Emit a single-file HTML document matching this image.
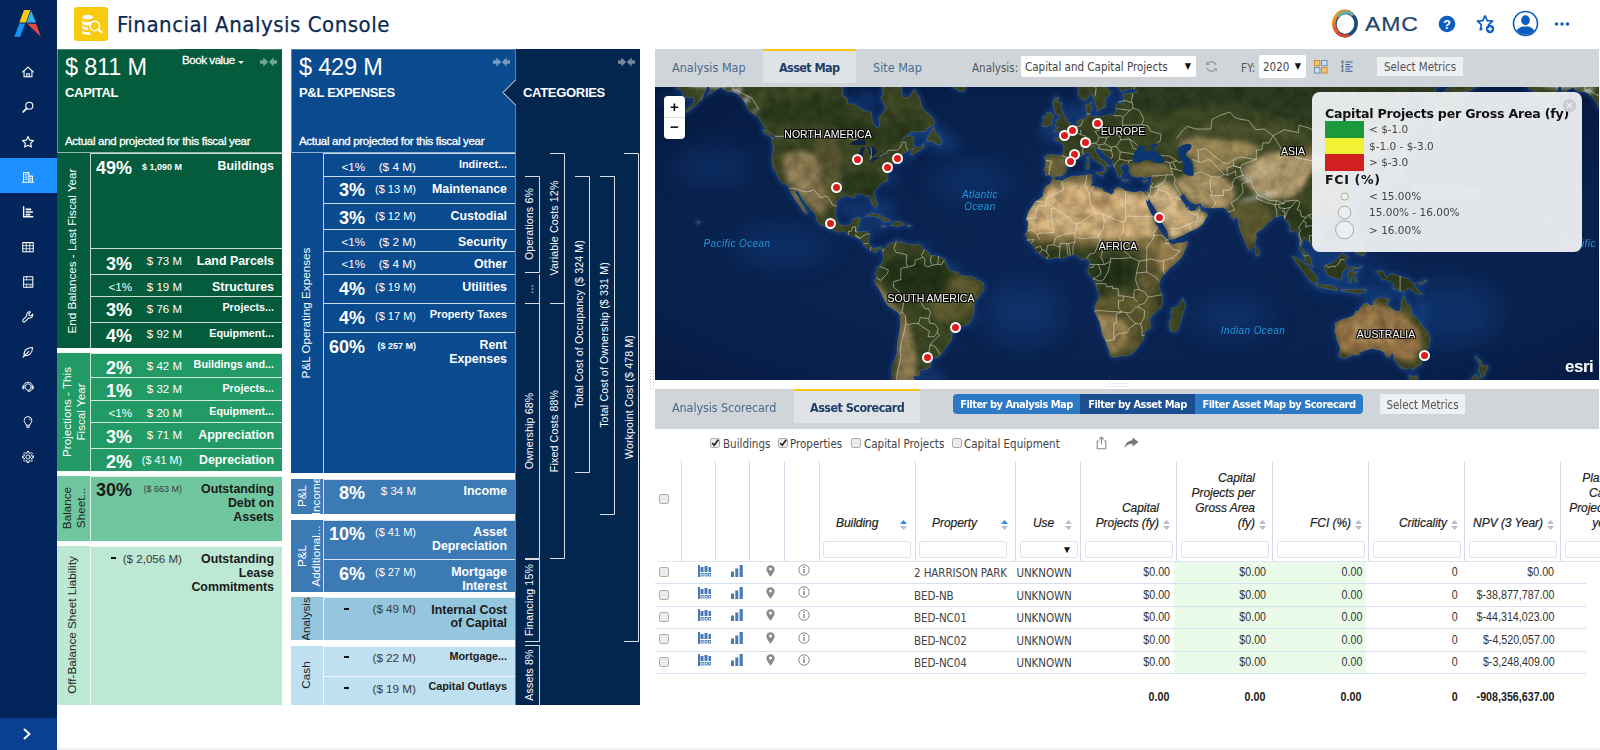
<!DOCTYPE html>
<html lang="en"><head><meta charset="utf-8"><title>Financial Analysis Console</title>
<style>

*{box-sizing:border-box;margin:0;padding:0}
html,body{width:1600px;height:750px;overflow:hidden;background:#fff}
body{position:relative;font-family:"Liberation Sans",sans-serif;font-size:12px;color:#fff}
.abs{position:absolute}
.os{font-family:"DejaVu Sans Condensed","DejaVu Sans",sans-serif;font-stretch:condensed}
/* sidebar */
#sb{position:absolute;left:0;top:0;width:56.6px;height:750px;background:#02265c}
#sb .act{position:absolute;left:0;top:158.3px;width:57px;height:35.2px;background:#1e90ff}
#sb .bot{position:absolute;left:0;top:718px;width:57px;height:32px;background:#0a3f93}
#sb svg{position:absolute;left:21.2px;width:14px;height:14px}
/* header */
#hd{position:absolute;left:57px;top:0;width:1543px;height:49px;background:#fff}
#hd .ico{position:absolute;left:17.4px;top:7.3px;width:33.5px;height:33.6px;background:#f9cb0f;border-radius:3px}
#hd .ttl{position:absolute;left:60px;top:11px;font-size:22px;line-height:28px;color:#0c2a52;letter-spacing:.53px;white-space:nowrap;-webkit-text-stroke:.25px #0c2a52}
/* panels */
.pn{position:absolute;top:49px;height:656px}
.row{position:absolute;left:0;right:0;border-top:1px solid rgba(255,255,255,.75)}
.lbl{position:absolute;left:0;width:34px;border-right:1px solid rgba(255,255,255,.75);overflow:hidden}
.lbl span{position:absolute;left:15.5px;top:50%;white-space:nowrap;transform:translate(-50%,-50%) rotate(-90deg);font-size:11.7px;letter-spacing:0;text-align:center;line-height:13px}
.it{position:absolute;border-top:1px solid rgba(255,255,255,.8)}
.pc{position:absolute;left:0;width:41px;text-align:right;font-weight:bold;font-size:18px;line-height:20px;letter-spacing:0}
.pc.s{font-size:11.7px;font-weight:normal;letter-spacing:-.1px}
.am{position:absolute;text-align:right;font-size:11.5px;letter-spacing:0;white-space:nowrap}
.am.t{font-size:9px;font-weight:bold;letter-spacing:0}
.nm{position:absolute;right:8px;text-align:right;font-weight:bold;font-size:12.4px;line-height:14px;letter-spacing:0;white-space:nowrap}
.dk{color:#1a1a1a}
.dk .am{color:#3a3a3a}
.dk .lbl span{color:#222}

</style></head>
<body>
<div id="sb"><svg style="left:13px;top:9px;width:30px;height:30px" viewBox="13 9 30 30"><path d="M24 10.1H30.4L25.9 22.5H19.4Z" fill="#f8c90c"/><path d="M31.1 10.5L35.9 22.5H26.4Z" fill="#36aef3"/><path d="M19.4 23.4H25.1L20.3 36.8H14.3Z" fill="#1692f5"/><path d="M27 23.6L36.2 23.9L40.9 36.8Z" fill="#e5493a"/></svg><svg style="top:65px" viewBox="0 0 16 16" fill="none" stroke="#fff" stroke-width="1.25" stroke-linecap="round" stroke-linejoin="round" ><path d="M2 8 L8 2.5 L14 8"/><path d="M3.5 7.5 V13.5 H12.5 V7.5"/><path d="M6.5 13.5 V10 H9.5 V13.5"/></svg><svg style="top:100px" viewBox="0 0 16 16" fill="none" stroke="#fff" stroke-width="1.25" stroke-linecap="round" stroke-linejoin="round" ><circle cx="9.5" cy="6.5" r="4"/><path d="M6.5 9.5 L2.5 13.5" stroke-width="2"/></svg><svg style="top:135px" viewBox="0 0 16 16" fill="none" stroke="#fff" stroke-width="1.25" stroke-linecap="round" stroke-linejoin="round" ><path d="M8 1.8 L9.9 5.9 L14.3 6.4 L11 9.4 L11.9 13.8 L8 11.6 L4.1 13.8 L5 9.4 L1.7 6.4 L6.1 5.9 Z"/></svg><div class="act"></div><svg style="top:170px" viewBox="0 0 16 16" fill="none" stroke="#fff" stroke-width="1.25" stroke-linecap="round" stroke-linejoin="round" ><path d="M3 14 V3 H9 V14 M9 7 H13 V14 M1.5 14 H14.5"/><path d="M5 5.5h2M5 8h2M5 10.5h2M10.5 9.5h1M10.5 11.5h1" stroke-width="1.1"/></svg><svg style="top:205px" viewBox="0 0 16 16" fill="none" stroke="#fff" stroke-width="1.25" stroke-linecap="round" stroke-linejoin="round" ><path d="M3 2 V13.5 H13.5" stroke-width="1.6"/><path d="M6 5h5M6 8h7M6 11h4" stroke-width="1.8"/></svg><svg style="top:240px" viewBox="0 0 16 16" fill="none" stroke="#fff" stroke-width="1.25" stroke-linecap="round" stroke-linejoin="round" ><rect x="2" y="3" width="12" height="10.500" stroke-width="1.150"/><path d="M2 6.500h12M2 10h12M6 3v10.500M10 3v10.500" stroke-width=".9"/></svg><svg style="top:275px" viewBox="0 0 16 16" fill="none" stroke="#fff" stroke-width="1.25" stroke-linecap="round" stroke-linejoin="round" ><rect x="3" y="2" width="10.500" height="12" stroke-width="1.150"/><path d="M3 5.500h10.500M3 10.500h10.500M6.500 2v3.500M6.500 10.500v3.500" stroke-width=".9"/><path d="M10 12.300h1.500" stroke-width="1"/></svg><svg style="top:310px" viewBox="0 0 16 16" fill="none" stroke="#fff" stroke-width="1.25" stroke-linecap="round" stroke-linejoin="round" ><path d="M11 2.3a3.500 3.500 0 0 0-4.400 4.500L2.400 11a1.550 1.550 0 0 0 2.200 2.200L8.800 9a3.500 3.500 0 0 0 4.500-4.400L11.200 6.700 9.300 6.300 8.900 4.400z" stroke-width="1.150"/></svg><svg style="top:345px" viewBox="0 0 16 16" fill="none" stroke="#fff" stroke-width="1.25" stroke-linecap="round" stroke-linejoin="round" ><path d="M3.500 12.200C2.800 6.500 7 2.800 13.200 2.800C13.200 9 9.500 13 3.800 12.300M2.300 14.200L9 7.300" stroke-width="1.150"/></svg><svg style="top:380px" viewBox="0 0 16 16" fill="none" stroke="#fff" stroke-width="1.25" stroke-linecap="round" stroke-linejoin="round" ><path d="M3.300 9V7.300a4.700 4.700 0 0 1 9.400 0V9" stroke-width="1.100"/><path d="M5 7.300a3 3 0 0 1 6 0v1.500a3 3 0 0 1-6 0z" stroke-width="1"/><rect x="1.700" y="6.800" width="1.800" height="3.400" rx=".8" fill="#fff" stroke-width=".6"/><rect x="12.500" y="6.800" width="1.800" height="3.400" rx=".8" fill="#fff" stroke-width=".6"/><path d="M12.700 10.200c0 1.800-1.500 2.600-3.700 2.600" stroke-width="1"/><circle cx="8.600" cy="12.800" r=".8" fill="#fff" stroke="none"/></svg><svg style="top:415px" viewBox="0 0 16 16" fill="none" stroke="#fff" stroke-width="1.25" stroke-linecap="round" stroke-linejoin="round" ><path d="M5.900 11.200C5.900 9.800 3.600 8.800 3.600 6.200a4.400 4.400 0 0 1 8.800 0c0 2.600-2.300 3.600-2.300 5z" stroke-width="1.100"/><path d="M6.200 12.800h3.600M6.700 14.400h2.600" stroke-width="1"/><path d="M9.300 4.200a2.300 2.300 0 0 1 1.300 1.600" stroke-width=".8"/></svg><svg style="top:450px" viewBox="0 0 16 16" fill="none" stroke="#fff" stroke-width="1.25" stroke-linecap="round" stroke-linejoin="round" ><path d="M14.21 6.92L14.21 9.08L12.49 9.00L11.88 10.46L13.15 11.62L11.62 13.15L10.46 11.88L9.00 12.49L9.08 14.21L6.92 14.21L7.00 12.49L5.54 11.88L4.38 13.15L2.85 11.62L4.12 10.46L3.51 9.00L1.79 9.08L1.79 6.92L3.51 7.00L4.12 5.54L2.85 4.38L4.38 2.85L5.54 4.12L7.00 3.51L6.92 1.79L9.08 1.79L9.00 3.51L10.46 4.12L11.62 2.85L13.15 4.38L11.88 5.54L12.49 7.00Z" stroke-width="1.050"/><circle cx="8" cy="8" r="2.400" stroke-width="1.050"/></svg><div class="bot"></div><svg style="left:21px;top:727px;width:12px;height:14px" viewBox="0 0 12 14" fill="none" stroke="#fff" stroke-width="2" stroke-linecap="round" stroke-linejoin="round"><path d="M3.5 2.5 L8.5 7 L3.5 11.5"/></svg></div>
<div id="hd">
<div class="ico"><svg width="33.5" height="33.6" viewBox="74.1 7.3 33.5 33.6"><g fill="#fff"><ellipse cx="87.8" cy="17.4" rx="5.4" ry="2.3"/><path d="M82.4 20.2c0 1.3 2.4 2.3 5.4 2.3s5.4-1 5.4-2.3v2.6c-2 .4-3.6 1.500-4.500 3-3.200.3-6.300-.800-6.300-2.100zM82.400 25.400c0 1.300 2.400 2.300 5.400 2.300h.5c-.1.900 0 1.800.3 2.600-3.400.2-6.200-.900-6.200-2.200zM82.400 30.200c0 1.300 2.400 2.300 5.400 2.300.5 0 1 0 1.400-.1.600.9 1.400 1.600 2.300 2.100-1 .4-2.300.600-3.700.600-3 0-5.400-1-5.400-2.300z"/></g><circle cx="94.9" cy="26.300" r="4.700" fill="none" stroke="#fff" stroke-width="1.500"/><path d="M98.400 29.600l3.400 3.200" stroke="#fff" stroke-width="2" stroke-linecap="round"/></svg></div>
<div class="ttl os">Financial Analysis Console</div>
<svg class="abs" style="left:1273px;top:9px" width="32" height="30" viewBox="0 0 32 30"><defs><linearGradient id="rg" x1="0" y1="0" x2="1" y2="1"><stop offset="0" stop-color="#f0b429"/><stop offset=".45" stop-color="#e8572b"/><stop offset="1" stop-color="#8cc63f"/></linearGradient></defs><ellipse cx="15.5" cy="15" rx="10.6" ry="11.6" fill="none" stroke="#1d4a7a" stroke-width="3.6" transform="rotate(12 15.5 15)"/><path d="M22 5 A11 12 0 0 0 8 24" fill="none" stroke="url(#rg)" stroke-width="3.6" stroke-linecap="round"/><path d="M8 24 A11 12 0 0 0 18 26.6" fill="none" stroke="#d8432a" stroke-width="3" stroke-linecap="round"/><path d="M9 6.5 A11 12 0 0 1 22 5" fill="none" stroke="#5bb8a6" stroke-width="3" stroke-linecap="round"/></svg>
<div class="abs" style="left:1307.500px;top:9px;font:20.400px/30px 'Liberation Sans',sans-serif;color:#1f456f;letter-spacing:.8px;transform:scaleX(1.13);transform-origin:0 50%;-webkit-text-stroke:.2px #1f456f">AMC</div>
<svg class="abs" style="left:1381px;top:15px" width="18" height="18" viewBox="0 0 18 18"><circle cx="9" cy="9" r="8.3" fill="#0b5cbf"/><text x="9" y="13.6" text-anchor="middle" font-family="Liberation Sans,sans-serif" font-weight="bold" font-size="13" fill="#fff">?</text></svg>
<svg class="abs" style="left:1418px;top:13px" width="22" height="22" viewBox="0 0 22 22" fill="none" stroke="#0b5cbf" stroke-width="1.7" stroke-linejoin="round"><path d="M10 2.5 L12.2 7.6 L17.6 8.1 L13.6 11.6 L14.2 13 M7.5 15.5 L5.3 16.8 L6.4 11.6 L2.4 8.1 L7.8 7.6 L10 2.5"/><circle cx="15" cy="16" r="4.2" fill="#0b5cbf" stroke="none"/><path d="M15 13.8v4.4M12.8 16h4.4" stroke="#fff" stroke-width="1.4"/></svg>
<svg class="abs" style="left:1455px;top:10px" width="27" height="27" viewBox="0 0 27 27"><defs><clipPath id="uc"><circle cx="13.5" cy="13.5" r="11.2"/></clipPath></defs><circle cx="13.5" cy="13.5" r="12" fill="#fff" stroke="#0b5cbf" stroke-width="1.6"/><g clip-path="url(#uc)" fill="#0b5cbf"><ellipse cx="13.5" cy="10.3" rx="4.3" ry="5"/><path d="M3 27 C3 19 8 17.5 10.5 16.5 L16.5 16.5 C19 17.5 24 19 24 27 Z"/></g></svg>
<svg class="abs" style="left:1497px;top:21px" width="16" height="6" viewBox="0 0 16 6" fill="#0b5cbf"><circle cx="2.5" cy="3" r="1.7"/><circle cx="8" cy="3" r="1.7"/><circle cx="13.5" cy="3" r="1.7"/></svg>
</div>
<div class="pn" style="left:57px;width:225px;background:#fff"><div class="abs" style="left:0;top:0;width:100%;height:104px;background:#045c3c;border-left:1px solid #5f9c84"><div class="abs" style="left:7px;top:4px;font-size:23.5px;line-height:28px;letter-spacing:-.2px">$ 811 M</div><div class="abs" style="left:7px;top:36px;font-size:13px;font-weight:bold;letter-spacing:-.3px">CAPITAL</div><div class="abs" style="left:7px;top:85.8px;letter-spacing:-.3px;font-size:11.5px;white-space:nowrap;-webkit-text-stroke:.3px #fff">Actual and projected for this fiscal year</div><div class="abs" style="left:124px;top:5px;letter-spacing:-.42px;font-size:11.5px;white-space:nowrap;-webkit-text-stroke:.3px #fff">Book value</div><div class="abs" style="left:179.5px;top:12px;width:0;height:0;border:3px solid transparent;border-top:3.5px solid #e6efe9"></div><svg class="abs" style="right:5px;top:8px" width="17" height="10" viewBox="0 0 17 10" fill="rgba(255,255,255,.45)"><path d="M0 3.300h3.300V.600L8.200 5 3.300 9.400V6.700H0zM17 3.300h-3.300V.600L8.800 5l4.900 4.400V6.700H17z"/></svg><div class="abs" style="left:0;right:0;top:103.2px;height:1px;background:rgba(255,255,255,.55)"></div><div class="abs" style="left:0;width:121px;top:0;height:1px;background:rgba(255,255,255,.28)"></div><div class="abs" style="left:200px;right:0;top:0;height:1px;background:rgba(255,255,255,.28)"></div></div><div class="abs " style="left:0;top:104.0px;width:100%;height:195.2px;background:#045c3c"><div class="lbl" style="top:0;height:195.2px;width:34px"><span style="left:14px">End Balances - Last Fiscal Year</span></div><div class="it" style="left:34px;right:0;top:0.0px;height:95.0px"><div class="pc" style="top:4.1px;line-height:20px">49%</div><div class="am" style="top:6.0px;line-height:14px;font-size:9px;font-weight:bold;right:100px">$ 1,090 M</div><div class="nm" style="top:5.8px;font-size:12.4px;line-height:13.9px">Buildings</div></div><div class="it" style="left:34px;right:0;top:95.0px;height:26.0px"><div class="pc" style="top:5.0px;line-height:20px">3%</div><div class="am" style="top:4.8px;line-height:14px;font-size:11.5px;right:100px">$ 73 M</div><div class="nm" style="top:5.8px;font-size:12.4px;line-height:13.9px">Land Parcels</div></div><div class="it" style="left:34px;right:0;top:121.0px;height:22.0px"><div class="pc s" style="top:4.1px;line-height:16px">&lt;1%</div><div class="am" style="top:5.0px;line-height:14px;font-size:11.5px;right:100px">$ 19 M</div><div class="nm" style="top:6.1px;font-size:12.4px;line-height:13.9px">Structures</div></div><div class="it" style="left:34px;right:0;top:143.0px;height:25.6px"><div class="pc" style="top:3.0px;line-height:20px">3%</div><div class="am" style="top:4.8px;line-height:14px;font-size:11.5px;right:100px">$ 76 M</div><div class="nm" style="top:3.6px;font-size:10.8px;line-height:13.9px">Projects...</div></div><div class="it" style="left:34px;right:0;top:168.6px;height:26.6px"><div class="pc" style="top:3.4px;line-height:20px">4%</div><div class="am" style="top:4.9px;line-height:14px;font-size:11.5px;right:100px">$ 92 M</div><div class="nm" style="top:4.0px;font-size:10.8px;line-height:13.9px">Equipment...</div></div></div><div class="abs " style="left:0;top:304.0px;width:100%;height:117.8px;background:#229a65"><div class="lbl" style="top:0;height:117.8px;width:34px"><span style="left:17.3px;line-height:14.4px">Projections - This<br>Fiscal Year</span></div><div class="it" style="left:34px;right:0;top:0.0px;height:23.5px"><div class="pc" style="top:4.4px;line-height:20px">2%</div><div class="am" style="top:5.0px;line-height:14px;font-size:11.5px;right:100px">$ 42 M</div><div class="nm" style="top:4.2px;font-size:10.8px;line-height:13.9px">Buildings and...</div></div><div class="it" style="left:34px;right:0;top:23.5px;height:23.0px"><div class="pc" style="top:3.8px;line-height:20px">1%</div><div class="am" style="top:4.5px;line-height:14px;font-size:11.5px;right:100px">$ 32 M</div><div class="nm" style="top:4.1px;font-size:10.8px;line-height:13.9px">Projects...</div></div><div class="it" style="left:34px;right:0;top:46.5px;height:22.5px"><div class="pc s" style="top:4.5px;line-height:16px">&lt;1%</div><div class="am" style="top:5.2px;line-height:14px;font-size:11.5px;right:100px">$ 20 M</div><div class="nm" style="top:4.5px;font-size:10.8px;line-height:13.9px">Equipment...</div></div><div class="it" style="left:34px;right:0;top:69.0px;height:26.0px"><div class="pc" style="top:3.8px;line-height:20px">3%</div><div class="am" style="top:5.0px;line-height:14px;font-size:11.5px;right:100px">$ 71 M</div><div class="nm" style="top:5.9px;font-size:12.4px;line-height:13.9px">Appreciation</div></div><div class="it" style="left:34px;right:0;top:95.0px;height:22.8px"><div class="pc" style="top:3.0px;line-height:20px">2%</div><div class="am" style="top:4.2px;line-height:14px;font-size:10.8px;right:100px">($ 41 M)</div><div class="nm" style="top:5.1px;font-size:12.4px;line-height:13.9px">Depreciation</div></div></div><div class="abs dk" style="left:0;top:427.0px;width:100%;height:64.8px;background:#70c69f"><div class="lbl" style="top:0;height:64.8px;width:34px"><span style="left:17.3px;line-height:14.4px">Balance<br>Sheet...</span></div><div class="it" style="left:34px;right:0;top:0.0px;height:64.8px"><div class="pc" style="top:3.0px;line-height:20px">30%</div><div class="am" style="top:5.3px;line-height:14px;font-size:9px;right:100px">($ 663 M)</div><div class="nm" style="top:6.3px;font-size:12.4px;line-height:13.9px">Outstanding<br>Debt on<br>Assets</div></div></div><div class="abs dk" style="left:0;top:496.8px;width:100%;height:159.2px;background:#bce8d4"><div class="lbl" style="top:0;height:159.2px;width:34px"><span style="left:14px">Off-Balance Sheet Liability</span></div><div class="it" style="left:34px;right:0;top:0.0px;height:159.2px"><div class="pc" style="top:3.2px;line-height:20px"><span style="display:inline-block;width:5px;height:2.2px;background:#111;position:relative;left:-16.5px;top:-6.6px"></span></div><div class="am" style="top:4.8px;line-height:14px;font-size:11.6px;right:100px">($ 2,056 M)</div><div class="nm" style="top:6.1px;font-size:12.4px;line-height:13.9px">Outstanding<br>Lease<br>Commitments</div></div></div></div><div class="pn" style="left:291px;width:224px;background:#fff"><div class="abs" style="left:0;top:0;width:100%;height:104px;background:#0a4a8f;border-left:1px solid #5f86b5"><div class="abs" style="left:7px;top:4px;font-size:23.5px;line-height:28px;letter-spacing:-.2px">$ 429 M</div><div class="abs" style="left:7px;top:36px;font-size:13px;font-weight:bold;letter-spacing:-.3px">P&amp;L EXPENSES</div><div class="abs" style="left:7px;top:85.8px;letter-spacing:-.3px;font-size:11.5px;white-space:nowrap;-webkit-text-stroke:.3px #fff">Actual and projected for this fiscal year</div><svg class="abs" style="right:5px;top:8px" width="17" height="10" viewBox="0 0 17 10" fill="rgba(255,255,255,.45)"><path d="M0 3.300h3.300V.600L8.200 5 3.300 9.400V6.700H0zM17 3.300h-3.300V.600L8.800 5l4.900 4.400V6.700H17z"/></svg><div class="abs" style="left:0;right:0;top:103.2px;height:1px;background:rgba(255,255,255,.55)"></div><div class="abs" style="left:0;right:0;top:0;height:1px;background:rgba(255,255,255,.3)"></div></div><div class="abs " style="left:0;top:104.0px;width:100%;height:320.0px;background:#0a4a8f"><div class="lbl" style="top:0;height:320.0px;width:33px"><span style="left:14px">P&amp;L Operating Expenses</span></div><div class="it" style="left:33px;right:0;top:0.0px;height:23.1px"><div class="pc s" style="top:4.6px;line-height:16px">&lt;1%</div><div class="am" style="top:5.6px;line-height:14px;font-size:11.8px;right:99px">($ 4 M)</div><div class="nm" style="top:4.3px;font-size:10.8px;line-height:13.9px">Indirect...</div></div><div class="it" style="left:33px;right:0;top:23.1px;height:26.6px"><div class="pc" style="top:2.9px;line-height:20px">3%</div><div class="am" style="top:4.6px;line-height:14px;font-size:11px;right:99px">($ 13 M)</div><div class="nm" style="top:5.5px;font-size:12.4px;line-height:13.9px">Maintenance</div></div><div class="it" style="left:33px;right:0;top:49.7px;height:26.5px"><div class="pc" style="top:4.2px;line-height:20px">3%</div><div class="am" style="top:5.3px;line-height:14px;font-size:11px;right:99px">($ 12 M)</div><div class="nm" style="top:6.3px;font-size:12.4px;line-height:13.9px">Custodial</div></div><div class="it" style="left:33px;right:0;top:76.2px;height:22.0px"><div class="pc s" style="top:3.6px;line-height:16px">&lt;1%</div><div class="am" style="top:4.6px;line-height:14px;font-size:11.8px;right:99px">($ 2 M)</div><div class="nm" style="top:5.5px;font-size:12.4px;line-height:13.9px">Security</div></div><div class="it" style="left:33px;right:0;top:98.2px;height:22.6px"><div class="pc s" style="top:3.6px;line-height:16px">&lt;1%</div><div class="am" style="top:4.6px;line-height:14px;font-size:11.8px;right:99px">($ 4 M)</div><div class="nm" style="top:5.5px;font-size:12.4px;line-height:13.9px">Other</div></div><div class="it" style="left:33px;right:0;top:120.8px;height:29.5px"><div class="pc" style="top:4.4px;line-height:20px">4%</div><div class="am" style="top:5.1px;line-height:14px;font-size:11px;right:99px">($ 19 M)</div><div class="nm" style="top:6.0px;font-size:12.4px;line-height:13.9px">Utilities</div></div><div class="it" style="left:33px;right:0;top:150.3px;height:28.5px"><div class="pc" style="top:4.1px;line-height:20px">4%</div><div class="am" style="top:4.9px;line-height:14px;font-size:11px;right:99px">($ 17 M)</div><div class="nm" style="top:3.9px;font-size:10.8px;line-height:13.9px">Property Taxes</div></div><div class="it" style="left:33px;right:0;top:178.8px;height:141.2px"><div class="pc" style="top:4.4px;line-height:20px">60%</div><div class="am" style="top:6.5px;line-height:14px;font-size:9px;font-weight:bold;right:99px">($ 257 M)</div><div class="nm" style="top:6.5px;font-size:12.4px;line-height:13.9px">Rent<br>Expenses</div></div></div><div class="abs " style="left:0;top:429.5px;width:100%;height:35.5px;background:#3c7ab6"><div class="lbl" style="top:0;height:35.5px;width:33px"><span style="left:17.6px;line-height:14.4px">P&amp;L<br>Income</span></div><div class="it" style="left:33px;right:0;top:0.0px;height:35.5px"><div class="pc" style="top:3.9px;line-height:20px">8%</div><div class="am" style="top:4.6px;line-height:14px;font-size:11.5px;right:99px">$ 34 M</div><div class="nm" style="top:5.5px;font-size:12.4px;line-height:13.9px">Income</div></div></div><div class="abs " style="left:0;top:471.0px;width:100%;height:72.0px;background:#3c7ab6"><div class="lbl" style="top:0;height:72.0px;width:33px"><span style="left:17.6px;line-height:14.4px">P&amp;L<br>Additional...</span></div><div class="it" style="left:33px;right:0;top:0.0px;height:38.6px"><div class="pc" style="top:3.0px;line-height:20px">10%</div><div class="am" style="top:4.0px;line-height:14px;font-size:11px;right:99px">($ 41 M)</div><div class="nm" style="top:4.9px;font-size:12.4px;line-height:13.9px">Asset<br>Depreciation</div></div><div class="it" style="left:33px;right:0;top:38.6px;height:33.4px"><div class="pc" style="top:4.3px;line-height:20px">6%</div><div class="am" style="top:5.5px;line-height:14px;font-size:11px;right:99px">($ 27 M)</div><div class="nm" style="top:6.3px;font-size:12.4px;line-height:13.9px">Mortgage<br>Interest</div></div></div><div class="abs dk" style="left:0;top:548.2px;width:100%;height:42.8px;background:#94c6de"><div class="lbl" style="top:0;height:42.8px;width:33px"><span style="left:14px">Analysis</span></div><div class="it" style="left:33px;right:0;top:0.0px;height:42.8px"><div class="pc" style="top:2.6px;line-height:20px"><span style="display:inline-block;width:5px;height:2.2px;background:#111;position:relative;left:-16.5px;top:-6.6px"></span></div><div class="am" style="top:4.1px;line-height:14px;font-size:11.7px;right:99px">($ 49 M)</div><div class="nm" style="top:5.4px;font-size:12.4px;line-height:13.9px">Internal Cost<br>of Capital</div></div></div><div class="abs dk" style="left:0;top:596.7px;width:100%;height:59.3px;background:#bfe0f0"><div class="lbl" style="top:0;height:59.3px;width:33px"><span style="left:14px">Cash</span></div><div class="it" style="left:33px;right:0;top:0.0px;height:30.2px"><div class="pc" style="top:2.3px;line-height:20px"><span style="display:inline-block;width:5px;height:2.2px;background:#111;position:relative;left:-16.5px;top:-6.6px"></span></div><div class="am" style="top:4.6px;line-height:14px;font-size:11.7px;right:99px">($ 22 M)</div><div class="nm" style="top:3.2px;font-size:10.8px;line-height:13.9px">Mortgage...</div></div><div class="it" style="left:33px;right:0;top:30.2px;height:29.1px"><div class="pc" style="top:3.1px;line-height:20px"><span style="display:inline-block;width:5px;height:2.2px;background:#111;position:relative;left:-16.5px;top:-6.6px"></span></div><div class="am" style="top:5.0px;line-height:14px;font-size:11.7px;right:99px">($ 19 M)</div><div class="nm" style="top:3.6px;font-size:10.8px;line-height:13.9px">Capital Outlays</div></div></div></div><div class="pn" style="left:515px;width:125px;background:#03264f"><svg class="abs" style="right:5px;top:8px" width="17" height="10" viewBox="0 0 17 10" fill="rgba(255,255,255,.45)"><path d="M0 3.300h3.300V.600L8.200 5 3.300 9.400V6.700H0zM17 3.300h-3.300V.600L8.800 5l4.900 4.400V6.700H17z"/></svg><div class="abs" style="left:8px;top:36px;font-size:13px;font-weight:bold;letter-spacing:-.3px">CATEGORIES</div><svg class="abs" style="left:-14px;top:0" width="139" height="656" viewBox="-14 0 139 656" fill="none" stroke="rgba(255,255,255,.85)" stroke-width="1"><path d="M0.5 30 L-12 43.5 L0.5 57 Z" fill="#03264f" stroke="none"/><path d="M0.5 0 V31 M0.5 56 V656" stroke="rgba(255,255,255,.4)"/><path d="M0.5 31 L-12 43.5 L0.5 56" stroke="#fff"/><path d="M10 127.5H24.5V223.5H10"/><path d="M24.5 225.5V254.5H10"/><path d="M24.5 254.5V509.5H10"/><path d="M10 510.5H24.5V592.5H10"/><path d="M10 596.5H24.5V656.5"/><path d="M35 104.5H49.5V254.5H35"/><path d="M49.5 254.5V509.5H35"/><path d="M60 127.5H74.5V423.5H60"/><path d="M85 127.5H99.5V465.5H85"/><path d="M109 104.5H123.5V592.5H109"/></svg><div class="abs" style="left:14px;top:175px;width:0;height:0"><div style="position:absolute;white-space:nowrap;font-size:10.6px;letter-spacing:.15px;transform:translate(-50%,-50%) rotate(-90deg);line-height:12px">Operations 6%</div></div><div class="abs" style="left:14px;top:240px;width:0;height:0"><div style="position:absolute;white-space:nowrap;font-size:10.6px;letter-spacing:.15px;transform:translate(-50%,-50%) rotate(-90deg);line-height:12px">...</div></div><div class="abs" style="left:14px;top:382px;width:0;height:0"><div style="position:absolute;white-space:nowrap;font-size:10.6px;letter-spacing:.15px;transform:translate(-50%,-50%) rotate(-90deg);line-height:12px">Ownership 68%</div></div><div class="abs" style="left:14px;top:551px;width:0;height:0"><div style="position:absolute;white-space:nowrap;font-size:10.6px;letter-spacing:.15px;transform:translate(-50%,-50%) rotate(-90deg);line-height:12px">Financing 15%</div></div><div class="abs" style="left:14px;top:626px;width:0;height:0"><div style="position:absolute;white-space:nowrap;font-size:10.6px;letter-spacing:.15px;transform:translate(-50%,-50%) rotate(-90deg);line-height:12px">Assets 8%</div></div><div class="abs" style="left:39px;top:179px;width:0;height:0"><div style="position:absolute;white-space:nowrap;font-size:10.6px;letter-spacing:.15px;transform:translate(-50%,-50%) rotate(-90deg);line-height:12px">Variable Costs 12%</div></div><div class="abs" style="left:39px;top:382px;width:0;height:0"><div style="position:absolute;white-space:nowrap;font-size:10.6px;letter-spacing:.15px;transform:translate(-50%,-50%) rotate(-90deg);line-height:12px">Fixed Costs 88%</div></div><div class="abs" style="left:64px;top:275px;width:0;height:0"><div style="position:absolute;white-space:nowrap;font-size:10.6px;letter-spacing:.15px;transform:translate(-50%,-50%) rotate(-90deg);line-height:12px">Total Cost of Occupancy ($ 324 M)</div></div><div class="abs" style="left:89px;top:296px;width:0;height:0"><div style="position:absolute;white-space:nowrap;font-size:10.6px;letter-spacing:.15px;transform:translate(-50%,-50%) rotate(-90deg);line-height:12px">Total Cost of Ownership ($ 331 M)</div></div><div class="abs" style="left:113.5px;top:348px;width:0;height:0"><div style="position:absolute;white-space:nowrap;font-size:10.6px;letter-spacing:.15px;transform:translate(-50%,-50%) rotate(-90deg);line-height:12px">Workpoint Cost ($ 478 M)</div></div></div>
<div class="abs" style="left:655px;top:49px;width:944px;height:38.4px;background:#d0d5d9"></div><div class="abs" style="left:763px;top:49px;width:93px;height:34px;background:#dfe3e6;border-top:2px solid #f6c61a"></div><div class="abs os" style="left:672px;top:60px;font-size:12.5px;line-height:16px;color:#4b6b8d;white-space:nowrap">Analysis Map</div><div class="abs os" style="left:779px;top:60px;font-size:12.5px;line-height:16px;font-weight:bold;color:#1e3e69;white-space:nowrap;letter-spacing:-.6px">Asset Map</div><div class="abs os" style="left:873px;top:60px;font-size:12.5px;line-height:16px;color:#4b6b8d;white-space:nowrap">Site Map</div><div class="abs os" style="left:972px;top:61px;font-size:11.5px;line-height:14px;color:#555;white-space:nowrap;letter-spacing:0">Analysis:</div><div class="abs os" style="left:1021px;top:56px;width:175px;height:21px;background:#fff;border-radius:2px;font-size:11.5px;line-height:23px;color:#444;padding-left:4px;white-space:nowrap;letter-spacing:0">Capital and Capital Projects<span style="position:absolute;right:5px;top:-1px;font-size:9px;color:#111">&#9660;</span></div><svg class="abs" style="left:1205px;top:60px" width="13" height="13" viewBox="0 0 13 13" fill="none" stroke="#9aa1a8" stroke-width="1.4"><path d="M11 5.2A4.8 4.8 0 0 0 2.3 4M2 7.8A4.8 4.8 0 0 0 10.7 9"/><path d="M1.8 1.8V4.4H4.4M11.2 11.2V8.6H8.6"/></svg><div class="abs os" style="left:1241px;top:61px;font-size:11.5px;line-height:14px;color:#555;white-space:nowrap;letter-spacing:0">FY:</div><div class="abs os" style="left:1259px;top:55px;width:47px;height:23px;background:#fff;border-radius:2px;font-size:11.5px;line-height:25px;color:#444;padding-left:4px;white-space:nowrap;letter-spacing:0">2020<span style="position:absolute;right:5px;top:-1px;font-size:9px;color:#111">&#9660;</span></div><svg class="abs" style="left:1314px;top:60px" width="13.5" height="13.5" viewBox="0 0 15 15"><rect x=".5" y=".5" width="6" height="6" fill="#f3c27a" stroke="#c98a2b"/><rect x="8.5" y=".5" width="6" height="6" fill="#cfe0ee" stroke="#5a87b5"/><rect x=".5" y="8.5" width="6" height="6" fill="#cfe0ee" stroke="#5a87b5"/><rect x="8.5" y="8.5" width="6" height="6" fill="#f3c27a" stroke="#c98a2b"/></svg><svg class="abs" style="left:1341px;top:60px" width="12.5" height="13.5" viewBox="0 0 14 15"><g fill="#c98a2b"><rect x="0" y="1" width="2.5" height="2.5"/><rect x="0" y="6" width="2.5" height="2.5"/><rect x="0" y="11" width="2.5" height="2.5"/></g><path d="M2 0v13" stroke="#2b5fa3" stroke-width=".8"/><g stroke="#2b5fa3" stroke-width="1.3"><path d="M5 2.2h8M5 5h5M5 7.5h8M5 10h5M5 12.5h8"/></g></svg><div class="abs os" style="left:1377px;top:57px;width:86px;height:19px;background:#eef0f2;font-size:11.5px;line-height:20px;color:#555;text-align:center;white-space:nowrap;letter-spacing:-.05px">Select Metrics</div><div class="abs" id="map" style="left:655px;top:87.4px;width:944px;height:292.6px;overflow:hidden;background:#0a2049"><svg id="mapsvg" width="945" height="294" viewBox="0 0 945 294">
<defs>
<radialGradient id="oc" cx="50%" cy="55%" r="70%"><stop offset="0" stop-color="#0b2555"/><stop offset=".7" stop-color="#09214d"/><stop offset="1" stop-color="#061a41"/></radialGradient>
<filter id="b2" x="-30%" y="-30%" width="160%" height="160%"><feGaussianBlur stdDeviation="2.2"/></filter>
<filter id="b4" x="-30%" y="-30%" width="160%" height="160%"><feGaussianBlur stdDeviation="2.6"/></filter>
<filter id="b14" x="-50%" y="-50%" width="200%" height="200%"><feGaussianBlur stdDeviation="14"/></filter>
<filter id="b6" x="-30%" y="-30%" width="160%" height="160%"><feGaussianBlur stdDeviation="6"/></filter>
<filter id="b1" x="-10%" y="-10%" width="120%" height="120%"><feGaussianBlur stdDeviation="0.5"/></filter>
<filter id="nz" x="0" y="0" width="100%" height="100%"><feTurbulence type="fractalNoise" baseFrequency="0.09" numOctaves="3" seed="7" result="n"/><feColorMatrix in="n" type="matrix" values="0 0 0 0 0  0 0 0 0 0  0 0 0 0 0  0.9 0.9 0 0 -0.62"/></filter>
<clipPath id="landclip"><path d="M14.0,-27.2 21.1,-8.1 21.6,1.3 27.5,4.2 28.2,9.8 35.3,10.7 38.9,10.2 39.3,15.1 32.9,22.1 27.0,25.4 21.6,28.3 25.8,27.5 30.6,25.4 36.5,22.1 42.4,16.5 47.1,12.0 48.8,6.5 51.9,-0.1 54.2,-1.6 55.4,4.2 52.6,7.9 57.8,5.1 61.3,2.7 66.1,0.3 70.8,4.2 76.7,4.6 81.4,6.1 86.2,10.7 89.7,15.1 92.1,20.4 95.6,25.0 100.4,27.9 103.4,30.3 106.3,35.1 109.1,40.1 111.0,43.5 115.8,46.4 120.0,48.6 121.7,52.2 116.5,51.5 117.9,58.1 118.1,63.9 116.9,70.4 117.4,78.0 118.6,82.3 121.7,86.0 123.1,89.5 126.2,95.4 130.9,97.1 134.2,100.8 136.3,106.0 139.4,111.0 141.3,114.2 145.3,119.5 147.7,123.4 151.2,127.0 152.7,126.0 150.5,123.1 148.2,118.4 145.3,114.2 143.7,110.4 140.1,105.5 140.1,103.6 143.7,104.7 145.8,109.3 149.8,114.7 152.9,119.0 156.4,123.1 160.2,126.8 161.9,130.8 161.7,133.9 164.7,136.9 169.7,139.4 174.9,142.1 179.6,144.1 184.4,145.1 187.7,143.9 191.5,146.1 193.8,148.0 198.6,149.7 203.3,151.2 204.7,151.9 208.0,155.3 208.7,158.2 210.4,159.4 213.5,162.0 215.6,163.5 219.9,165.1 221.5,165.4 222.2,163.0 223.4,161.6 225.8,162.8 227.7,164.9 228.6,162.3 225.5,160.1 222.2,160.8 218.7,161.6 216.3,160.1 213.9,157.5 213.5,154.1 214.4,148.0 214.6,146.8 211.6,144.8 208.0,144.6 203.3,144.8 201.4,144.3 202.6,140.6 203.8,138.6 204.5,135.6 206.1,131.4 204.5,130.6 200.9,130.8 197.6,131.9 196.9,135.6 195.0,137.9 191.5,138.4 187.9,138.9 184.8,137.4 183.2,135.4 181.3,131.9 180.1,128.0 180.3,124.2 181.5,119.0 181.1,115.0 184.4,111.8 187.4,109.6 191.5,108.8 195.0,109.6 197.4,110.4 200.2,110.7 199.7,107.7 203.3,107.1 206.8,107.1 209.7,109.1 212.8,108.2 215.1,111.0 215.8,114.2 217.5,117.6 219.1,120.0 220.3,121.1 221.5,120.3 222.2,116.8 221.0,112.3 219.1,108.2 219.4,104.1 222.2,101.0 225.1,97.6 228.1,95.6 231.0,94.2 232.9,93.3 231.7,88.9 232.2,86.9 233.6,83.9 235.2,81.4 236.4,77.7 241.1,76.2 243.5,74.6 245.9,74.0 245.9,73.0 244.0,71.4 244.7,68.2 248.2,66.5 253.0,64.2 255.3,62.6 258.2,61.2 255.3,67.5 257.7,68.2 261.3,64.9 267.2,62.2 269.5,59.8 268.4,56.4 266.0,60.2 262.4,60.5 258.9,58.8 257.7,54.7 258.9,50.1 255.3,48.6 249.4,51.1 244.7,55.7 247.1,52.2 251.8,47.9 255.3,45.0 262.4,44.6 269.5,44.6 273.1,40.8 277.8,38.9 279.7,36.2 279.0,32.3 274.3,27.1 269.5,24.2 266.0,17.8 264.8,11.1 260.1,3.2 258.9,2.3 255.3,8.8 250.6,11.1 247.1,8.8 245.9,-0.6 241.1,-4.6 234.0,-7.1 227.0,-7.6 227.4,1.8 228.1,8.8 225.8,10.2 229.3,17.8 230.5,22.1 227.0,27.1 223.4,30.3 224.6,36.2 224.6,40.1 221.0,40.8 217.5,35.1 216.8,28.3 216.3,25.4 210.4,24.2 203.3,19.9 198.6,16.9 192.6,16.9 191.9,11.1 187.9,8.8 187.4,1.8 191.5,-5.6 198.6,-16.0 198.6,-67.1 14.0,-67.1ZM271.2,54.3 279.0,54.3 280.2,56.8 284.9,57.8 286.8,54.7 284.9,51.1 284.2,48.2 280.2,45.7 279.0,40.1 277.1,42.0 275.5,45.7 273.1,50.1ZM107.7,42.7 113.4,44.2 119.3,51.1 116.9,51.1 113.4,48.2 108.7,45.7ZM210.4,129.6 215.1,127.0 219.9,126.5 224.6,128.0 229.3,130.6 234.0,132.6 235.9,133.9 234.0,134.6 228.1,134.6 227.0,132.6 223.4,130.6 218.7,129.1 213.9,129.1ZM235.5,138.4 240.0,138.9 242.3,140.1 245.9,138.6 249.7,137.9 248.2,136.4 245.9,134.9 241.9,134.6 238.8,134.6 238.1,136.9ZM226.2,138.4 231.0,139.1 229.3,139.9 226.5,139.4ZM252.5,138.1 256.1,138.4 255.8,139.4 252.5,139.4ZM293.2,-5.6 297.9,-0.6 303.8,4.2 309.1,4.2 310.9,-3.1 314.5,-13.3 314.5,-67.1 288.5,-67.1ZM42.4,133.9 44.8,134.9 43.4,136.9 42.2,135.4ZM228.1,162.5 229.8,161.8 232.9,157.7 234.5,156.5 238.8,155.5 241.9,153.1 242.3,156.5 245.4,155.3 245.9,153.9 249.4,156.5 255.3,157.5 260.1,157.7 264.8,157.2 267.2,159.4 268.4,162.5 271.9,163.7 275.5,168.5 281.4,168.7 287.3,170.9 289.7,172.5 292.0,178.0 293.2,181.5 295.6,183.2 297.9,184.4 302.7,185.1 306.2,188.6 312.1,189.3 316.9,189.3 320.4,191.5 324.0,193.8 328.0,195.3 329.2,199.8 328.7,204.1 325.1,207.7 322.8,211.3 320.4,213.7 319.2,218.6 319.2,224.8 317.6,229.8 315.0,234.8 312.6,238.1 308.6,238.6 305.0,240.7 301.5,241.7 297.9,245.1 296.5,249.1 296.3,253.1 293.2,257.2 289.7,262.1 287.3,265.5 284.9,268.9 281.4,270.9 277.8,270.6 273.6,268.9 276.2,274.7 275.2,280.0 271.9,282.1 264.8,283.1 264.1,288.6 257.7,289.2 260.1,294.0 257.0,300.5 251.8,305.6 255.3,310.7 249.4,319.7 248.2,327.2 249.4,331.1 243.5,335.1 236.4,329.2 232.9,319.7 232.9,309.0 236.4,302.2 237.6,292.4 236.9,286.1 237.6,278.5 240.0,272.6 242.1,265.5 242.3,257.2 243.5,250.4 244.7,243.8 245.4,236.1 245.2,228.5 242.3,224.8 237.6,221.8 232.9,218.6 230.5,214.9 228.6,211.3 225.8,205.3 223.4,200.5 220.3,196.9 219.1,193.4 221.5,190.7 222.2,188.6 220.1,187.9 220.6,185.1 222.2,182.7 222.2,180.8 224.6,179.2 225.8,176.8 228.1,174.4 228.6,170.9 228.1,167.3 227.2,165.6ZM398.7,91.0 396.6,89.5 394.0,87.8 390.4,88.4 390.7,83.9 389.0,83.0 390.4,79.3 390.9,74.6 389.7,69.8 392.6,67.5 398.5,67.8 403.2,68.2 407.2,68.5 408.4,64.9 408.9,61.2 408.7,59.2 406.3,56.1 404.9,54.7 400.9,53.3 400.4,51.5 403.2,50.1 407.7,50.4 407.2,46.8 408.7,47.9 412.0,47.5 415.0,45.3 415.3,42.3 417.4,41.6 419.8,40.5 421.4,38.2 422.6,34.3 424.5,32.7 428.1,31.9 430.9,31.5 431.8,30.3 431.8,24.2 430.7,19.9 430.9,17.8 434.0,16.9 436.6,14.7 435.9,19.9 437.1,22.1 434.7,25.4 435.2,28.3 437.5,30.3 441.1,28.7 444.6,30.3 449.4,29.1 454.8,27.1 457.6,28.7 458.8,27.1 461.2,24.2 461.2,17.8 464.7,15.1 468.3,17.8 469.0,12.0 467.1,7.9 470.6,6.5 477.7,6.1 482.5,4.6 478.9,1.8 473.0,2.3 465.9,4.6 464.7,1.8 461.9,-0.6 461.9,-10.7 470.6,-27.2 470.6,-67.1 837.4,-67.1 837.4,-21.5 835.0,-8.1 825.5,-3.1 813.7,4.2 804.3,5.1 798.3,13.4 794.8,22.1 797.2,26.2 793.6,28.3 790.1,34.3 786.0,36.2 782.3,42.0 780.6,34.3 779.4,24.2 780.6,17.8 785.3,13.4 790.1,4.2 797.2,-3.1 790.1,-4.1 783.0,-3.1 778.2,7.5 771.1,8.8 764.0,6.5 754.6,7.5 747.5,8.8 742.7,15.6 738.0,19.9 735.6,28.3 739.2,30.3 742.7,33.5 745.8,36.2 743.9,42.0 743.9,51.1 740.4,54.7 733.3,63.2 728.5,68.8 723.8,69.2 720.7,71.4 718.4,75.2 717.9,77.7 713.2,80.8 715.5,83.9 717.7,88.4 717.7,92.8 715.5,94.5 710.8,95.9 710.3,92.8 711.0,88.4 708.4,85.4 707.2,83.9 707.7,80.8 705.4,79.6 700.6,77.7 699.0,82.3 697.8,83.0 699.7,76.8 694.2,79.9 690.0,82.3 691.9,85.4 693.1,87.5 697.1,86.0 701.3,87.2 697.8,89.8 694.2,93.3 696.6,98.5 699.7,103.3 700.2,106.0 699.0,109.6 699.4,112.3 696.6,115.8 694.7,119.5 691.9,122.4 688.3,125.5 683.6,127.5 681.2,128.6 676.5,129.8 672.9,131.1 672.5,133.6 671.1,130.6 667.7,130.3 664.7,131.9 662.3,134.9 661.8,137.4 664.7,141.9 667.7,144.3 669.9,149.2 670.1,154.1 667.0,156.5 664.2,158.0 663.5,160.1 659.9,162.0 659.7,158.9 656.4,157.5 654.0,154.1 650.5,152.4 649.3,150.5 648.1,152.9 647.2,156.5 646.2,160.6 648.8,162.8 649.3,165.6 652.1,166.8 655.2,169.7 656.1,173.2 656.4,176.8 658.0,179.4 656.1,179.2 651.6,176.1 649.3,172.0 648.8,168.5 645.7,163.7 644.1,162.5 644.6,158.9 644.8,154.1 643.4,149.2 642.4,143.6 639.8,143.1 637.5,144.8 634.6,144.3 634.9,139.9 632.7,135.6 629.6,131.9 628.7,128.3 625.6,128.8 622.1,129.8 617.3,130.6 616.9,133.4 613.8,135.1 610.2,138.6 606.2,142.9 602.4,144.8 601.0,146.8 601.3,151.2 600.3,155.3 600.3,158.2 598.4,160.6 596.5,161.6 594.9,163.5 592.5,161.3 591.3,157.7 589.7,154.1 587.8,149.2 585.4,144.3 584.2,139.4 583.7,136.9 583.5,131.9 582.3,131.9 583.0,128.8 578.3,132.4 574.8,128.6 577.1,127.3 573.6,125.5 570.5,122.1 568.8,120.5 562.9,120.8 557.0,121.1 551.1,120.5 547.1,119.7 545.9,116.3 544.0,116.3 540.4,117.4 535.7,115.0 532.2,112.3 530.3,108.2 527.4,107.1 526.3,108.2 525.1,109.6 526.3,112.8 528.6,115.8 530.3,118.2 531.7,121.6 533.3,119.0 533.6,122.9 536.9,123.9 540.4,123.4 542.8,120.3 544.7,118.2 545.2,121.6 546.4,124.2 550.4,125.2 553.0,128.0 549.9,133.1 548.0,136.9 544.7,139.6 541.6,141.9 535.0,144.3 527.4,148.5 518.0,152.2 514.4,152.4 513.2,149.2 512.5,144.3 509.7,139.4 506.1,134.4 503.8,130.3 501.4,124.2 498.6,119.0 495.5,114.2 494.3,112.3 494.1,109.6 492.9,113.6 492.4,114.4 490.8,112.3 488.6,108.5 487.9,104.9 492.7,104.7 494.1,101.3 495.7,97.1 496.7,91.9 497.1,89.5 493.1,89.5 489.6,91.0 484.8,88.9 483.7,90.4 480.1,89.8 477.7,89.2 476.1,87.5 473.7,83.9 474.9,80.8 473.5,79.3 473.0,77.1 468.3,76.8 467.1,78.7 468.8,79.3 465.4,78.0 465.4,81.4 467.1,85.4 468.3,86.3 465.9,87.2 466.4,89.8 464.3,89.8 462.8,88.9 461.7,85.4 460.0,81.4 457.6,77.7 457.4,73.6 455.3,71.4 450.5,68.2 447.0,64.2 445.8,62.6 443.9,61.2 440.6,62.2 440.8,65.5 443.7,68.2 445.3,72.1 449.4,73.3 451.7,76.2 455.3,78.7 454.8,79.9 451.7,78.0 450.8,80.2 452.0,82.3 450.1,84.8 448.6,85.4 449.4,83.0 448.9,79.3 445.8,77.1 442.3,75.2 440.4,73.6 437.5,71.4 436.1,69.2 435.2,66.5 432.3,65.2 429.2,67.2 425.7,69.5 422.9,68.5 420.5,68.5 418.6,71.4 419.1,73.3 416.7,75.2 413.4,77.1 410.8,80.8 411.7,83.3 409.8,86.3 406.8,88.9 401.1,89.2ZM437.5,8.8 436.3,6.5 434.0,9.8 430.4,12.9 426.9,12.9 424.5,9.8 423.3,6.5 423.3,-3.1 430.4,-16.0 437.5,-27.2 458.8,-27.2 452.9,-5.6 451.7,0.8 456.0,5.1 454.1,8.8 450.5,11.1 450.5,19.9 445.8,22.1 442.3,24.6 441.8,20.8 439.4,14.3 438.0,9.8ZM488.4,108.2 490.8,113.6 491.9,117.6 494.3,122.9 496.0,126.8 499.0,130.6 499.8,135.6 502.6,139.4 505.0,144.3 508.5,148.0 513.2,152.9 513.9,155.3 518.0,157.7 522.7,156.0 527.4,155.8 532.6,154.3 532.2,157.7 529.8,163.7 527.4,168.5 525.1,172.0 520.3,176.8 515.6,180.3 510.9,185.1 508.5,188.1 506.1,191.0 505.0,194.1 503.8,198.1 505.0,202.9 507.3,207.7 507.6,216.2 506.1,221.1 500.2,225.5 495.5,230.5 493.8,232.3 495.5,236.1 495.5,241.2 489.6,245.1 489.1,250.4 487.2,254.4 484.8,257.2 482.5,261.3 478.9,264.9 475.4,267.5 472.3,268.3 465.9,268.9 458.8,270.6 455.3,268.9 454.1,264.1 452.2,258.5 450.5,253.4 447.5,247.8 445.8,239.9 444.6,234.8 441.1,227.3 439.4,222.3 441.1,216.2 443.4,212.5 444.2,207.7 442.7,203.6 440.6,196.9 439.9,194.1 437.5,191.5 434.0,187.4 432.8,184.4 433.5,181.5 434.5,178.0 434.5,174.4 432.3,172.0 428.1,172.3 425.7,172.5 422.1,167.8 417.4,167.8 413.9,168.7 409.1,170.4 406.8,171.3 403.2,170.6 399.7,170.6 393.8,172.3 390.2,170.9 385.9,167.3 381.9,164.9 380.0,162.5 379.1,160.1 376.0,156.5 372.0,153.1 371.8,150.5 370.1,147.5 372.5,144.3 372.9,139.4 373.2,135.6 371.3,131.9 372.5,128.0 373.6,124.7 376.5,120.3 378.8,116.8 380.7,114.2 384.3,112.3 387.8,109.6 388.3,105.5 389.5,101.3 391.4,98.8 393.8,97.9 396.1,95.6 397.5,91.9 399.0,91.6 400.9,93.6 404.4,93.3 406.8,93.9 409.1,92.2 411.5,91.6 415.0,89.8 418.6,88.9 423.3,88.9 428.1,88.4 432.8,87.8 435.2,87.5 437.5,88.4 436.3,90.4 436.8,92.8 437.5,95.6 435.6,97.1 437.5,99.3 441.1,100.2 442.7,100.2 447.5,101.6 448.2,104.1 452.9,105.8 456.5,107.4 458.8,105.5 458.8,102.7 462.4,100.2 465.9,101.0 470.6,103.8 475.4,104.7 480.1,105.5 482.5,104.7 484.8,104.1 487.9,104.9ZM528.1,211.3 530.5,219.8 528.6,224.8 526.3,232.3 523.9,239.9 522.7,243.8 518.4,245.4 515.6,243.8 514.4,238.6 513.9,234.8 516.3,231.0 515.6,224.8 516.8,221.1 520.3,220.6 523.9,218.1 525.8,214.9ZM398.0,45.3 403.2,44.6 408.0,43.1 414.6,41.2 415.5,35.8 412.0,34.3 411.5,31.5 408.4,27.1 407.7,24.2 405.6,22.1 406.8,15.6 402.0,14.7 403.9,10.7 399.7,10.7 397.8,15.6 398.5,20.8 400.1,24.2 399.7,27.1 403.9,27.1 404.4,32.3 400.9,33.5 401.6,36.2 399.2,38.9 404.4,40.5 400.9,42.0ZM387.8,39.7 392.6,39.3 396.6,37.4 397.3,32.3 398.5,28.3 396.1,25.4 392.1,25.4 391.4,28.7 387.8,29.5 389.0,33.5 387.1,37.4ZM441.1,85.4 448.2,84.8 447.5,89.2 441.1,86.6ZM431.1,76.2 434.2,76.2 434.2,81.7 431.6,82.3ZM431.8,70.1 434.0,70.1 433.5,74.6 432.1,74.0ZM467.3,92.5 473.7,93.3 473.5,94.2 467.3,93.6ZM487.9,93.9 493.1,92.5 491.9,94.5 488.6,95.4ZM718.6,99.3 719.8,104.9 722.2,104.4 723.8,99.9 728.5,98.5 730.2,97.6 732.8,98.5 735.4,95.4 738.5,95.4 739.9,94.2 742.3,94.2 744.9,92.2 745.1,88.4 746.5,84.5 747.5,80.8 746.3,74.9 743.4,75.5 742.7,79.3 742.3,83.0 739.4,86.0 736.1,86.9 734.9,88.9 733.3,92.2 730.9,92.2 726.2,92.8 722.6,95.4 721.2,97.1ZM742.7,74.6 745.1,71.4 750.3,73.0 755.8,68.8 754.6,65.9 749.8,65.5 746.8,61.9 746.5,68.2 743.4,69.8ZM747.5,59.8 751.0,57.4 749.8,49.3 753.4,49.3 750.5,38.2 749.8,29.1 747.9,32.3 747.0,42.0 747.7,52.9ZM697.8,121.1 700.2,121.6 699.0,125.5 697.3,129.3 695.7,126.8 696.6,122.9ZM668.7,136.1 672.9,134.1 674.1,135.4 672.5,138.1 670.1,138.9ZM600.3,159.6 603.6,162.5 605.0,166.1 603.1,168.0 601.3,168.5 600.3,164.9ZM696.6,138.1 700.6,138.4 700.2,143.1 699.0,145.6 701.3,149.2 704.9,150.5 704.9,152.6 701.3,150.5 697.8,150.0 696.6,148.0 695.4,144.3ZM700.2,166.1 703.7,162.3 708.4,159.4 710.8,164.9 708.4,168.5 707.2,169.0 704.9,167.3ZM702.5,155.3 708.4,153.4 708.4,158.4 703.7,160.1 700.2,157.7ZM689.0,162.8 694.2,157.0 694.9,157.7 689.7,163.2ZM637.0,169.4 642.2,170.4 648.1,175.6 651.6,178.0 656.4,182.7 658.7,186.2 662.3,189.8 661.8,196.4 658.7,196.4 653.5,192.2 649.3,186.2 645.7,181.5 642.2,176.8ZM660.4,198.1 663.5,196.9 668.2,198.1 673.7,197.9 677.7,199.1 682.2,201.0 682.4,203.4 676.5,202.4 669.4,201.0 663.5,200.0ZM669.4,179.2 670.8,178.0 674.8,176.8 678.9,175.1 682.4,171.6 686.0,167.3 688.3,166.1 690.0,167.8 693.5,170.1 690.7,172.5 690.2,176.8 693.1,180.3 689.5,182.7 687.1,186.2 687.1,191.0 682.9,192.2 678.9,190.5 675.3,189.8 672.2,186.7 669.4,182.7ZM694.9,180.8 697.8,179.6 702.5,180.6 707.2,179.2 704.9,181.8 699.0,181.5 696.1,184.8 699.0,185.1 703.2,184.6 700.2,187.4 701.3,191.0 702.5,195.3 699.4,193.6 697.8,189.3 696.1,189.8 696.4,195.7 694.2,195.7 693.8,191.0 692.6,189.1ZM721.4,184.6 725.0,183.6 728.5,184.6 730.9,190.5 736.8,186.5 744.4,188.9 753.4,191.7 756.5,195.3 760.5,196.9 759.3,198.8 762.9,202.9 767.6,207.2 761.7,207.0 758.1,204.1 753.4,201.0 749.8,204.6 745.1,204.3 740.4,201.7 738.0,202.6 739.2,199.3 738.0,195.7 732.1,193.1 726.2,192.2 725.7,189.3ZM686.0,202.6 693.1,202.4 702.5,202.2 707.2,202.2 712.0,202.6 704.9,207.0 695.4,205.5 686.0,203.8ZM762.9,196.0 767.6,195.0 771.6,192.6 771.1,195.0 766.4,197.4ZM680.0,236.1 681.7,235.6 687.8,232.3 693.1,231.0 699.0,228.5 700.9,224.0 703.7,224.3 704.9,221.5 708.4,217.4 712.0,216.2 715.5,218.4 718.4,218.4 717.9,214.9 721.0,212.3 725.0,210.1 730.9,211.5 735.2,211.8 733.3,214.9 732.1,218.1 735.6,220.6 740.8,224.3 744.6,224.8 746.3,218.6 746.8,213.2 748.7,208.4 751.0,213.2 751.7,217.1 755.3,218.6 756.5,223.5 757.6,228.3 761.7,231.0 764.7,234.8 768.3,239.9 772.3,243.8 774.0,247.8 774.9,253.4 773.5,259.9 771.1,264.9 769.2,268.0 767.6,272.6 766.4,277.6 761.7,279.7 757.6,283.1 753.9,280.6 751.0,282.4 745.1,280.3 742.3,276.8 740.4,273.2 738.5,272.6 739.2,270.6 737.5,265.5 735.2,268.9 733.3,270.6 731.4,269.8 729.0,264.9 723.8,262.7 716.7,261.6 709.6,263.5 704.9,265.5 703.7,268.0 697.8,267.8 694.2,269.5 690.7,271.2 686.0,270.9 683.6,269.2 685.0,264.1 685.2,261.3 683.6,257.2 681.7,251.8 681.2,247.8 679.6,243.8 680.5,239.9ZM753.9,288.3 758.1,289.5 762.1,288.6 762.4,292.4 761.2,296.2 758.1,297.6 755.8,295.3 754.6,291.8ZM820.1,269.5 823.9,271.8 826.7,275.6 827.9,278.8 832.6,278.8 833.4,281.5 830.3,284.6 830.0,287.7 826.3,291.1 825.1,290.2 825.5,286.1 822.7,284.0 824.6,281.5 824.8,277.0 820.8,271.2ZM820.1,287.7 823.9,289.9 823.2,292.4 820.3,297.2 816.1,300.5 809.0,307.3 805.4,304.9 810.2,298.9 816.1,294.0 818.5,289.2ZM865.8,-27.2 872.9,-8.1 873.3,1.3 879.3,4.2 880.0,9.8 887.1,10.7 890.6,10.2 891.1,15.1 884.7,22.1 878.8,25.4 873.3,28.3 877.6,27.5 882.3,25.4 888.2,22.1 894.2,16.5 898.9,12.0 900.6,6.5 903.6,-0.1 906.0,-1.6 907.2,4.2 904.3,7.9 909.5,5.1 913.1,2.7 917.8,0.3 922.6,4.2 928.5,4.6 933.2,6.1 937.9,10.7 941.5,15.1 943.9,20.4 947.4,25.0 952.1,27.9 955.2,30.3 958.0,35.1 960.9,40.1 962.8,43.5 967.5,46.4 971.8,48.6 973.4,52.2 968.2,51.5 969.6,58.1 969.9,63.9 968.7,70.4 969.2,78.0 970.3,82.3 973.4,86.0 974.8,89.5 977.9,95.4 982.7,97.1 986.0,100.8 988.1,106.0 991.2,111.0 993.1,114.2 997.1,119.5 999.5,123.4 1003.0,127.0 1004.4,126.0 1002.3,123.1 999.9,118.4 997.1,114.2 995.4,110.4 991.9,105.5 991.9,103.6 995.4,104.7 997.6,109.3 1001.6,114.7 1004.7,119.0 1008.2,123.1 1012.0,126.8 1013.6,130.8 1013.4,133.9 1016.5,136.9 1021.5,139.4 1026.7,142.1 1031.4,144.1 1036.1,145.1 1039.4,143.9 1043.2,146.1 1045.6,148.0 1050.3,149.7 1055.1,151.2 1056.5,151.9 1059.8,155.3 1060.5,158.2 1062.2,159.4 1065.2,162.0 1067.4,163.5 1071.6,165.1 1073.3,165.4 1074.0,163.0 1075.2,161.6 1077.5,162.8 1079.4,164.9 1080.4,162.3 1077.3,160.1 1074.0,160.8 1070.4,161.6 1068.1,160.1 1065.7,157.5 1065.2,154.1 1066.2,148.0 1066.4,146.8 1063.3,144.8 1059.8,144.6 1055.1,144.8 1053.2,144.3 1054.3,140.6 1055.5,138.6 1056.2,135.6 1057.9,131.4 1056.2,130.6 1052.7,130.8 1049.4,131.9 1048.7,135.6 1046.8,137.9 1043.2,138.4 1039.7,138.9 1036.6,137.4 1034.9,135.4 1033.0,131.9 1031.9,128.0 1032.1,124.2 1033.3,119.0 1032.8,115.0 1036.1,111.8 1039.2,109.6 1043.2,108.8 1046.8,109.6 1049.1,110.4 1052.0,110.7 1051.5,107.7 1055.1,107.1 1058.6,107.1 1061.4,109.1 1064.5,108.2 1066.9,111.0 1067.6,114.2 1069.2,117.6 1070.9,120.0 1072.1,121.1 1073.3,120.3 1074.0,116.8 1072.8,112.3 1070.9,108.2 1071.1,104.1 1074.0,101.0 1076.8,97.6 1079.9,95.6 1082.7,94.2 1084.6,93.3 1083.4,88.9 1083.9,86.9 1085.3,83.9 1087.0,81.4 1088.2,77.7 1092.9,76.2 1095.3,74.6 1097.6,74.0 1097.6,73.0 1095.7,71.4 1096.5,68.2 1100.0,66.5 1104.7,64.2 1107.1,62.6 1109.9,61.2 1107.1,67.5 1109.5,68.2 1113.0,64.9 1118.9,62.2 1121.3,59.8 1120.1,56.4 1117.8,60.2 1114.2,60.5 1110.7,58.8 1109.5,54.7 1110.7,50.1 1107.1,48.6 1101.2,51.1 1096.5,55.7 1098.8,52.2 1103.6,47.9 1107.1,45.0 1114.2,44.6 1121.3,44.6 1124.8,40.8 1129.6,38.9 1131.5,36.2 1130.8,32.3 1126.0,27.1 1121.3,24.2 1117.8,17.8 1116.6,11.1 1111.8,3.2 1110.7,2.3 1107.1,8.8 1102.4,11.1 1098.8,8.8 1097.6,-0.6 1092.9,-4.6 1085.8,-7.1 1078.7,-7.6 1079.2,1.8 1079.9,8.8 1077.5,10.2 1081.1,17.8 1082.3,22.1 1078.7,27.1 1075.2,30.3 1076.3,36.2 1076.3,40.1 1072.8,40.8 1069.2,35.1 1068.5,28.3 1068.1,25.4 1062.2,24.2 1055.1,19.9 1050.3,16.9 1044.4,16.9 1043.7,11.1 1039.7,8.8 1039.2,1.8 1043.2,-5.6 1050.3,-16.0 1050.3,-67.1 865.8,-67.1ZM959.5,42.7 965.1,44.2 971.1,51.1 968.7,51.1 965.1,48.2 960.4,45.7ZM894.2,133.9 896.5,134.9 895.1,136.9 893.9,135.4Z"/></clipPath>
</defs>
<rect width="945" height="294" fill="url(#oc)"/>
<g filter="url(#b14)" opacity=".45"><ellipse cx="794.8" cy="226.0" rx="50" ry="30" fill="#1c4f98" opacity="0.8"/><ellipse cx="695.4" cy="187.4" rx="40" ry="16" fill="#1c4f98" opacity="0.8"/><ellipse cx="316.9" cy="94.2" rx="40" ry="16" fill="#1c4f98" opacity="0.8"/><ellipse cx="577.1" cy="231.0" rx="40" ry="18" fill="#1c4f98" opacity="0.8"/><ellipse cx="127.6" cy="158.9" rx="50" ry="16" fill="#1c4f98" opacity="0.8"/><ellipse cx="368.9" cy="226.0" rx="38" ry="30" fill="#1c4f98" opacity="0.8"/><ellipse cx="56.6" cy="79.3" rx="40" ry="14" fill="#1c4f98" opacity="0.8"/></g>
<g filter="url(#b6)" opacity=".5"><ellipse cx="262.4" cy="45.7" rx="30" ry="10" fill="#1f56a0" opacity="0.8"/><ellipse cx="288.5" cy="56.4" rx="16" ry="8" fill="#1f56a0" opacity="0.8"/><ellipse cx="227.0" cy="121.6" rx="14" ry="8" fill="#1f56a0" opacity="0.8"/><ellipse cx="198.6" cy="121.6" rx="18" ry="8" fill="#1f56a0" opacity="0.8"/><ellipse cx="215.1" cy="139.4" rx="16" ry="7" fill="#1f56a0" opacity="0.8"/><ellipse cx="274.3" cy="292.4" rx="16" ry="10" fill="#1f56a0" opacity="0.8"/><ellipse cx="293.2" cy="180.3" rx="12" ry="5" fill="#1f56a0" opacity="0.8"/><ellipse cx="421.0" cy="26.2" rx="18" ry="10" fill="#1f56a0" opacity="0.8"/><ellipse cx="397.3" cy="45.7" rx="14" ry="9" fill="#1f56a0" opacity="0.8"/><ellipse cx="458.8" cy="13.4" rx="10" ry="8" fill="#1f56a0" opacity="0.8"/><ellipse cx="700.2" cy="102.7" rx="12" ry="14" fill="#1f56a0" opacity="0.8"/><ellipse cx="667.0" cy="168.5" rx="22" ry="12" fill="#1f56a0" opacity="0.8"/><ellipse cx="676.5" cy="194.5" rx="24" ry="7" fill="#1f56a0" opacity="0.8"/><ellipse cx="728.5" cy="206.5" rx="24" ry="7" fill="#1f56a0" opacity="0.8"/><ellipse cx="766.4" cy="226.0" rx="6" ry="14" fill="#1f56a0" opacity="0.8"/><ellipse cx="754.6" cy="34.3" rx="16" ry="10" fill="#1f56a0" opacity="0.8"/><ellipse cx="534.5" cy="116.3" rx="8" ry="4" fill="#1f56a0" opacity="0.8"/><ellipse cx="21.1" cy="13.4" rx="16" ry="7" fill="#1f56a0" opacity="0.8"/><ellipse cx="813.7" cy="13.4" rx="12" ry="5" fill="#1f56a0" opacity="0.8"/><ellipse cx="719.1" cy="213.7" rx="12" ry="5" fill="#1f56a0" opacity="0.8"/><ellipse cx="683.6" cy="139.4" rx="8" ry="6" fill="#1f56a0" opacity="0.8"/><ellipse cx="756.9" cy="284.6" rx="6" ry="3" fill="#1f56a0" opacity="0.8"/><ellipse cx="210.4" cy="13.4" rx="14" ry="8" fill="#1f56a0" opacity="0.8"/><ellipse cx="269.5" cy="158.9" rx="8" ry="3" fill="#1f56a0" opacity="0.8"/><ellipse cx="435.2" cy="91.3" rx="14" ry="3" fill="#1f56a0" opacity="0.8"/><ellipse cx="470.6" cy="91.3" rx="8" ry="4" fill="#1f56a0" opacity="0.8"/><ellipse cx="742.7" cy="79.3" rx="10" ry="10" fill="#1f56a0" opacity="0.8"/><ellipse cx="316.9" cy="231.0" rx="5" ry="10" fill="#1f56a0" opacity="0.8"/><ellipse cx="494.3" cy="231.0" rx="4" ry="10" fill="#1f56a0" opacity="0.8"/><ellipse cx="236.4" cy="91.3" rx="5" ry="8" fill="#1f56a0" opacity="0.8"/><ellipse cx="250.6" cy="73.0" rx="7" ry="4" fill="#1f56a0" opacity="0.8"/><ellipse cx="872.9" cy="13.4" rx="16" ry="7" fill="#1f56a0" opacity="0.8"/></g>
<path d="M14.0,-27.2 21.1,-8.1 21.6,1.3 27.5,4.2 28.2,9.8 35.3,10.7 38.9,10.2 39.3,15.1 32.9,22.1 27.0,25.4 21.6,28.3 25.8,27.5 30.6,25.4 36.5,22.1 42.4,16.5 47.1,12.0 48.8,6.5 51.9,-0.1 54.2,-1.6 55.4,4.2 52.6,7.9 57.8,5.1 61.3,2.7 66.1,0.3 70.8,4.2 76.7,4.6 81.4,6.1 86.2,10.7 89.7,15.1 92.1,20.4 95.6,25.0 100.4,27.9 103.4,30.3 106.3,35.1 109.1,40.1 111.0,43.5 115.8,46.4 120.0,48.6 121.7,52.2 116.5,51.5 117.9,58.1 118.1,63.9 116.9,70.4 117.4,78.0 118.6,82.3 121.7,86.0 123.1,89.5 126.2,95.4 130.9,97.1 134.2,100.8 136.3,106.0 139.4,111.0 141.3,114.2 145.3,119.5 147.7,123.4 151.2,127.0 152.7,126.0 150.5,123.1 148.2,118.4 145.3,114.2 143.7,110.4 140.1,105.5 140.1,103.6 143.7,104.7 145.8,109.3 149.8,114.7 152.9,119.0 156.4,123.1 160.2,126.8 161.9,130.8 161.7,133.9 164.7,136.9 169.7,139.4 174.9,142.1 179.6,144.1 184.4,145.1 187.7,143.9 191.5,146.1 193.8,148.0 198.6,149.7 203.3,151.2 204.7,151.9 208.0,155.3 208.7,158.2 210.4,159.4 213.5,162.0 215.6,163.5 219.9,165.1 221.5,165.4 222.2,163.0 223.4,161.6 225.8,162.8 227.7,164.9 228.6,162.3 225.5,160.1 222.2,160.8 218.7,161.6 216.3,160.1 213.9,157.5 213.5,154.1 214.4,148.0 214.6,146.8 211.6,144.8 208.0,144.6 203.3,144.8 201.4,144.3 202.6,140.6 203.8,138.6 204.5,135.6 206.1,131.4 204.5,130.6 200.9,130.8 197.6,131.9 196.9,135.6 195.0,137.9 191.5,138.4 187.9,138.9 184.8,137.4 183.2,135.4 181.3,131.9 180.1,128.0 180.3,124.2 181.5,119.0 181.1,115.0 184.4,111.8 187.4,109.6 191.5,108.8 195.0,109.6 197.4,110.4 200.2,110.7 199.7,107.7 203.3,107.1 206.8,107.1 209.7,109.1 212.8,108.2 215.1,111.0 215.8,114.2 217.5,117.6 219.1,120.0 220.3,121.1 221.5,120.3 222.2,116.8 221.0,112.3 219.1,108.2 219.4,104.1 222.2,101.0 225.1,97.6 228.1,95.6 231.0,94.2 232.9,93.3 231.7,88.9 232.2,86.9 233.6,83.9 235.2,81.4 236.4,77.7 241.1,76.2 243.5,74.6 245.9,74.0 245.9,73.0 244.0,71.4 244.7,68.2 248.2,66.5 253.0,64.2 255.3,62.6 258.2,61.2 255.3,67.5 257.7,68.2 261.3,64.9 267.2,62.2 269.5,59.8 268.4,56.4 266.0,60.2 262.4,60.5 258.9,58.8 257.7,54.7 258.9,50.1 255.3,48.6 249.4,51.1 244.7,55.7 247.1,52.2 251.8,47.9 255.3,45.0 262.4,44.6 269.5,44.6 273.1,40.8 277.8,38.9 279.7,36.2 279.0,32.3 274.3,27.1 269.5,24.2 266.0,17.8 264.8,11.1 260.1,3.2 258.9,2.3 255.3,8.8 250.6,11.1 247.1,8.8 245.9,-0.6 241.1,-4.6 234.0,-7.1 227.0,-7.6 227.4,1.8 228.1,8.8 225.8,10.2 229.3,17.8 230.5,22.1 227.0,27.1 223.4,30.3 224.6,36.2 224.6,40.1 221.0,40.8 217.5,35.1 216.8,28.3 216.3,25.4 210.4,24.2 203.3,19.9 198.6,16.9 192.6,16.9 191.9,11.1 187.9,8.8 187.4,1.8 191.5,-5.6 198.6,-16.0 198.6,-67.1 14.0,-67.1ZM271.2,54.3 279.0,54.3 280.2,56.8 284.9,57.8 286.8,54.7 284.9,51.1 284.2,48.2 280.2,45.7 279.0,40.1 277.1,42.0 275.5,45.7 273.1,50.1ZM107.7,42.7 113.4,44.2 119.3,51.1 116.9,51.1 113.4,48.2 108.7,45.7ZM210.4,129.6 215.1,127.0 219.9,126.5 224.6,128.0 229.3,130.6 234.0,132.6 235.9,133.9 234.0,134.6 228.1,134.6 227.0,132.6 223.4,130.6 218.7,129.1 213.9,129.1ZM235.5,138.4 240.0,138.9 242.3,140.1 245.9,138.6 249.7,137.9 248.2,136.4 245.9,134.9 241.9,134.6 238.8,134.6 238.1,136.9ZM226.2,138.4 231.0,139.1 229.3,139.9 226.5,139.4ZM252.5,138.1 256.1,138.4 255.8,139.4 252.5,139.4ZM293.2,-5.6 297.9,-0.6 303.8,4.2 309.1,4.2 310.9,-3.1 314.5,-13.3 314.5,-67.1 288.5,-67.1ZM42.4,133.9 44.8,134.9 43.4,136.9 42.2,135.4ZM228.1,162.5 229.8,161.8 232.9,157.7 234.5,156.5 238.8,155.5 241.9,153.1 242.3,156.5 245.4,155.3 245.9,153.9 249.4,156.5 255.3,157.5 260.1,157.7 264.8,157.2 267.2,159.4 268.4,162.5 271.9,163.7 275.5,168.5 281.4,168.7 287.3,170.9 289.7,172.5 292.0,178.0 293.2,181.5 295.6,183.2 297.9,184.4 302.7,185.1 306.2,188.6 312.1,189.3 316.9,189.3 320.4,191.5 324.0,193.8 328.0,195.3 329.2,199.8 328.7,204.1 325.1,207.7 322.8,211.3 320.4,213.7 319.2,218.6 319.2,224.8 317.6,229.8 315.0,234.8 312.6,238.1 308.6,238.6 305.0,240.7 301.5,241.7 297.9,245.1 296.5,249.1 296.3,253.1 293.2,257.2 289.7,262.1 287.3,265.5 284.9,268.9 281.4,270.9 277.8,270.6 273.6,268.9 276.2,274.7 275.2,280.0 271.9,282.1 264.8,283.1 264.1,288.6 257.7,289.2 260.1,294.0 257.0,300.5 251.8,305.6 255.3,310.7 249.4,319.7 248.2,327.2 249.4,331.1 243.5,335.1 236.4,329.2 232.9,319.7 232.9,309.0 236.4,302.2 237.6,292.4 236.9,286.1 237.6,278.5 240.0,272.6 242.1,265.5 242.3,257.2 243.5,250.4 244.7,243.8 245.4,236.1 245.2,228.5 242.3,224.8 237.6,221.8 232.9,218.6 230.5,214.9 228.6,211.3 225.8,205.3 223.4,200.5 220.3,196.9 219.1,193.4 221.5,190.7 222.2,188.6 220.1,187.9 220.6,185.1 222.2,182.7 222.2,180.8 224.6,179.2 225.8,176.8 228.1,174.4 228.6,170.9 228.1,167.3 227.2,165.6ZM398.7,91.0 396.6,89.5 394.0,87.8 390.4,88.4 390.7,83.9 389.0,83.0 390.4,79.3 390.9,74.6 389.7,69.8 392.6,67.5 398.5,67.8 403.2,68.2 407.2,68.5 408.4,64.9 408.9,61.2 408.7,59.2 406.3,56.1 404.9,54.7 400.9,53.3 400.4,51.5 403.2,50.1 407.7,50.4 407.2,46.8 408.7,47.9 412.0,47.5 415.0,45.3 415.3,42.3 417.4,41.6 419.8,40.5 421.4,38.2 422.6,34.3 424.5,32.7 428.1,31.9 430.9,31.5 431.8,30.3 431.8,24.2 430.7,19.9 430.9,17.8 434.0,16.9 436.6,14.7 435.9,19.9 437.1,22.1 434.7,25.4 435.2,28.3 437.5,30.3 441.1,28.7 444.6,30.3 449.4,29.1 454.8,27.1 457.6,28.7 458.8,27.1 461.2,24.2 461.2,17.8 464.7,15.1 468.3,17.8 469.0,12.0 467.1,7.9 470.6,6.5 477.7,6.1 482.5,4.6 478.9,1.8 473.0,2.3 465.9,4.6 464.7,1.8 461.9,-0.6 461.9,-10.7 470.6,-27.2 470.6,-67.1 837.4,-67.1 837.4,-21.5 835.0,-8.1 825.5,-3.1 813.7,4.2 804.3,5.1 798.3,13.4 794.8,22.1 797.2,26.2 793.6,28.3 790.1,34.3 786.0,36.2 782.3,42.0 780.6,34.3 779.4,24.2 780.6,17.8 785.3,13.4 790.1,4.2 797.2,-3.1 790.1,-4.1 783.0,-3.1 778.2,7.5 771.1,8.8 764.0,6.5 754.6,7.5 747.5,8.8 742.7,15.6 738.0,19.9 735.6,28.3 739.2,30.3 742.7,33.5 745.8,36.2 743.9,42.0 743.9,51.1 740.4,54.7 733.3,63.2 728.5,68.8 723.8,69.2 720.7,71.4 718.4,75.2 717.9,77.7 713.2,80.8 715.5,83.9 717.7,88.4 717.7,92.8 715.5,94.5 710.8,95.9 710.3,92.8 711.0,88.4 708.4,85.4 707.2,83.9 707.7,80.8 705.4,79.6 700.6,77.7 699.0,82.3 697.8,83.0 699.7,76.8 694.2,79.9 690.0,82.3 691.9,85.4 693.1,87.5 697.1,86.0 701.3,87.2 697.8,89.8 694.2,93.3 696.6,98.5 699.7,103.3 700.2,106.0 699.0,109.6 699.4,112.3 696.6,115.8 694.7,119.5 691.9,122.4 688.3,125.5 683.6,127.5 681.2,128.6 676.5,129.8 672.9,131.1 672.5,133.6 671.1,130.6 667.7,130.3 664.7,131.9 662.3,134.9 661.8,137.4 664.7,141.9 667.7,144.3 669.9,149.2 670.1,154.1 667.0,156.5 664.2,158.0 663.5,160.1 659.9,162.0 659.7,158.9 656.4,157.5 654.0,154.1 650.5,152.4 649.3,150.5 648.1,152.9 647.2,156.5 646.2,160.6 648.8,162.8 649.3,165.6 652.1,166.8 655.2,169.7 656.1,173.2 656.4,176.8 658.0,179.4 656.1,179.2 651.6,176.1 649.3,172.0 648.8,168.5 645.7,163.7 644.1,162.5 644.6,158.9 644.8,154.1 643.4,149.2 642.4,143.6 639.8,143.1 637.5,144.8 634.6,144.3 634.9,139.9 632.7,135.6 629.6,131.9 628.7,128.3 625.6,128.8 622.1,129.8 617.3,130.6 616.9,133.4 613.8,135.1 610.2,138.6 606.2,142.9 602.4,144.8 601.0,146.8 601.3,151.2 600.3,155.3 600.3,158.2 598.4,160.6 596.5,161.6 594.9,163.5 592.5,161.3 591.3,157.7 589.7,154.1 587.8,149.2 585.4,144.3 584.2,139.4 583.7,136.9 583.5,131.9 582.3,131.9 583.0,128.8 578.3,132.4 574.8,128.6 577.1,127.3 573.6,125.5 570.5,122.1 568.8,120.5 562.9,120.8 557.0,121.1 551.1,120.5 547.1,119.7 545.9,116.3 544.0,116.3 540.4,117.4 535.7,115.0 532.2,112.3 530.3,108.2 527.4,107.1 526.3,108.2 525.1,109.6 526.3,112.8 528.6,115.8 530.3,118.2 531.7,121.6 533.3,119.0 533.6,122.9 536.9,123.9 540.4,123.4 542.8,120.3 544.7,118.2 545.2,121.6 546.4,124.2 550.4,125.2 553.0,128.0 549.9,133.1 548.0,136.9 544.7,139.6 541.6,141.9 535.0,144.3 527.4,148.5 518.0,152.2 514.4,152.4 513.2,149.2 512.5,144.3 509.7,139.4 506.1,134.4 503.8,130.3 501.4,124.2 498.6,119.0 495.5,114.2 494.3,112.3 494.1,109.6 492.9,113.6 492.4,114.4 490.8,112.3 488.6,108.5 487.9,104.9 492.7,104.7 494.1,101.3 495.7,97.1 496.7,91.9 497.1,89.5 493.1,89.5 489.6,91.0 484.8,88.9 483.7,90.4 480.1,89.8 477.7,89.2 476.1,87.5 473.7,83.9 474.9,80.8 473.5,79.3 473.0,77.1 468.3,76.8 467.1,78.7 468.8,79.3 465.4,78.0 465.4,81.4 467.1,85.4 468.3,86.3 465.9,87.2 466.4,89.8 464.3,89.8 462.8,88.9 461.7,85.4 460.0,81.4 457.6,77.7 457.4,73.6 455.3,71.4 450.5,68.2 447.0,64.2 445.8,62.6 443.9,61.2 440.6,62.2 440.8,65.5 443.7,68.2 445.3,72.1 449.4,73.3 451.7,76.2 455.3,78.7 454.8,79.9 451.7,78.0 450.8,80.2 452.0,82.3 450.1,84.8 448.6,85.4 449.4,83.0 448.9,79.3 445.8,77.1 442.3,75.2 440.4,73.6 437.5,71.4 436.1,69.2 435.2,66.5 432.3,65.2 429.2,67.2 425.7,69.5 422.9,68.5 420.5,68.5 418.6,71.4 419.1,73.3 416.7,75.2 413.4,77.1 410.8,80.8 411.7,83.3 409.8,86.3 406.8,88.9 401.1,89.2ZM437.5,8.8 436.3,6.5 434.0,9.8 430.4,12.9 426.9,12.9 424.5,9.8 423.3,6.5 423.3,-3.1 430.4,-16.0 437.5,-27.2 458.8,-27.2 452.9,-5.6 451.7,0.8 456.0,5.1 454.1,8.8 450.5,11.1 450.5,19.9 445.8,22.1 442.3,24.6 441.8,20.8 439.4,14.3 438.0,9.8ZM488.4,108.2 490.8,113.6 491.9,117.6 494.3,122.9 496.0,126.8 499.0,130.6 499.8,135.6 502.6,139.4 505.0,144.3 508.5,148.0 513.2,152.9 513.9,155.3 518.0,157.7 522.7,156.0 527.4,155.8 532.6,154.3 532.2,157.7 529.8,163.7 527.4,168.5 525.1,172.0 520.3,176.8 515.6,180.3 510.9,185.1 508.5,188.1 506.1,191.0 505.0,194.1 503.8,198.1 505.0,202.9 507.3,207.7 507.6,216.2 506.1,221.1 500.2,225.5 495.5,230.5 493.8,232.3 495.5,236.1 495.5,241.2 489.6,245.1 489.1,250.4 487.2,254.4 484.8,257.2 482.5,261.3 478.9,264.9 475.4,267.5 472.3,268.3 465.9,268.9 458.8,270.6 455.3,268.9 454.1,264.1 452.2,258.5 450.5,253.4 447.5,247.8 445.8,239.9 444.6,234.8 441.1,227.3 439.4,222.3 441.1,216.2 443.4,212.5 444.2,207.7 442.7,203.6 440.6,196.9 439.9,194.1 437.5,191.5 434.0,187.4 432.8,184.4 433.5,181.5 434.5,178.0 434.5,174.4 432.3,172.0 428.1,172.3 425.7,172.5 422.1,167.8 417.4,167.8 413.9,168.7 409.1,170.4 406.8,171.3 403.2,170.6 399.7,170.6 393.8,172.3 390.2,170.9 385.9,167.3 381.9,164.9 380.0,162.5 379.1,160.1 376.0,156.5 372.0,153.1 371.8,150.5 370.1,147.5 372.5,144.3 372.9,139.4 373.2,135.6 371.3,131.9 372.5,128.0 373.6,124.7 376.5,120.3 378.8,116.8 380.7,114.2 384.3,112.3 387.8,109.6 388.3,105.5 389.5,101.3 391.4,98.8 393.8,97.9 396.1,95.6 397.5,91.9 399.0,91.6 400.9,93.6 404.4,93.3 406.8,93.9 409.1,92.2 411.5,91.6 415.0,89.8 418.6,88.9 423.3,88.9 428.1,88.4 432.8,87.8 435.2,87.5 437.5,88.4 436.3,90.4 436.8,92.8 437.5,95.6 435.6,97.1 437.5,99.3 441.1,100.2 442.7,100.2 447.5,101.6 448.2,104.1 452.9,105.8 456.5,107.4 458.8,105.5 458.8,102.7 462.4,100.2 465.9,101.0 470.6,103.8 475.4,104.7 480.1,105.5 482.5,104.7 484.8,104.1 487.9,104.9ZM528.1,211.3 530.5,219.8 528.6,224.8 526.3,232.3 523.9,239.9 522.7,243.8 518.4,245.4 515.6,243.8 514.4,238.6 513.9,234.8 516.3,231.0 515.6,224.8 516.8,221.1 520.3,220.6 523.9,218.1 525.8,214.9ZM398.0,45.3 403.2,44.6 408.0,43.1 414.6,41.2 415.5,35.8 412.0,34.3 411.5,31.5 408.4,27.1 407.7,24.2 405.6,22.1 406.8,15.6 402.0,14.7 403.9,10.7 399.7,10.7 397.8,15.6 398.5,20.8 400.1,24.2 399.7,27.1 403.9,27.1 404.4,32.3 400.9,33.5 401.6,36.2 399.2,38.9 404.4,40.5 400.9,42.0ZM387.8,39.7 392.6,39.3 396.6,37.4 397.3,32.3 398.5,28.3 396.1,25.4 392.1,25.4 391.4,28.7 387.8,29.5 389.0,33.5 387.1,37.4ZM441.1,85.4 448.2,84.8 447.5,89.2 441.1,86.6ZM431.1,76.2 434.2,76.2 434.2,81.7 431.6,82.3ZM431.8,70.1 434.0,70.1 433.5,74.6 432.1,74.0ZM467.3,92.5 473.7,93.3 473.5,94.2 467.3,93.6ZM487.9,93.9 493.1,92.5 491.9,94.5 488.6,95.4ZM718.6,99.3 719.8,104.9 722.2,104.4 723.8,99.9 728.5,98.5 730.2,97.6 732.8,98.5 735.4,95.4 738.5,95.4 739.9,94.2 742.3,94.2 744.9,92.2 745.1,88.4 746.5,84.5 747.5,80.8 746.3,74.9 743.4,75.5 742.7,79.3 742.3,83.0 739.4,86.0 736.1,86.9 734.9,88.9 733.3,92.2 730.9,92.2 726.2,92.8 722.6,95.4 721.2,97.1ZM742.7,74.6 745.1,71.4 750.3,73.0 755.8,68.8 754.6,65.9 749.8,65.5 746.8,61.9 746.5,68.2 743.4,69.8ZM747.5,59.8 751.0,57.4 749.8,49.3 753.4,49.3 750.5,38.2 749.8,29.1 747.9,32.3 747.0,42.0 747.7,52.9ZM697.8,121.1 700.2,121.6 699.0,125.5 697.3,129.3 695.7,126.8 696.6,122.9ZM668.7,136.1 672.9,134.1 674.1,135.4 672.5,138.1 670.1,138.9ZM600.3,159.6 603.6,162.5 605.0,166.1 603.1,168.0 601.3,168.5 600.3,164.9ZM696.6,138.1 700.6,138.4 700.2,143.1 699.0,145.6 701.3,149.2 704.9,150.5 704.9,152.6 701.3,150.5 697.8,150.0 696.6,148.0 695.4,144.3ZM700.2,166.1 703.7,162.3 708.4,159.4 710.8,164.9 708.4,168.5 707.2,169.0 704.9,167.3ZM702.5,155.3 708.4,153.4 708.4,158.4 703.7,160.1 700.2,157.7ZM689.0,162.8 694.2,157.0 694.9,157.7 689.7,163.2ZM637.0,169.4 642.2,170.4 648.1,175.6 651.6,178.0 656.4,182.7 658.7,186.2 662.3,189.8 661.8,196.4 658.7,196.4 653.5,192.2 649.3,186.2 645.7,181.5 642.2,176.8ZM660.4,198.1 663.5,196.9 668.2,198.1 673.7,197.9 677.7,199.1 682.2,201.0 682.4,203.4 676.5,202.4 669.4,201.0 663.5,200.0ZM669.4,179.2 670.8,178.0 674.8,176.8 678.9,175.1 682.4,171.6 686.0,167.3 688.3,166.1 690.0,167.8 693.5,170.1 690.7,172.5 690.2,176.8 693.1,180.3 689.5,182.7 687.1,186.2 687.1,191.0 682.9,192.2 678.9,190.5 675.3,189.8 672.2,186.7 669.4,182.7ZM694.9,180.8 697.8,179.6 702.5,180.6 707.2,179.2 704.9,181.8 699.0,181.5 696.1,184.8 699.0,185.1 703.2,184.6 700.2,187.4 701.3,191.0 702.5,195.3 699.4,193.6 697.8,189.3 696.1,189.8 696.4,195.7 694.2,195.7 693.8,191.0 692.6,189.1ZM721.4,184.6 725.0,183.6 728.5,184.6 730.9,190.5 736.8,186.5 744.4,188.9 753.4,191.7 756.5,195.3 760.5,196.9 759.3,198.8 762.9,202.9 767.6,207.2 761.7,207.0 758.1,204.1 753.4,201.0 749.8,204.6 745.1,204.3 740.4,201.7 738.0,202.6 739.2,199.3 738.0,195.7 732.1,193.1 726.2,192.2 725.7,189.3ZM686.0,202.6 693.1,202.4 702.5,202.2 707.2,202.2 712.0,202.6 704.9,207.0 695.4,205.5 686.0,203.8ZM762.9,196.0 767.6,195.0 771.6,192.6 771.1,195.0 766.4,197.4ZM680.0,236.1 681.7,235.6 687.8,232.3 693.1,231.0 699.0,228.5 700.9,224.0 703.7,224.3 704.9,221.5 708.4,217.4 712.0,216.2 715.5,218.4 718.4,218.4 717.9,214.9 721.0,212.3 725.0,210.1 730.9,211.5 735.2,211.8 733.3,214.9 732.1,218.1 735.6,220.6 740.8,224.3 744.6,224.8 746.3,218.6 746.8,213.2 748.7,208.4 751.0,213.2 751.7,217.1 755.3,218.6 756.5,223.5 757.6,228.3 761.7,231.0 764.7,234.8 768.3,239.9 772.3,243.8 774.0,247.8 774.9,253.4 773.5,259.9 771.1,264.9 769.2,268.0 767.6,272.6 766.4,277.6 761.7,279.7 757.6,283.1 753.9,280.6 751.0,282.4 745.1,280.3 742.3,276.8 740.4,273.2 738.5,272.6 739.2,270.6 737.5,265.5 735.2,268.9 733.3,270.6 731.4,269.8 729.0,264.9 723.8,262.7 716.7,261.6 709.6,263.5 704.9,265.5 703.7,268.0 697.8,267.8 694.2,269.5 690.7,271.2 686.0,270.9 683.6,269.2 685.0,264.1 685.2,261.3 683.6,257.2 681.7,251.8 681.2,247.8 679.6,243.8 680.5,239.9ZM753.9,288.3 758.1,289.5 762.1,288.6 762.4,292.4 761.2,296.2 758.1,297.6 755.8,295.3 754.6,291.8ZM820.1,269.5 823.9,271.8 826.7,275.6 827.9,278.8 832.6,278.8 833.4,281.5 830.3,284.6 830.0,287.7 826.3,291.1 825.1,290.2 825.5,286.1 822.7,284.0 824.6,281.5 824.8,277.0 820.8,271.2ZM820.1,287.7 823.9,289.9 823.2,292.4 820.3,297.2 816.1,300.5 809.0,307.3 805.4,304.9 810.2,298.9 816.1,294.0 818.5,289.2ZM865.8,-27.2 872.9,-8.1 873.3,1.3 879.3,4.2 880.0,9.8 887.1,10.7 890.6,10.2 891.1,15.1 884.7,22.1 878.8,25.4 873.3,28.3 877.6,27.5 882.3,25.4 888.2,22.1 894.2,16.5 898.9,12.0 900.6,6.5 903.6,-0.1 906.0,-1.6 907.2,4.2 904.3,7.9 909.5,5.1 913.1,2.7 917.8,0.3 922.6,4.2 928.5,4.6 933.2,6.1 937.9,10.7 941.5,15.1 943.9,20.4 947.4,25.0 952.1,27.9 955.2,30.3 958.0,35.1 960.9,40.1 962.8,43.5 967.5,46.4 971.8,48.6 973.4,52.2 968.2,51.5 969.6,58.1 969.9,63.9 968.7,70.4 969.2,78.0 970.3,82.3 973.4,86.0 974.8,89.5 977.9,95.4 982.7,97.1 986.0,100.8 988.1,106.0 991.2,111.0 993.1,114.2 997.1,119.5 999.5,123.4 1003.0,127.0 1004.4,126.0 1002.3,123.1 999.9,118.4 997.1,114.2 995.4,110.4 991.9,105.5 991.9,103.6 995.4,104.7 997.6,109.3 1001.6,114.7 1004.7,119.0 1008.2,123.1 1012.0,126.8 1013.6,130.8 1013.4,133.9 1016.5,136.9 1021.5,139.4 1026.7,142.1 1031.4,144.1 1036.1,145.1 1039.4,143.9 1043.2,146.1 1045.6,148.0 1050.3,149.7 1055.1,151.2 1056.5,151.9 1059.8,155.3 1060.5,158.2 1062.2,159.4 1065.2,162.0 1067.4,163.5 1071.6,165.1 1073.3,165.4 1074.0,163.0 1075.2,161.6 1077.5,162.8 1079.4,164.9 1080.4,162.3 1077.3,160.1 1074.0,160.8 1070.4,161.6 1068.1,160.1 1065.7,157.5 1065.2,154.1 1066.2,148.0 1066.4,146.8 1063.3,144.8 1059.8,144.6 1055.1,144.8 1053.2,144.3 1054.3,140.6 1055.5,138.6 1056.2,135.6 1057.9,131.4 1056.2,130.6 1052.7,130.8 1049.4,131.9 1048.7,135.6 1046.8,137.9 1043.2,138.4 1039.7,138.9 1036.6,137.4 1034.9,135.4 1033.0,131.9 1031.9,128.0 1032.1,124.2 1033.3,119.0 1032.8,115.0 1036.1,111.8 1039.2,109.6 1043.2,108.8 1046.8,109.6 1049.1,110.4 1052.0,110.7 1051.5,107.7 1055.1,107.1 1058.6,107.1 1061.4,109.1 1064.5,108.2 1066.9,111.0 1067.6,114.2 1069.2,117.6 1070.9,120.0 1072.1,121.1 1073.3,120.3 1074.0,116.8 1072.8,112.3 1070.9,108.2 1071.1,104.1 1074.0,101.0 1076.8,97.6 1079.9,95.6 1082.7,94.2 1084.6,93.3 1083.4,88.9 1083.9,86.9 1085.3,83.9 1087.0,81.4 1088.2,77.7 1092.9,76.2 1095.3,74.6 1097.6,74.0 1097.6,73.0 1095.7,71.4 1096.5,68.2 1100.0,66.5 1104.7,64.2 1107.1,62.6 1109.9,61.2 1107.1,67.5 1109.5,68.2 1113.0,64.9 1118.9,62.2 1121.3,59.8 1120.1,56.4 1117.8,60.2 1114.2,60.5 1110.7,58.8 1109.5,54.7 1110.7,50.1 1107.1,48.6 1101.2,51.1 1096.5,55.7 1098.8,52.2 1103.6,47.9 1107.1,45.0 1114.2,44.6 1121.3,44.6 1124.8,40.8 1129.6,38.9 1131.5,36.2 1130.8,32.3 1126.0,27.1 1121.3,24.2 1117.8,17.8 1116.6,11.1 1111.8,3.2 1110.7,2.3 1107.1,8.8 1102.4,11.1 1098.8,8.8 1097.6,-0.6 1092.9,-4.6 1085.8,-7.1 1078.7,-7.6 1079.2,1.8 1079.9,8.8 1077.5,10.2 1081.1,17.8 1082.3,22.1 1078.7,27.1 1075.2,30.3 1076.3,36.2 1076.3,40.1 1072.8,40.8 1069.2,35.1 1068.5,28.3 1068.1,25.4 1062.2,24.2 1055.1,19.9 1050.3,16.9 1044.4,16.9 1043.7,11.1 1039.7,8.8 1039.2,1.8 1043.2,-5.6 1050.3,-16.0 1050.3,-67.1 865.8,-67.1ZM959.5,42.7 965.1,44.2 971.1,51.1 968.7,51.1 965.1,48.2 960.4,45.7ZM894.2,133.9 896.5,134.9 895.1,136.9 893.9,135.4Z" fill="none" stroke="#1c4a8e" stroke-width="4.5" stroke-linejoin="round" filter="url(#b2)" opacity=".6"/>
<path d="M14.0,-27.2 21.1,-8.1 21.6,1.3 27.5,4.2 28.2,9.8 35.3,10.7 38.9,10.2 39.3,15.1 32.9,22.1 27.0,25.4 21.6,28.3 25.8,27.5 30.6,25.4 36.5,22.1 42.4,16.5 47.1,12.0 48.8,6.5 51.9,-0.1 54.2,-1.6 55.4,4.2 52.6,7.9 57.8,5.1 61.3,2.7 66.1,0.3 70.8,4.2 76.7,4.6 81.4,6.1 86.2,10.7 89.7,15.1 92.1,20.4 95.6,25.0 100.4,27.9 103.4,30.3 106.3,35.1 109.1,40.1 111.0,43.5 115.8,46.4 120.0,48.6 121.7,52.2 116.5,51.5 117.9,58.1 118.1,63.9 116.9,70.4 117.4,78.0 118.6,82.3 121.7,86.0 123.1,89.5 126.2,95.4 130.9,97.1 134.2,100.8 136.3,106.0 139.4,111.0 141.3,114.2 145.3,119.5 147.7,123.4 151.2,127.0 152.7,126.0 150.5,123.1 148.2,118.4 145.3,114.2 143.7,110.4 140.1,105.5 140.1,103.6 143.7,104.7 145.8,109.3 149.8,114.7 152.9,119.0 156.4,123.1 160.2,126.8 161.9,130.8 161.7,133.9 164.7,136.9 169.7,139.4 174.9,142.1 179.6,144.1 184.4,145.1 187.7,143.9 191.5,146.1 193.8,148.0 198.6,149.7 203.3,151.2 204.7,151.9 208.0,155.3 208.7,158.2 210.4,159.4 213.5,162.0 215.6,163.5 219.9,165.1 221.5,165.4 222.2,163.0 223.4,161.6 225.8,162.8 227.7,164.9 228.6,162.3 225.5,160.1 222.2,160.8 218.7,161.6 216.3,160.1 213.9,157.5 213.5,154.1 214.4,148.0 214.6,146.8 211.6,144.8 208.0,144.6 203.3,144.8 201.4,144.3 202.6,140.6 203.8,138.6 204.5,135.6 206.1,131.4 204.5,130.6 200.9,130.8 197.6,131.9 196.9,135.6 195.0,137.9 191.5,138.4 187.9,138.9 184.8,137.4 183.2,135.4 181.3,131.9 180.1,128.0 180.3,124.2 181.5,119.0 181.1,115.0 184.4,111.8 187.4,109.6 191.5,108.8 195.0,109.6 197.4,110.4 200.2,110.7 199.7,107.7 203.3,107.1 206.8,107.1 209.7,109.1 212.8,108.2 215.1,111.0 215.8,114.2 217.5,117.6 219.1,120.0 220.3,121.1 221.5,120.3 222.2,116.8 221.0,112.3 219.1,108.2 219.4,104.1 222.2,101.0 225.1,97.6 228.1,95.6 231.0,94.2 232.9,93.3 231.7,88.9 232.2,86.9 233.6,83.9 235.2,81.4 236.4,77.7 241.1,76.2 243.5,74.6 245.9,74.0 245.9,73.0 244.0,71.4 244.7,68.2 248.2,66.5 253.0,64.2 255.3,62.6 258.2,61.2 255.3,67.5 257.7,68.2 261.3,64.9 267.2,62.2 269.5,59.8 268.4,56.4 266.0,60.2 262.4,60.5 258.9,58.8 257.7,54.7 258.9,50.1 255.3,48.6 249.4,51.1 244.7,55.7 247.1,52.2 251.8,47.9 255.3,45.0 262.4,44.6 269.5,44.6 273.1,40.8 277.8,38.9 279.7,36.2 279.0,32.3 274.3,27.1 269.5,24.2 266.0,17.8 264.8,11.1 260.1,3.2 258.9,2.3 255.3,8.8 250.6,11.1 247.1,8.8 245.9,-0.6 241.1,-4.6 234.0,-7.1 227.0,-7.6 227.4,1.8 228.1,8.8 225.8,10.2 229.3,17.8 230.5,22.1 227.0,27.1 223.4,30.3 224.6,36.2 224.6,40.1 221.0,40.8 217.5,35.1 216.8,28.3 216.3,25.4 210.4,24.2 203.3,19.9 198.6,16.9 192.6,16.9 191.9,11.1 187.9,8.8 187.4,1.8 191.5,-5.6 198.6,-16.0 198.6,-67.1 14.0,-67.1ZM271.2,54.3 279.0,54.3 280.2,56.8 284.9,57.8 286.8,54.7 284.9,51.1 284.2,48.2 280.2,45.7 279.0,40.1 277.1,42.0 275.5,45.7 273.1,50.1ZM107.7,42.7 113.4,44.2 119.3,51.1 116.9,51.1 113.4,48.2 108.7,45.7ZM210.4,129.6 215.1,127.0 219.9,126.5 224.6,128.0 229.3,130.6 234.0,132.6 235.9,133.9 234.0,134.6 228.1,134.6 227.0,132.6 223.4,130.6 218.7,129.1 213.9,129.1ZM235.5,138.4 240.0,138.9 242.3,140.1 245.9,138.6 249.7,137.9 248.2,136.4 245.9,134.9 241.9,134.6 238.8,134.6 238.1,136.9ZM226.2,138.4 231.0,139.1 229.3,139.9 226.5,139.4ZM252.5,138.1 256.1,138.4 255.8,139.4 252.5,139.4ZM293.2,-5.6 297.9,-0.6 303.8,4.2 309.1,4.2 310.9,-3.1 314.5,-13.3 314.5,-67.1 288.5,-67.1ZM42.4,133.9 44.8,134.9 43.4,136.9 42.2,135.4ZM228.1,162.5 229.8,161.8 232.9,157.7 234.5,156.5 238.8,155.5 241.9,153.1 242.3,156.5 245.4,155.3 245.9,153.9 249.4,156.5 255.3,157.5 260.1,157.7 264.8,157.2 267.2,159.4 268.4,162.5 271.9,163.7 275.5,168.5 281.4,168.7 287.3,170.9 289.7,172.5 292.0,178.0 293.2,181.5 295.6,183.2 297.9,184.4 302.7,185.1 306.2,188.6 312.1,189.3 316.9,189.3 320.4,191.5 324.0,193.8 328.0,195.3 329.2,199.8 328.7,204.1 325.1,207.7 322.8,211.3 320.4,213.7 319.2,218.6 319.2,224.8 317.6,229.8 315.0,234.8 312.6,238.1 308.6,238.6 305.0,240.7 301.5,241.7 297.9,245.1 296.5,249.1 296.3,253.1 293.2,257.2 289.7,262.1 287.3,265.5 284.9,268.9 281.4,270.9 277.8,270.6 273.6,268.9 276.2,274.7 275.2,280.0 271.9,282.1 264.8,283.1 264.1,288.6 257.7,289.2 260.1,294.0 257.0,300.5 251.8,305.6 255.3,310.7 249.4,319.7 248.2,327.2 249.4,331.1 243.5,335.1 236.4,329.2 232.9,319.7 232.9,309.0 236.4,302.2 237.6,292.4 236.9,286.1 237.6,278.5 240.0,272.6 242.1,265.5 242.3,257.2 243.5,250.4 244.7,243.8 245.4,236.1 245.2,228.5 242.3,224.8 237.6,221.8 232.9,218.6 230.5,214.9 228.6,211.3 225.8,205.3 223.4,200.5 220.3,196.9 219.1,193.4 221.5,190.7 222.2,188.6 220.1,187.9 220.6,185.1 222.2,182.7 222.2,180.8 224.6,179.2 225.8,176.8 228.1,174.4 228.6,170.9 228.1,167.3 227.2,165.6ZM398.7,91.0 396.6,89.5 394.0,87.8 390.4,88.4 390.7,83.9 389.0,83.0 390.4,79.3 390.9,74.6 389.7,69.8 392.6,67.5 398.5,67.8 403.2,68.2 407.2,68.5 408.4,64.9 408.9,61.2 408.7,59.2 406.3,56.1 404.9,54.7 400.9,53.3 400.4,51.5 403.2,50.1 407.7,50.4 407.2,46.8 408.7,47.9 412.0,47.5 415.0,45.3 415.3,42.3 417.4,41.6 419.8,40.5 421.4,38.2 422.6,34.3 424.5,32.7 428.1,31.9 430.9,31.5 431.8,30.3 431.8,24.2 430.7,19.9 430.9,17.8 434.0,16.9 436.6,14.7 435.9,19.9 437.1,22.1 434.7,25.4 435.2,28.3 437.5,30.3 441.1,28.7 444.6,30.3 449.4,29.1 454.8,27.1 457.6,28.7 458.8,27.1 461.2,24.2 461.2,17.8 464.7,15.1 468.3,17.8 469.0,12.0 467.1,7.9 470.6,6.5 477.7,6.1 482.5,4.6 478.9,1.8 473.0,2.3 465.9,4.6 464.7,1.8 461.9,-0.6 461.9,-10.7 470.6,-27.2 470.6,-67.1 837.4,-67.1 837.4,-21.5 835.0,-8.1 825.5,-3.1 813.7,4.2 804.3,5.1 798.3,13.4 794.8,22.1 797.2,26.2 793.6,28.3 790.1,34.3 786.0,36.2 782.3,42.0 780.6,34.3 779.4,24.2 780.6,17.8 785.3,13.4 790.1,4.2 797.2,-3.1 790.1,-4.1 783.0,-3.1 778.2,7.5 771.1,8.8 764.0,6.5 754.6,7.5 747.5,8.8 742.7,15.6 738.0,19.9 735.6,28.3 739.2,30.3 742.7,33.5 745.8,36.2 743.9,42.0 743.9,51.1 740.4,54.7 733.3,63.2 728.5,68.8 723.8,69.2 720.7,71.4 718.4,75.2 717.9,77.7 713.2,80.8 715.5,83.9 717.7,88.4 717.7,92.8 715.5,94.5 710.8,95.9 710.3,92.8 711.0,88.4 708.4,85.4 707.2,83.9 707.7,80.8 705.4,79.6 700.6,77.7 699.0,82.3 697.8,83.0 699.7,76.8 694.2,79.9 690.0,82.3 691.9,85.4 693.1,87.5 697.1,86.0 701.3,87.2 697.8,89.8 694.2,93.3 696.6,98.5 699.7,103.3 700.2,106.0 699.0,109.6 699.4,112.3 696.6,115.8 694.7,119.5 691.9,122.4 688.3,125.5 683.6,127.5 681.2,128.6 676.5,129.8 672.9,131.1 672.5,133.6 671.1,130.6 667.7,130.3 664.7,131.9 662.3,134.9 661.8,137.4 664.7,141.9 667.7,144.3 669.9,149.2 670.1,154.1 667.0,156.5 664.2,158.0 663.5,160.1 659.9,162.0 659.7,158.9 656.4,157.5 654.0,154.1 650.5,152.4 649.3,150.5 648.1,152.9 647.2,156.5 646.2,160.6 648.8,162.8 649.3,165.6 652.1,166.8 655.2,169.7 656.1,173.2 656.4,176.8 658.0,179.4 656.1,179.2 651.6,176.1 649.3,172.0 648.8,168.5 645.7,163.7 644.1,162.5 644.6,158.9 644.8,154.1 643.4,149.2 642.4,143.6 639.8,143.1 637.5,144.8 634.6,144.3 634.9,139.9 632.7,135.6 629.6,131.9 628.7,128.3 625.6,128.8 622.1,129.8 617.3,130.6 616.9,133.4 613.8,135.1 610.2,138.6 606.2,142.9 602.4,144.8 601.0,146.8 601.3,151.2 600.3,155.3 600.3,158.2 598.4,160.6 596.5,161.6 594.9,163.5 592.5,161.3 591.3,157.7 589.7,154.1 587.8,149.2 585.4,144.3 584.2,139.4 583.7,136.9 583.5,131.9 582.3,131.9 583.0,128.8 578.3,132.4 574.8,128.6 577.1,127.3 573.6,125.5 570.5,122.1 568.8,120.5 562.9,120.8 557.0,121.1 551.1,120.5 547.1,119.7 545.9,116.3 544.0,116.3 540.4,117.4 535.7,115.0 532.2,112.3 530.3,108.2 527.4,107.1 526.3,108.2 525.1,109.6 526.3,112.8 528.6,115.8 530.3,118.2 531.7,121.6 533.3,119.0 533.6,122.9 536.9,123.9 540.4,123.4 542.8,120.3 544.7,118.2 545.2,121.6 546.4,124.2 550.4,125.2 553.0,128.0 549.9,133.1 548.0,136.9 544.7,139.6 541.6,141.9 535.0,144.3 527.4,148.5 518.0,152.2 514.4,152.4 513.2,149.2 512.5,144.3 509.7,139.4 506.1,134.4 503.8,130.3 501.4,124.2 498.6,119.0 495.5,114.2 494.3,112.3 494.1,109.6 492.9,113.6 492.4,114.4 490.8,112.3 488.6,108.5 487.9,104.9 492.7,104.7 494.1,101.3 495.7,97.1 496.7,91.9 497.1,89.5 493.1,89.5 489.6,91.0 484.8,88.9 483.7,90.4 480.1,89.8 477.7,89.2 476.1,87.5 473.7,83.9 474.9,80.8 473.5,79.3 473.0,77.1 468.3,76.8 467.1,78.7 468.8,79.3 465.4,78.0 465.4,81.4 467.1,85.4 468.3,86.3 465.9,87.2 466.4,89.8 464.3,89.8 462.8,88.9 461.7,85.4 460.0,81.4 457.6,77.7 457.4,73.6 455.3,71.4 450.5,68.2 447.0,64.2 445.8,62.6 443.9,61.2 440.6,62.2 440.8,65.5 443.7,68.2 445.3,72.1 449.4,73.3 451.7,76.2 455.3,78.7 454.8,79.9 451.7,78.0 450.8,80.2 452.0,82.3 450.1,84.8 448.6,85.4 449.4,83.0 448.9,79.3 445.8,77.1 442.3,75.2 440.4,73.6 437.5,71.4 436.1,69.2 435.2,66.5 432.3,65.2 429.2,67.2 425.7,69.5 422.9,68.5 420.5,68.5 418.6,71.4 419.1,73.3 416.7,75.2 413.4,77.1 410.8,80.8 411.7,83.3 409.8,86.3 406.8,88.9 401.1,89.2ZM437.5,8.8 436.3,6.5 434.0,9.8 430.4,12.9 426.9,12.9 424.5,9.8 423.3,6.5 423.3,-3.1 430.4,-16.0 437.5,-27.2 458.8,-27.2 452.9,-5.6 451.7,0.8 456.0,5.1 454.1,8.8 450.5,11.1 450.5,19.9 445.8,22.1 442.3,24.6 441.8,20.8 439.4,14.3 438.0,9.8ZM488.4,108.2 490.8,113.6 491.9,117.6 494.3,122.9 496.0,126.8 499.0,130.6 499.8,135.6 502.6,139.4 505.0,144.3 508.5,148.0 513.2,152.9 513.9,155.3 518.0,157.7 522.7,156.0 527.4,155.8 532.6,154.3 532.2,157.7 529.8,163.7 527.4,168.5 525.1,172.0 520.3,176.8 515.6,180.3 510.9,185.1 508.5,188.1 506.1,191.0 505.0,194.1 503.8,198.1 505.0,202.9 507.3,207.7 507.6,216.2 506.1,221.1 500.2,225.5 495.5,230.5 493.8,232.3 495.5,236.1 495.5,241.2 489.6,245.1 489.1,250.4 487.2,254.4 484.8,257.2 482.5,261.3 478.9,264.9 475.4,267.5 472.3,268.3 465.9,268.9 458.8,270.6 455.3,268.9 454.1,264.1 452.2,258.5 450.5,253.4 447.5,247.8 445.8,239.9 444.6,234.8 441.1,227.3 439.4,222.3 441.1,216.2 443.4,212.5 444.2,207.7 442.7,203.6 440.6,196.9 439.9,194.1 437.5,191.5 434.0,187.4 432.8,184.4 433.5,181.5 434.5,178.0 434.5,174.4 432.3,172.0 428.1,172.3 425.7,172.5 422.1,167.8 417.4,167.8 413.9,168.7 409.1,170.4 406.8,171.3 403.2,170.6 399.7,170.6 393.8,172.3 390.2,170.9 385.9,167.3 381.9,164.9 380.0,162.5 379.1,160.1 376.0,156.5 372.0,153.1 371.8,150.5 370.1,147.5 372.5,144.3 372.9,139.4 373.2,135.6 371.3,131.9 372.5,128.0 373.6,124.7 376.5,120.3 378.8,116.8 380.7,114.2 384.3,112.3 387.8,109.6 388.3,105.5 389.5,101.3 391.4,98.8 393.8,97.9 396.1,95.6 397.5,91.9 399.0,91.6 400.9,93.6 404.4,93.3 406.8,93.9 409.1,92.2 411.5,91.6 415.0,89.8 418.6,88.9 423.3,88.9 428.1,88.4 432.8,87.8 435.2,87.5 437.5,88.4 436.3,90.4 436.8,92.8 437.5,95.6 435.6,97.1 437.5,99.3 441.1,100.2 442.7,100.2 447.5,101.6 448.2,104.1 452.9,105.8 456.5,107.4 458.8,105.5 458.8,102.7 462.4,100.2 465.9,101.0 470.6,103.8 475.4,104.7 480.1,105.5 482.5,104.7 484.8,104.1 487.9,104.9ZM528.1,211.3 530.5,219.8 528.6,224.8 526.3,232.3 523.9,239.9 522.7,243.8 518.4,245.4 515.6,243.8 514.4,238.6 513.9,234.8 516.3,231.0 515.6,224.8 516.8,221.1 520.3,220.6 523.9,218.1 525.8,214.9ZM398.0,45.3 403.2,44.6 408.0,43.1 414.6,41.2 415.5,35.8 412.0,34.3 411.5,31.5 408.4,27.1 407.7,24.2 405.6,22.1 406.8,15.6 402.0,14.7 403.9,10.7 399.7,10.7 397.8,15.6 398.5,20.8 400.1,24.2 399.7,27.1 403.9,27.1 404.4,32.3 400.9,33.5 401.6,36.2 399.2,38.9 404.4,40.5 400.9,42.0ZM387.8,39.7 392.6,39.3 396.6,37.4 397.3,32.3 398.5,28.3 396.1,25.4 392.1,25.4 391.4,28.7 387.8,29.5 389.0,33.5 387.1,37.4ZM441.1,85.4 448.2,84.8 447.5,89.2 441.1,86.6ZM431.1,76.2 434.2,76.2 434.2,81.7 431.6,82.3ZM431.8,70.1 434.0,70.1 433.5,74.6 432.1,74.0ZM467.3,92.5 473.7,93.3 473.5,94.2 467.3,93.6ZM487.9,93.9 493.1,92.5 491.9,94.5 488.6,95.4ZM718.6,99.3 719.8,104.9 722.2,104.4 723.8,99.9 728.5,98.5 730.2,97.6 732.8,98.5 735.4,95.4 738.5,95.4 739.9,94.2 742.3,94.2 744.9,92.2 745.1,88.4 746.5,84.5 747.5,80.8 746.3,74.9 743.4,75.5 742.7,79.3 742.3,83.0 739.4,86.0 736.1,86.9 734.9,88.9 733.3,92.2 730.9,92.2 726.2,92.8 722.6,95.4 721.2,97.1ZM742.7,74.6 745.1,71.4 750.3,73.0 755.8,68.8 754.6,65.9 749.8,65.5 746.8,61.9 746.5,68.2 743.4,69.8ZM747.5,59.8 751.0,57.4 749.8,49.3 753.4,49.3 750.5,38.2 749.8,29.1 747.9,32.3 747.0,42.0 747.7,52.9ZM697.8,121.1 700.2,121.6 699.0,125.5 697.3,129.3 695.7,126.8 696.6,122.9ZM668.7,136.1 672.9,134.1 674.1,135.4 672.5,138.1 670.1,138.9ZM600.3,159.6 603.6,162.5 605.0,166.1 603.1,168.0 601.3,168.5 600.3,164.9ZM696.6,138.1 700.6,138.4 700.2,143.1 699.0,145.6 701.3,149.2 704.9,150.5 704.9,152.6 701.3,150.5 697.8,150.0 696.6,148.0 695.4,144.3ZM700.2,166.1 703.7,162.3 708.4,159.4 710.8,164.9 708.4,168.5 707.2,169.0 704.9,167.3ZM702.5,155.3 708.4,153.4 708.4,158.4 703.7,160.1 700.2,157.7ZM689.0,162.8 694.2,157.0 694.9,157.7 689.7,163.2ZM637.0,169.4 642.2,170.4 648.1,175.6 651.6,178.0 656.4,182.7 658.7,186.2 662.3,189.8 661.8,196.4 658.7,196.4 653.5,192.2 649.3,186.2 645.7,181.5 642.2,176.8ZM660.4,198.1 663.5,196.9 668.2,198.1 673.7,197.9 677.7,199.1 682.2,201.0 682.4,203.4 676.5,202.4 669.4,201.0 663.5,200.0ZM669.4,179.2 670.8,178.0 674.8,176.8 678.9,175.1 682.4,171.6 686.0,167.3 688.3,166.1 690.0,167.8 693.5,170.1 690.7,172.5 690.2,176.8 693.1,180.3 689.5,182.7 687.1,186.2 687.1,191.0 682.9,192.2 678.9,190.5 675.3,189.8 672.2,186.7 669.4,182.7ZM694.9,180.8 697.8,179.6 702.5,180.6 707.2,179.2 704.9,181.8 699.0,181.5 696.1,184.8 699.0,185.1 703.2,184.6 700.2,187.4 701.3,191.0 702.5,195.3 699.4,193.6 697.8,189.3 696.1,189.8 696.4,195.7 694.2,195.7 693.8,191.0 692.6,189.1ZM721.4,184.6 725.0,183.6 728.5,184.6 730.9,190.5 736.8,186.5 744.4,188.9 753.4,191.7 756.5,195.3 760.5,196.9 759.3,198.8 762.9,202.9 767.6,207.2 761.7,207.0 758.1,204.1 753.4,201.0 749.8,204.6 745.1,204.3 740.4,201.7 738.0,202.6 739.2,199.3 738.0,195.7 732.1,193.1 726.2,192.2 725.7,189.3ZM686.0,202.6 693.1,202.4 702.5,202.2 707.2,202.2 712.0,202.6 704.9,207.0 695.4,205.5 686.0,203.8ZM762.9,196.0 767.6,195.0 771.6,192.6 771.1,195.0 766.4,197.4ZM680.0,236.1 681.7,235.6 687.8,232.3 693.1,231.0 699.0,228.5 700.9,224.0 703.7,224.3 704.9,221.5 708.4,217.4 712.0,216.2 715.5,218.4 718.4,218.4 717.9,214.9 721.0,212.3 725.0,210.1 730.9,211.5 735.2,211.8 733.3,214.9 732.1,218.1 735.6,220.6 740.8,224.3 744.6,224.8 746.3,218.6 746.8,213.2 748.7,208.4 751.0,213.2 751.7,217.1 755.3,218.6 756.5,223.5 757.6,228.3 761.7,231.0 764.7,234.8 768.3,239.9 772.3,243.8 774.0,247.8 774.9,253.4 773.5,259.9 771.1,264.9 769.2,268.0 767.6,272.6 766.4,277.6 761.7,279.7 757.6,283.1 753.9,280.6 751.0,282.4 745.1,280.3 742.3,276.8 740.4,273.2 738.5,272.6 739.2,270.6 737.5,265.5 735.2,268.9 733.3,270.6 731.4,269.8 729.0,264.9 723.8,262.7 716.7,261.6 709.6,263.5 704.9,265.5 703.7,268.0 697.8,267.8 694.2,269.5 690.7,271.2 686.0,270.9 683.6,269.2 685.0,264.1 685.2,261.3 683.6,257.2 681.7,251.8 681.2,247.8 679.6,243.8 680.5,239.9ZM753.9,288.3 758.1,289.5 762.1,288.6 762.4,292.4 761.2,296.2 758.1,297.6 755.8,295.3 754.6,291.8ZM820.1,269.5 823.9,271.8 826.7,275.6 827.9,278.8 832.6,278.8 833.4,281.5 830.3,284.6 830.0,287.7 826.3,291.1 825.1,290.2 825.5,286.1 822.7,284.0 824.6,281.5 824.8,277.0 820.8,271.2ZM820.1,287.7 823.9,289.9 823.2,292.4 820.3,297.2 816.1,300.5 809.0,307.3 805.4,304.9 810.2,298.9 816.1,294.0 818.5,289.2ZM865.8,-27.2 872.9,-8.1 873.3,1.3 879.3,4.2 880.0,9.8 887.1,10.7 890.6,10.2 891.1,15.1 884.7,22.1 878.8,25.4 873.3,28.3 877.6,27.5 882.3,25.4 888.2,22.1 894.2,16.5 898.9,12.0 900.6,6.5 903.6,-0.1 906.0,-1.6 907.2,4.2 904.3,7.9 909.5,5.1 913.1,2.7 917.8,0.3 922.6,4.2 928.5,4.6 933.2,6.1 937.9,10.7 941.5,15.1 943.9,20.4 947.4,25.0 952.1,27.9 955.2,30.3 958.0,35.1 960.9,40.1 962.8,43.5 967.5,46.4 971.8,48.6 973.4,52.2 968.2,51.5 969.6,58.1 969.9,63.9 968.7,70.4 969.2,78.0 970.3,82.3 973.4,86.0 974.8,89.5 977.9,95.4 982.7,97.1 986.0,100.8 988.1,106.0 991.2,111.0 993.1,114.2 997.1,119.5 999.5,123.4 1003.0,127.0 1004.4,126.0 1002.3,123.1 999.9,118.4 997.1,114.2 995.4,110.4 991.9,105.5 991.9,103.6 995.4,104.7 997.6,109.3 1001.6,114.7 1004.7,119.0 1008.2,123.1 1012.0,126.8 1013.6,130.8 1013.4,133.9 1016.5,136.9 1021.5,139.4 1026.7,142.1 1031.4,144.1 1036.1,145.1 1039.4,143.9 1043.2,146.1 1045.6,148.0 1050.3,149.7 1055.1,151.2 1056.5,151.9 1059.8,155.3 1060.5,158.2 1062.2,159.4 1065.2,162.0 1067.4,163.5 1071.6,165.1 1073.3,165.4 1074.0,163.0 1075.2,161.6 1077.5,162.8 1079.4,164.9 1080.4,162.3 1077.3,160.1 1074.0,160.8 1070.4,161.6 1068.1,160.1 1065.7,157.5 1065.2,154.1 1066.2,148.0 1066.4,146.8 1063.3,144.8 1059.8,144.6 1055.1,144.8 1053.2,144.3 1054.3,140.6 1055.5,138.6 1056.2,135.6 1057.9,131.4 1056.2,130.6 1052.7,130.8 1049.4,131.9 1048.7,135.6 1046.8,137.9 1043.2,138.4 1039.7,138.9 1036.6,137.4 1034.9,135.4 1033.0,131.9 1031.9,128.0 1032.1,124.2 1033.3,119.0 1032.8,115.0 1036.1,111.8 1039.2,109.6 1043.2,108.8 1046.8,109.6 1049.1,110.4 1052.0,110.7 1051.5,107.7 1055.1,107.1 1058.6,107.1 1061.4,109.1 1064.5,108.2 1066.9,111.0 1067.6,114.2 1069.2,117.6 1070.9,120.0 1072.1,121.1 1073.3,120.3 1074.0,116.8 1072.8,112.3 1070.9,108.2 1071.1,104.1 1074.0,101.0 1076.8,97.6 1079.9,95.6 1082.7,94.2 1084.6,93.3 1083.4,88.9 1083.9,86.9 1085.3,83.9 1087.0,81.4 1088.2,77.7 1092.9,76.2 1095.3,74.6 1097.6,74.0 1097.6,73.0 1095.7,71.4 1096.5,68.2 1100.0,66.5 1104.7,64.2 1107.1,62.6 1109.9,61.2 1107.1,67.5 1109.5,68.2 1113.0,64.9 1118.9,62.2 1121.3,59.8 1120.1,56.4 1117.8,60.2 1114.2,60.5 1110.7,58.8 1109.5,54.7 1110.7,50.1 1107.1,48.6 1101.2,51.1 1096.5,55.7 1098.8,52.2 1103.6,47.9 1107.1,45.0 1114.2,44.6 1121.3,44.6 1124.8,40.8 1129.6,38.9 1131.5,36.2 1130.8,32.3 1126.0,27.1 1121.3,24.2 1117.8,17.8 1116.6,11.1 1111.8,3.2 1110.7,2.3 1107.1,8.8 1102.4,11.1 1098.8,8.8 1097.6,-0.6 1092.9,-4.6 1085.8,-7.1 1078.7,-7.6 1079.2,1.8 1079.9,8.8 1077.5,10.2 1081.1,17.8 1082.3,22.1 1078.7,27.1 1075.2,30.3 1076.3,36.2 1076.3,40.1 1072.8,40.8 1069.2,35.1 1068.5,28.3 1068.1,25.4 1062.2,24.2 1055.1,19.9 1050.3,16.9 1044.4,16.9 1043.7,11.1 1039.7,8.8 1039.2,1.8 1043.2,-5.6 1050.3,-16.0 1050.3,-67.1 865.8,-67.1ZM959.5,42.7 965.1,44.2 971.1,51.1 968.7,51.1 965.1,48.2 960.4,45.7ZM894.2,133.9 896.5,134.9 895.1,136.9 893.9,135.4Z" fill="#414c27" filter="url(#b1)"/>
<g clip-path="url(#landclip)"><g filter="url(#b4)"><path d="M371.3,144.3 387.8,141.9 411.5,141.9 435.2,143.1 458.8,144.3 482.5,144.3 501.4,141.9 510.9,154.1 525.1,161.3 515.6,175.6 506.1,189.8 501.4,201.7 491.9,211.3 482.5,206.5 482.5,192.2 489.6,178.0 482.5,166.1 463.6,161.3 439.9,160.1 421.0,161.3 402.0,160.1 383.1,156.5 371.3,151.7Z" fill="#6c6336" opacity="0.9"/><path d="M444.6,208.9 468.3,206.5 489.6,206.5 501.4,216.2 494.3,231.0 489.6,246.4 480.1,262.7 468.3,268.3 456.5,268.3 451.7,251.8 444.6,231.0 439.9,218.6Z" fill="#6a6234" opacity="0.8"/><path d="M574.8,126.8 586.6,113.6 598.4,111.0 610.2,119.0 617.3,129.3 610.2,139.4 600.8,151.7 594.9,162.5 589.0,154.1 584.2,141.9 581.9,131.9Z" fill="#6d6537" opacity="0.8"/><path d="M163.1,49.3 182.0,49.3 186.7,69.8 184.4,91.3 182.0,108.2 179.6,119.0 172.5,119.0 167.8,105.5 165.4,85.4 160.7,63.2Z" fill="#68623a" opacity="0.75"/><path d="M297.9,189.8 316.9,191.0 326.3,196.9 324.0,208.9 316.9,221.1 307.4,231.0 293.2,236.1 279.0,231.0 274.3,218.6 283.7,206.5 293.2,196.9Z" fill="#6b6536" opacity="0.8"/><path d="M390.2,88.4 390.2,69.8 406.8,68.8 418.6,73.0 411.5,82.3 409.1,88.4 399.7,90.4Z" fill="#857848" opacity="0.8"/><path d="M475.4,88.4 475.4,77.7 489.6,74.6 506.1,76.2 515.6,79.3 515.6,86.9 501.4,89.8 487.2,90.7Z" fill="#8c7a4a" opacity="0.85"/><path d="M648.1,59.8 667.0,49.3 686.0,47.5 700.2,56.4 704.9,69.8 693.1,79.3 681.2,88.4 667.0,91.3 657.6,85.4 648.1,73.0Z" fill="#6d6539" opacity="0.7"/><path d="M695.4,221.1 719.1,213.7 733.3,213.7 745.1,218.6 754.6,223.5 761.7,233.5 768.8,243.8 772.3,254.4 766.4,271.2 756.9,280.0 747.5,278.5 756.9,259.9 752.2,241.2 740.4,228.5 721.4,223.5 704.9,226.0Z" fill="#5e5e34" opacity="0.6"/><path d="M515.6,49.3 544.0,38.2 577.1,34.3 610.2,38.2 638.6,42.0 648.1,49.3 619.7,52.9 581.9,49.3 548.7,47.5 522.7,54.7Z" fill="#61603a" opacity="0.55"/><path d="M371.3,145.6 392.6,146.8 411.5,148.0 435.2,149.2 458.8,151.7 482.5,151.7 499.0,149.2 508.5,151.7 518.0,158.9 510.9,168.5 499.0,166.1 489.6,160.1 468.3,157.7 444.6,156.5 421.0,155.3 397.3,154.1 373.6,151.7Z" fill="#93804e" opacity="0.85"/><path d="M387.8,111.0 389.0,99.9 397.3,92.8 411.5,91.3 425.7,88.4 437.5,88.4 437.5,99.9 423.3,99.9 406.8,102.7 397.3,108.2Z" fill="#a08a58" opacity="0.8"/><path d="M370.8,131.9 372.5,122.9 379.6,115.0 387.8,110.1 392.6,104.1 402.0,99.9 413.9,97.1 425.7,96.5 434.0,97.1 436.3,99.9 439.9,101.0 448.2,104.7 457.6,106.9 460.0,102.7 465.9,101.9 477.7,105.5 487.2,105.5 494.3,109.6 495.5,124.2 500.2,135.6 502.6,141.9 496.7,149.2 477.7,151.7 458.8,151.7 444.6,150.5 430.4,148.8 411.5,147.8 392.6,146.3 380.7,145.3 372.2,144.3Z" fill="#dcb982" opacity="1"/><path d="M493.8,112.3 496.7,104.1 502.6,97.1 509.7,94.2 518.0,98.5 525.1,108.2 528.6,115.0 533.3,122.9 542.8,122.9 547.5,125.5 552.3,128.6 547.5,138.1 539.3,142.6 527.4,148.5 518.0,151.9 514.7,151.2 512.8,143.6 506.8,134.9 503.8,129.3 499.5,120.3Z" fill="#dabd8a" opacity="1"/><path d="M519.2,94.2 527.4,88.4 539.3,86.9 548.7,85.4 558.2,88.4 570.0,89.8 578.3,98.5 579.5,111.0 572.4,123.4 558.2,121.6 546.4,119.0 535.7,114.2 527.4,106.9Z" fill="#b89e6e" opacity="0.95"/><path d="M522.7,58.1 534.5,51.1 553.5,51.1 572.4,52.9 591.3,54.7 605.5,59.8 598.4,69.8 581.9,74.6 571.2,83.9 553.5,86.9 540.4,85.4 536.9,73.0 527.4,64.9Z" fill="#ad9763" opacity="0.9"/><path d="M586.6,80.8 598.4,73.0 615.0,64.9 633.9,64.9 655.2,68.2 671.8,66.5 678.9,71.4 669.4,79.3 655.2,85.4 651.6,94.2 643.4,106.9 629.2,112.3 615.0,112.3 599.6,105.5 590.1,94.2Z" fill="#bfa777" opacity="0.95"/><path d="M593.7,86.9 605.5,77.7 619.7,74.6 624.4,80.8 615.0,88.4 600.8,90.4Z" fill="#d6c294" opacity="0.8"/><path d="M679.6,237.4 688.3,231.8 700.2,225.5 712.0,219.1 723.8,217.4 735.6,222.3 745.1,226.0 754.6,233.5 762.9,243.8 766.4,257.2 759.3,271.2 748.7,274.1 740.4,270.6 730.9,267.2 719.1,262.7 707.2,266.1 693.1,268.3 684.1,261.3 680.8,246.4Z" fill="#a07c4c" opacity="1"/><path d="M693.1,238.6 707.2,233.5 721.4,236.1 733.3,243.8 738.0,254.4 726.2,258.5 709.6,257.2 697.8,251.8Z" fill="#b39160" opacity="0.7"/><path d="M126.4,73.0 132.3,64.9 146.5,63.2 158.3,66.5 164.3,76.2 165.4,91.3 167.8,105.5 171.4,116.3 170.2,125.5 165.4,129.3 159.5,122.9 150.1,113.6 143.0,105.5 135.9,99.1 131.1,92.8 126.4,83.9Z" fill="#96845a" opacity="0.9"/><path d="M134.7,82.3 144.1,77.7 151.2,85.4 153.6,99.9 146.5,104.1 139.4,98.5Z" fill="#b39c6e" opacity="0.4"/><path d="M136.3,102.7 140.4,105.5 148.4,119.0 151.7,126.0 148.4,125.5 141.3,115.5 137.0,108.2Z" fill="#ab9467" opacity="0.9"/><path d="M439.4,223.5 449.4,227.3 461.2,229.8 470.6,236.1 474.2,247.8 468.3,258.5 460.0,264.9 454.1,265.5 450.1,253.9 445.3,238.6 439.9,228.5Z" fill="#a68d5b" opacity="0.9"/><path d="M439.2,223.5 443.4,226.0 448.2,239.9 451.7,254.4 449.4,254.4 445.1,239.9 439.9,228.5Z" fill="#c9ae7c" opacity="0.8"/><path d="M506.1,153.4 514.4,155.1 532.2,154.3 529.8,163.7 523.9,172.8 514.4,181.5 509.0,187.4 503.8,179.2 502.6,169.7 505.0,160.1Z" fill="#a98c5a" opacity="0.9"/><path d="M245.2,224.8 250.6,231.0 255.3,241.2 258.9,257.2 261.3,274.1 262.4,286.1 257.7,302.2 253.0,319.7 240.0,319.7 240.0,298.9 242.8,280.0 243.5,262.7 244.0,246.4 244.9,233.5Z" fill="#9c875a" opacity="0.9"/><path d="M219.1,193.4 224.6,196.9 231.7,208.9 241.1,219.8 245.9,224.8 244.7,227.8 231.2,217.6 223.6,204.1Z" fill="#b39a68" opacity="0.85"/><path d="M227.0,178.0 241.1,168.5 260.1,168.5 274.3,170.9 290.8,178.0 297.9,187.4 293.2,201.7 279.0,211.3 260.1,213.7 243.5,208.9 231.7,196.9 224.6,185.1Z" fill="#26371a" opacity="0.85"/><path d="M432.8,174.4 449.4,170.9 468.3,170.9 482.5,175.6 482.5,192.2 473.0,199.3 454.1,199.3 439.9,194.5 432.8,185.1Z" fill="#24351a" opacity="0.85"/><path d="M378.4,158.9 392.6,161.3 411.5,163.7 430.4,166.1 432.8,172.0 421.0,169.7 404.4,170.9 392.6,172.0 383.1,164.9Z" fill="#29391c" opacity="0.7"/><path d="M186.7,88.4 203.3,83.9 222.2,85.4 231.7,91.3 224.6,102.7 217.5,109.6 210.4,107.4 196.2,108.2 186.7,105.5Z" fill="#2a3b1e" opacity="0.75"/><path d="M103.9,22.1 127.6,13.4 163.1,8.8 186.7,13.4 198.6,30.3 222.2,38.2 245.9,34.3 264.8,30.3 269.5,42.0 255.3,51.1 231.7,59.8 212.8,56.4 193.8,47.5 174.9,38.2 146.5,34.3 122.8,38.2 108.7,34.3Z" fill="#2a3a1e" opacity="0.75"/><path d="M477.7,22.1 477.7,-16.0 837.4,-16.0 790.1,4.2 742.7,17.8 723.8,42.0 700.2,38.2 671.8,38.2 643.4,34.3 610.2,26.2 577.1,17.8 544.0,17.8 506.1,26.2Z" fill="#2a3a1f" opacity="0.75"/><path d="M629.2,116.3 643.4,113.6 648.1,126.8 657.6,131.9 667.0,141.9 669.4,154.1 662.3,158.9 655.2,154.1 648.1,149.2 645.7,158.9 643.4,149.2 638.6,139.4 631.5,129.3Z" fill="#27381b" opacity="0.8"/><path d="M667.0,192.2 669.4,178.0 681.2,170.9 690.7,168.5 693.1,178.0 688.3,189.8 676.5,192.2Z" fill="#26371a" opacity="0.7"/><path d="M721.4,185.1 738.0,187.4 756.9,194.5 766.4,206.5 752.2,201.7 738.0,201.7 726.2,192.2Z" fill="#26371a" opacity="0.7"/><path d="M638.6,170.9 648.1,178.0 657.6,187.4 662.3,196.9 655.2,193.4 645.7,182.7 638.6,174.4Z" fill="#2d3e1f" opacity="0.6"/><path d="M392.6,52.9 416.2,42.0 439.9,26.2 468.3,13.4 482.5,22.1 477.7,45.7 458.8,59.8 435.2,63.2 411.5,66.5Z" fill="#324422" opacity="0.5"/><path d="M1230.1,158.9 1244.3,161.3 1263.3,163.7 1282.2,166.1 1284.6,172.0 1272.7,169.7 1256.2,170.9 1244.3,172.0 1234.9,164.9Z" fill="#29391c" opacity="0.7"/></g><g filter="url(#b2)"><ellipse cx="447.0" cy="115.0" rx="16" ry="6" fill="#b38c58" opacity="0.5"/><ellipse cx="430.4" cy="130.6" rx="8" ry="4" fill="#a88352" opacity="0.5"/><ellipse cx="468.3" cy="135.6" rx="10" ry="5" fill="#b08a58" opacity="0.45"/><ellipse cx="402.0" cy="129.3" rx="10" ry="6" fill="#e4cb9c" opacity="0.5"/><ellipse cx="473.0" cy="116.3" rx="8" ry="8" fill="#e6cfa2" opacity="0.5"/><ellipse cx="525.1" cy="133.1" rx="9" ry="6" fill="#e3b57c" opacity="0.6"/><ellipse cx="416.2" cy="113.6" rx="10" ry="4" fill="#c9a473" opacity="0.5"/><ellipse cx="264.8" cy="189.8" rx="18" ry="8" fill="#1f3016" opacity="0.5"/><ellipse cx="463.6" cy="185.1" rx="10" ry="7" fill="#1e2f15" opacity="0.5"/><ellipse cx="56.6" cy="-3.1" rx="24" ry="3.5" fill="#eef2f5" opacity="0.9"/><ellipse cx="80.3" cy="5.1" rx="8" ry="2.2" fill="#f4f7f9" opacity="0.95" transform="rotate(-30 80.3 5.1)"/><ellipse cx="90.9" cy="13.4" rx="6" ry="1.8" fill="#f0f4f6" opacity="0.9" transform="rotate(-50 90.9 13.4)"/><ellipse cx="100.4" cy="24.2" rx="4" ry="1.4" fill="#e8eef2" opacity="0.7" transform="rotate(-55 100.4 24.2)"/><ellipse cx="49.5" cy="11.1" rx="4" ry="1.5" fill="#e8eef2" opacity="0.6" transform="rotate(-40 49.5 11.1)"/><ellipse cx="435.2" cy="58.5" rx="7" ry="1.3" fill="#dfe6ea" opacity="0.55"/><ellipse cx="605.5" cy="109.3" rx="24" ry="1.8" fill="#e6ebed" opacity="0.65" transform="rotate(-14 605.5 109.3)"/><ellipse cx="591.3" cy="91.3" rx="7" ry="2.4" fill="#dfe5e8" opacity="0.55"/><ellipse cx="240.0" cy="312.5" rx="2" ry="7" fill="#e8eef2" opacity="0.6"/><ellipse cx="908.4" cy="-3.1" rx="24" ry="3.5" fill="#eef2f5" opacity="0.9"/><ellipse cx="932.0" cy="5.1" rx="8" ry="2.2" fill="#f4f7f9" opacity="0.95" transform="rotate(-30 932.0 5.1)"/></g>
<rect width="945" height="294" filter="url(#nz)" opacity=".35"/>
</g>
<path d="M477.7,74.6 477.7,68.2 481.3,63.2 484.1,58.1 487.2,58.8 490.8,60.2 488.9,61.9 490.8,64.9 495.0,63.2 497.9,62.2 494.3,58.8 500.2,56.4 503.8,56.4 500.2,59.8 499.0,63.2 502.6,65.5 506.1,68.8 509.9,74.3 505.0,76.2 499.0,75.5 494.3,73.0 489.6,73.0 486.0,75.5 480.6,75.5ZM522.7,61.5 527.4,58.1 533.3,56.4 536.9,58.1 535.7,62.2 532.2,64.9 530.5,68.2 534.5,71.4 536.9,74.6 538.1,79.3 538.8,88.4 534.5,88.9 529.8,87.2 527.4,84.2 528.6,78.4 526.3,73.0 523.9,69.8 522.7,64.9Z" fill="#11366f" filter="url(#b1)"/>
<path d="M193.8,57.4 200.9,52.9 208.0,52.2 211.1,56.4 210.4,58.1 204.5,58.1 198.6,57.8ZM203.8,73.0 207.3,73.0 208.0,66.5 210.4,60.5 206.8,60.2 203.8,66.5ZM211.6,59.8 218.7,59.8 222.2,63.9 218.7,69.2 216.3,69.2 213.9,66.5 214.4,62.6ZM214.4,73.0 219.9,70.4 224.6,70.1 222.2,72.1 217.5,74.6ZM222.7,68.8 229.3,68.8 231.2,66.5 227.0,66.5Z" fill="#0d2149" filter="url(#b1)"/>
<path d="M120.0,49.3 L186.7,49.3 L187.9,50.4 L199.7,52.9 L203.3,51.8 M215.1,59.8 L216.3,62.2 L216.3,69.8 L215.1,73.0 M224.6,69.2 L230.5,66.5 L234.0,63.2 L242.3,63.2 L244.7,61.5 L247.8,55.0 L250.6,55.4 L251.1,60.5 L253.0,63.2 M134.4,101.3 L139.9,101.3 L148.9,104.7 L155.5,104.7 L155.5,103.3 L159.5,103.3 L164.3,109.3 L167.8,111.0 L169.5,108.8 L172.5,109.6 L176.1,115.0 L177.3,117.9 L181.5,119.2 M77.9,2.7 L77.9,-67.1 M103.9,22.1 L96.8,11.1 L87.4,6.5 L82.6,3.2 L77.9,2.7 M193.4,147.8 L193.4,144.3 L196.2,144.3 L197.4,139.9 L200.5,139.9 L200.5,144.6 L202.6,145.1 M200.0,148.3 L203.8,150.9 M200.5,147.3 L204.9,151.7 M204.0,151.7 L210.9,147.3 L214.6,146.8 M208.7,156.3 L213.5,156.8 M215.4,163.5 L216.1,159.9 M228.4,162.3 L228.8,163.9 M224.6,179.4 L233.3,182.9 L232.6,186.2 L225.8,193.4 L221.5,191.0 M241.1,155.3 L238.8,161.3 L241.1,165.6 L245.9,166.1 L251.8,168.0 L251.1,176.1 L253.0,179.9 L245.9,181.3 L245.9,192.6 M269.5,162.5 L266.5,168.5 L267.9,170.4 L260.1,173.2 L259.6,178.0 L253.5,179.9 M267.9,170.4 L270.0,172.0 L269.5,178.0 L272.4,179.9 L277.8,178.2 L282.6,177.3 L286.6,177.5 L289.4,173.0 M276.2,168.5 L275.5,174.9 L277.8,178.2 M283.7,169.0 L282.6,177.3 M245.9,192.6 L238.8,194.5 L238.3,200.0 L244.7,205.3 L244.5,208.9 L247.1,208.9 M247.1,208.9 L249.0,212.5 L248.2,218.6 L246.8,224.8 L244.9,226.8 M247.1,208.9 L257.0,206.5 L257.0,211.3 L266.0,214.9 L269.5,221.5 L273.6,221.8 L275.5,226.0 L273.8,231.5 M247.1,224.8 L250.6,229.8 L250.6,236.1 L253.0,238.1 L257.7,236.3 L263.4,236.8 L265.3,230.5 L273.8,231.5 M273.8,231.5 L274.5,236.1 L279.5,236.8 L283.0,241.2 L282.3,245.4 L284.4,248.6 L279.5,252.6 L275.2,257.7 L274.5,261.3 L273.8,266.1 M263.4,236.8 L269.5,241.2 L274.7,244.3 L272.9,249.6 L279.0,249.9 L282.3,245.4 M275.2,257.7 L280.2,259.6 L285.2,267.5 M250.6,236.1 L249.4,243.8 L247.1,251.8 L245.2,262.7 L245.9,271.2 L243.5,280.0 L241.9,289.2 L241.1,298.9 L241.1,312.5 L238.8,321.6 M380.7,114.4 L390.9,114.4 L390.9,111.8 L403.2,105.5 L408.7,102.2 L406.8,94.2 M390.9,115.3 L400.1,121.6 L414.3,131.6 L419.3,136.9 L421.4,136.6 L425.7,135.6 L439.9,125.5 M380.7,131.1 L380.7,126.8 L383.1,119.0 L390.9,119.0 L390.9,115.3 M371.3,131.9 L380.7,131.1 M400.1,121.6 L396.1,121.6 L398.3,143.1 L399.0,145.6 L383.1,146.3 L382.4,148.0 M372.5,144.1 L377.2,142.6 L382.4,148.0 L384.3,152.9 M421.4,136.6 L421.4,143.1 L419.8,145.6 L412.0,146.8 L410.3,146.8 L406.8,148.5 L400.9,150.5 L398.5,157.7 M419.8,145.6 L420.0,154.8 L418.1,158.9 L417.9,167.5 M420.0,154.8 L413.6,156.5 M421.0,150.5 L428.1,151.7 L435.2,150.9 L443.4,150.0 L445.1,152.9 M439.9,125.5 L447.0,126.8 L449.4,133.1 L448.2,142.4 L443.4,148.0 L443.4,150.0 M434.0,107.7 L435.2,116.3 L438.7,122.9 L439.9,125.5 M431.6,88.4 L431.1,94.2 L429.2,98.5 L432.8,102.7 L434.0,107.7 L438.7,99.3 M447.0,126.8 L468.3,135.6 L468.3,134.4 L470.6,134.4 L470.6,103.8 M470.6,129.3 L485.6,129.3 L498.8,129.3 M468.3,135.6 L468.3,145.1 L464.7,149.2 L465.7,156.5 L467.3,161.8 M445.1,152.9 L447.0,158.9 L444.2,159.2 L447.5,164.9 L445.8,169.7 L449.4,177.5 M431.6,171.6 L434.7,167.0 L439.4,166.1 L442.7,159.2 L445.1,152.9 M434.7,177.3 L443.0,177.5 L449.4,177.5 L455.5,174.4 L455.3,171.3 L464.7,171.6 L476.3,170.6 M467.3,161.8 L476.3,170.6 L484.4,174.2 L491.7,172.8 L496.4,171.8 M491.7,172.8 L491.9,160.1 L497.6,152.6 L499.0,148.0 L497.9,146.3 L502.8,139.4 M497.9,148.5 L506.1,148.0 L511.8,152.9 L513.5,152.4 M511.8,152.9 L510.4,156.5 L513.2,156.5 L513.7,155.3 M513.2,156.5 L512.8,157.0 L518.0,162.5 L525.1,163.7 L524.8,163.7 M525.1,163.7 L518.0,170.9 L510.9,172.8 L508.5,173.5 L508.3,184.6 L509.9,186.7 M496.4,171.8 L496.9,172.3 L505.0,174.4 L508.5,173.5 M491.7,185.1 L500.7,190.0 L504.2,193.8 M484.4,174.2 L481.5,186.0 L480.6,193.1 L484.1,202.4 L479.4,202.9 L478.7,210.8 L482.0,214.7 M491.7,185.1 L491.7,172.8 M481.5,186.0 L491.7,185.1 M484.1,202.4 L489.6,205.0 L493.1,210.1 L507.1,207.7 M440.6,196.9 L442.3,196.7 L450.8,196.7 L451.7,200.0 L457.4,199.3 L457.6,201.7 L463.1,201.7 L463.6,208.9 L468.3,208.9 L468.3,213.7 L463.6,213.7 L463.6,221.5 L466.9,225.0 M468.3,208.9 L478.7,210.8 M439.4,224.3 L443.4,223.5 L455.3,224.5 L466.9,225.0 L471.1,225.5 M471.1,225.5 L475.4,226.0 L480.1,220.3 L483.4,220.1 L483.4,218.6 L489.6,216.2 L493.1,210.1 M471.1,225.5 L473.0,228.5 L477.0,233.5 L481.1,236.6 L485.6,237.1 L487.2,242.5 L487.0,248.6 L489.3,248.6 M483.4,220.1 L489.6,223.5 L489.1,231.0 L485.6,237.1 M458.8,252.8 L458.8,243.3 L458.8,236.1 L461.2,236.1 L461.2,226.8 L466.9,225.0 M450.5,253.4 L458.8,252.8 L460.7,248.6 L465.0,246.4 L471.8,245.7 L475.4,240.2 L481.1,236.6 M438.0,191.9 L445.8,194.3 L449.1,192.2 L453.4,183.9 L455.5,174.4 M438.2,177.5 L438.2,180.3 L434.7,180.3 M443.0,177.5 L445.8,184.1 L445.6,187.4 L438.0,191.9 M391.2,172.0 L393.8,168.5 L391.4,164.7 L387.1,162.5 L384.3,166.3 M387.1,162.5 L385.5,158.9 L380.0,161.3 M391.4,164.7 L392.6,158.4 L398.5,157.7 L405.1,160.1 L404.4,170.6 M376.0,156.5 L379.1,152.6 L372.0,153.1 M405.1,160.1 L404.9,156.5 L411.5,156.3 L413.6,156.5 L415.3,168.0 M411.5,156.3 L412.9,168.2 M414.3,168.2 L414.3,168.7 M390.7,73.3 L396.8,74.3 L394.9,80.2 L393.8,87.8 M407.2,68.8 L413.2,70.8 L419.1,71.7 M417.4,41.6 L421.4,45.7 L425.9,47.5 L430.9,49.3 L429.5,54.3 L425.7,59.2 L428.1,60.2 L427.6,65.9 L429.2,67.2 M419.5,40.5 L425.7,38.9 L428.1,33.1 M425.7,42.7 L425.9,47.5 M431.8,26.6 L434.9,27.1 M429.5,54.3 L434.2,54.7 L436.3,56.8 L440.4,56.1 L442.3,54.7 L444.2,50.4 L440.1,44.6 L446.5,42.0 L445.1,30.7 M436.3,56.8 L432.8,60.2 L428.1,60.2 M440.4,56.1 L443.9,58.1 L443.9,61.2 M444.2,50.4 L451.7,50.8 L456.0,47.5 L464.7,49.0 L468.3,43.1 L467.3,38.2 L468.0,30.3 L465.4,28.7 L458.3,28.7 M446.5,42.0 L450.5,44.6 L456.0,47.5 M451.7,50.8 L449.6,56.8 L443.9,58.1 M449.6,56.8 L456.0,60.2 L461.2,59.2 L465.7,52.9 L464.7,49.0 M456.0,60.2 L456.5,63.6 L448.9,62.6 L443.7,61.5 M456.5,63.6 L457.9,69.8 L455.3,71.4 M461.2,59.2 L465.2,64.9 L464.5,72.1 L460.2,76.2 L458.8,80.2 M464.5,72.1 L473.0,74.0 L477.7,73.0 M465.2,64.9 L476.6,66.5 L479.2,67.5 M465.7,52.9 L474.4,51.8 L478.2,61.5 L481.5,62.2 M474.4,51.8 L482.5,58.1 M467.3,38.2 L486.7,37.8 L492.9,38.9 L495.7,44.2 L506.1,47.2 L505.4,53.6 L501.9,56.1 M468.0,30.3 L474.9,23.3 L478.2,21.2 L477.3,15.6 L476.3,15.6 L477.7,6.5 M461.2,21.6 L474.9,23.3 M463.6,15.1 L470.6,13.4 L476.3,15.6 M478.2,21.2 L484.6,23.7 L488.9,32.3 L486.7,37.8 M439.9,9.3 L441.1,1.8 L440.4,-3.1 L441.1,-16.0 M478.9,1.8 L482.5,-5.6 L482.5,-67.1 M473.7,74.0 L474.0,76.5 M496.7,88.9 L501.4,88.9 L511.6,87.8 L517.5,87.8 L515.8,81.1 L514.7,75.9 L509.9,74.3 M517.5,87.8 L520.3,91.9 L519.2,97.1 L524.4,105.5 L526.3,108.2 M515.8,81.1 L521.5,82.7 L527.0,84.2 M521.5,73.6 L514.4,69.2 L506.1,68.5 M521.5,73.6 L523.9,75.5 L527.4,74.6 M514.7,75.9 L521.5,73.6 M521.5,82.7 L518.0,75.5 M494.5,99.6 L496.2,99.1 L498.1,96.5 L496.7,95.4 M496.2,99.1 L496.4,100.8 L503.3,98.8 L509.0,94.8 L511.6,87.8 M492.7,104.7 L494.1,109.6 M495.5,100.8 L495.5,104.7 L494.3,109.6 L498.6,110.1 L500.2,108.2 L503.8,102.7 L503.3,98.8 M503.8,102.7 L510.9,104.9 L517.3,110.4 L521.8,110.7 L524.4,108.2 M521.8,110.7 L523.9,112.3 L526.0,112.3 M536.0,143.1 L534.5,136.9 L541.6,134.4 L543.3,129.3 L542.1,127.5 L536.0,127.0 L533.6,123.7 M513.7,142.6 L516.1,140.9 L522.7,141.9 L534.5,136.9 M542.1,127.5 L544.0,123.9 L544.9,121.8 M539.0,87.5 L545.2,84.8 L556.3,89.5 L555.4,96.2 L555.6,104.1 L557.7,104.4 L555.6,108.8 L561.0,115.8 L557.2,121.1 M555.6,108.8 L568.4,108.5 L568.4,103.0 L575.5,103.0 L577.8,98.8 L576.9,97.1 L580.0,91.0 L587.8,88.4 L589.0,88.6 M556.3,89.5 L564.1,90.4 L568.8,87.2 L572.4,88.4 L580.7,83.9 L580.7,88.9 M572.9,125.0 L579.5,123.1 L576.2,115.8 L583.0,111.5 L587.8,105.5 L587.8,100.5 L586.6,97.1 L595.6,92.8 M595.6,92.8 L598.4,101.3 L603.1,107.7 L601.0,111.5 L610.2,115.0 L619.9,117.9 L621.6,113.6 L629.2,116.6 L629.4,114.2 L641.9,113.1 M603.1,107.7 L615.0,113.6 L621.6,113.6 M619.9,117.9 L624.0,117.1 L629.2,116.6 M622.1,129.8 L621.6,123.4 L619.9,117.9 M624.0,117.1 L624.0,120.8 L630.1,121.6 L627.3,124.2 L629.9,125.0 L629.6,131.4 M630.1,121.6 L635.6,120.3 L641.9,113.1 M629.6,131.4 L632.2,124.2 L635.6,120.3 M641.9,113.1 L645.0,115.0 L642.4,122.9 L645.5,123.9 L646.2,129.1 L650.9,130.6 L648.3,133.6 L643.4,140.6 L645.5,143.4 L643.8,146.8 L646.2,154.1 L645.0,158.2 M650.9,130.6 L653.1,128.3 L660.6,126.0 L664.0,127.3 L667.0,130.6 M653.1,128.3 L655.0,130.1 L658.7,133.4 L657.6,135.9 L660.4,137.6 L666.1,147.5 L665.8,153.4 L662.1,155.1 L658.7,158.0 M648.3,133.6 L650.9,135.6 L650.9,140.6 L653.1,138.9 L657.6,138.6 L659.5,143.4 L661.3,148.3 L654.0,148.8 L655.0,154.8 M661.3,148.3 L665.8,148.0 M648.3,167.5 L650.7,169.2 L653.1,168.0 M670.8,178.0 L672.9,180.6 L677.0,179.2 L681.0,179.4 L683.6,176.8 L685.5,172.5 L689.7,172.8 M745.1,188.9 L745.1,204.3 M521.5,51.5 L527.4,43.8 L532.2,39.3 L540.9,42.0 L549.9,42.0 L555.8,42.0 L557.0,32.3 L565.3,28.3 L574.8,25.0 L579.5,30.3 L585.4,32.3 L593.7,33.5 L600.8,42.7 L609.1,42.0 L618.1,48.6 M536.9,72.4 L544.0,75.2 L542.8,63.2 L550.1,61.5 L556.3,66.5 L558.2,68.2 L567.7,75.5 L572.4,76.8 L579.0,72.4 L585.4,69.8 L586.6,70.1 L601.3,72.4 M544.0,75.2 L546.8,75.2 L553.5,72.4 L558.0,75.5 L568.8,87.2 M601.3,72.4 L601.3,63.2 L606.7,62.6 L607.9,55.7 L613.8,56.1 L618.1,48.6 M587.8,88.4 L585.6,80.8 L578.3,78.7 L585.4,80.8 L586.6,77.7 L601.3,72.4 M572.4,88.4 L571.9,81.1 L578.3,78.7 L579.0,72.4 M618.1,48.6 L626.8,62.6 L637.2,65.5 L641.5,70.8 L658.7,74.0 L671.8,71.1 L676.3,67.5 L676.3,63.2 L686.0,58.8 L694.9,57.4 L690.2,52.9 L686.0,46.1 M618.1,48.6 L629.2,42.7 L643.4,45.7 L644.1,38.2 L653.3,40.8 L664.7,46.1 L678.9,47.2 L686.0,46.1 L693.5,44.6 L697.8,33.1 L708.7,34.3 L713.2,46.4 L720.7,49.7 L721.4,54.0 L730.2,51.8 L726.4,62.9 L721.9,63.9 L722.2,68.8 L720.5,71.7 M705.6,79.3 L709.6,74.9 L714.8,74.9 L718.6,70.1 L720.5,71.7 M711.3,86.0 L715.1,83.6 M971.8,49.3 L1038.5,49.3 L1039.7,50.4 L1051.5,52.9 L1055.1,51.8 M929.7,2.7 L929.7,-67.1 M955.7,22.1 L948.6,11.1 L939.1,6.5 L934.4,3.2 L929.7,2.7" fill="none" stroke="#f4f1e4" stroke-width=".8" stroke-linejoin="round" opacity=".62"/>
<path d="M14.0,-27.2 21.1,-8.1 21.6,1.3 27.5,4.2 28.2,9.8 35.3,10.7 38.9,10.2 39.3,15.1 32.9,22.1 27.0,25.4 21.6,28.3 25.8,27.5 30.6,25.4 36.5,22.1 42.4,16.5 47.1,12.0 48.8,6.5 51.9,-0.1 54.2,-1.6 55.4,4.2 52.6,7.9 57.8,5.1 61.3,2.7 66.1,0.3 70.8,4.2 76.7,4.6 81.4,6.1 86.2,10.7 89.7,15.1 92.1,20.4 95.6,25.0 100.4,27.9 103.4,30.3 106.3,35.1 109.1,40.1 111.0,43.5 115.8,46.4 120.0,48.6 121.7,52.2 116.5,51.5 117.9,58.1 118.1,63.9 116.9,70.4 117.4,78.0 118.6,82.3 121.7,86.0 123.1,89.5 126.2,95.4 130.9,97.1 134.2,100.8 136.3,106.0 139.4,111.0 141.3,114.2 145.3,119.5 147.7,123.4 151.2,127.0 152.7,126.0 150.5,123.1 148.2,118.4 145.3,114.2 143.7,110.4 140.1,105.5 140.1,103.6 143.7,104.7 145.8,109.3 149.8,114.7 152.9,119.0 156.4,123.1 160.2,126.8 161.9,130.8 161.7,133.9 164.7,136.9 169.7,139.4 174.9,142.1 179.6,144.1 184.4,145.1 187.7,143.9 191.5,146.1 193.8,148.0 198.6,149.7 203.3,151.2 204.7,151.9 208.0,155.3 208.7,158.2 210.4,159.4 213.5,162.0 215.6,163.5 219.9,165.1 221.5,165.4 222.2,163.0 223.4,161.6 225.8,162.8 227.7,164.9 228.6,162.3 225.5,160.1 222.2,160.8 218.7,161.6 216.3,160.1 213.9,157.5 213.5,154.1 214.4,148.0 214.6,146.8 211.6,144.8 208.0,144.6 203.3,144.8 201.4,144.3 202.6,140.6 203.8,138.6 204.5,135.6 206.1,131.4 204.5,130.6 200.9,130.8 197.6,131.9 196.9,135.6 195.0,137.9 191.5,138.4 187.9,138.9 184.8,137.4 183.2,135.4 181.3,131.9 180.1,128.0 180.3,124.2 181.5,119.0 181.1,115.0 184.4,111.8 187.4,109.6 191.5,108.8 195.0,109.6 197.4,110.4 200.2,110.7 199.7,107.7 203.3,107.1 206.8,107.1 209.7,109.1 212.8,108.2 215.1,111.0 215.8,114.2 217.5,117.6 219.1,120.0 220.3,121.1 221.5,120.3 222.2,116.8 221.0,112.3 219.1,108.2 219.4,104.1 222.2,101.0 225.1,97.6 228.1,95.6 231.0,94.2 232.9,93.3 231.7,88.9 232.2,86.9 233.6,83.9 235.2,81.4 236.4,77.7 241.1,76.2 243.5,74.6 245.9,74.0 245.9,73.0 244.0,71.4 244.7,68.2 248.2,66.5 253.0,64.2 255.3,62.6 258.2,61.2 255.3,67.5 257.7,68.2 261.3,64.9 267.2,62.2 269.5,59.8 268.4,56.4 266.0,60.2 262.4,60.5 258.9,58.8 257.7,54.7 258.9,50.1 255.3,48.6 249.4,51.1 244.7,55.7 247.1,52.2 251.8,47.9 255.3,45.0 262.4,44.6 269.5,44.6 273.1,40.8 277.8,38.9 279.7,36.2 279.0,32.3 274.3,27.1 269.5,24.2 266.0,17.8 264.8,11.1 260.1,3.2 258.9,2.3 255.3,8.8 250.6,11.1 247.1,8.8 245.9,-0.6 241.1,-4.6 234.0,-7.1 227.0,-7.6 227.4,1.8 228.1,8.8 225.8,10.2 229.3,17.8 230.5,22.1 227.0,27.1 223.4,30.3 224.6,36.2 224.6,40.1 221.0,40.8 217.5,35.1 216.8,28.3 216.3,25.4 210.4,24.2 203.3,19.9 198.6,16.9 192.6,16.9 191.9,11.1 187.9,8.8 187.4,1.8 191.5,-5.6 198.6,-16.0 198.6,-67.1 14.0,-67.1ZM271.2,54.3 279.0,54.3 280.2,56.8 284.9,57.8 286.8,54.7 284.9,51.1 284.2,48.2 280.2,45.7 279.0,40.1 277.1,42.0 275.5,45.7 273.1,50.1ZM107.7,42.7 113.4,44.2 119.3,51.1 116.9,51.1 113.4,48.2 108.7,45.7ZM210.4,129.6 215.1,127.0 219.9,126.5 224.6,128.0 229.3,130.6 234.0,132.6 235.9,133.9 234.0,134.6 228.1,134.6 227.0,132.6 223.4,130.6 218.7,129.1 213.9,129.1ZM235.5,138.4 240.0,138.9 242.3,140.1 245.9,138.6 249.7,137.9 248.2,136.4 245.9,134.9 241.9,134.6 238.8,134.6 238.1,136.9ZM226.2,138.4 231.0,139.1 229.3,139.9 226.5,139.4ZM252.5,138.1 256.1,138.4 255.8,139.4 252.5,139.4ZM293.2,-5.6 297.9,-0.6 303.8,4.2 309.1,4.2 310.9,-3.1 314.5,-13.3 314.5,-67.1 288.5,-67.1ZM42.4,133.9 44.8,134.9 43.4,136.9 42.2,135.4ZM228.1,162.5 229.8,161.8 232.9,157.7 234.5,156.5 238.8,155.5 241.9,153.1 242.3,156.5 245.4,155.3 245.9,153.9 249.4,156.5 255.3,157.5 260.1,157.7 264.8,157.2 267.2,159.4 268.4,162.5 271.9,163.7 275.5,168.5 281.4,168.7 287.3,170.9 289.7,172.5 292.0,178.0 293.2,181.5 295.6,183.2 297.9,184.4 302.7,185.1 306.2,188.6 312.1,189.3 316.9,189.3 320.4,191.5 324.0,193.8 328.0,195.3 329.2,199.8 328.7,204.1 325.1,207.7 322.8,211.3 320.4,213.7 319.2,218.6 319.2,224.8 317.6,229.8 315.0,234.8 312.6,238.1 308.6,238.6 305.0,240.7 301.5,241.7 297.9,245.1 296.5,249.1 296.3,253.1 293.2,257.2 289.7,262.1 287.3,265.5 284.9,268.9 281.4,270.9 277.8,270.6 273.6,268.9 276.2,274.7 275.2,280.0 271.9,282.1 264.8,283.1 264.1,288.6 257.7,289.2 260.1,294.0 257.0,300.5 251.8,305.6 255.3,310.7 249.4,319.7 248.2,327.2 249.4,331.1 243.5,335.1 236.4,329.2 232.9,319.7 232.9,309.0 236.4,302.2 237.6,292.4 236.9,286.1 237.6,278.5 240.0,272.6 242.1,265.5 242.3,257.2 243.5,250.4 244.7,243.8 245.4,236.1 245.2,228.5 242.3,224.8 237.6,221.8 232.9,218.6 230.5,214.9 228.6,211.3 225.8,205.3 223.4,200.5 220.3,196.9 219.1,193.4 221.5,190.7 222.2,188.6 220.1,187.9 220.6,185.1 222.2,182.7 222.2,180.8 224.6,179.2 225.8,176.8 228.1,174.4 228.6,170.9 228.1,167.3 227.2,165.6ZM398.7,91.0 396.6,89.5 394.0,87.8 390.4,88.4 390.7,83.9 389.0,83.0 390.4,79.3 390.9,74.6 389.7,69.8 392.6,67.5 398.5,67.8 403.2,68.2 407.2,68.5 408.4,64.9 408.9,61.2 408.7,59.2 406.3,56.1 404.9,54.7 400.9,53.3 400.4,51.5 403.2,50.1 407.7,50.4 407.2,46.8 408.7,47.9 412.0,47.5 415.0,45.3 415.3,42.3 417.4,41.6 419.8,40.5 421.4,38.2 422.6,34.3 424.5,32.7 428.1,31.9 430.9,31.5 431.8,30.3 431.8,24.2 430.7,19.9 430.9,17.8 434.0,16.9 436.6,14.7 435.9,19.9 437.1,22.1 434.7,25.4 435.2,28.3 437.5,30.3 441.1,28.7 444.6,30.3 449.4,29.1 454.8,27.1 457.6,28.7 458.8,27.1 461.2,24.2 461.2,17.8 464.7,15.1 468.3,17.8 469.0,12.0 467.1,7.9 470.6,6.5 477.7,6.1 482.5,4.6 478.9,1.8 473.0,2.3 465.9,4.6 464.7,1.8 461.9,-0.6 461.9,-10.7 470.6,-27.2 470.6,-67.1 837.4,-67.1 837.4,-21.5 835.0,-8.1 825.5,-3.1 813.7,4.2 804.3,5.1 798.3,13.4 794.8,22.1 797.2,26.2 793.6,28.3 790.1,34.3 786.0,36.2 782.3,42.0 780.6,34.3 779.4,24.2 780.6,17.8 785.3,13.4 790.1,4.2 797.2,-3.1 790.1,-4.1 783.0,-3.1 778.2,7.5 771.1,8.8 764.0,6.5 754.6,7.5 747.5,8.8 742.7,15.6 738.0,19.9 735.6,28.3 739.2,30.3 742.7,33.5 745.8,36.2 743.9,42.0 743.9,51.1 740.4,54.7 733.3,63.2 728.5,68.8 723.8,69.2 720.7,71.4 718.4,75.2 717.9,77.7 713.2,80.8 715.5,83.9 717.7,88.4 717.7,92.8 715.5,94.5 710.8,95.9 710.3,92.8 711.0,88.4 708.4,85.4 707.2,83.9 707.7,80.8 705.4,79.6 700.6,77.7 699.0,82.3 697.8,83.0 699.7,76.8 694.2,79.9 690.0,82.3 691.9,85.4 693.1,87.5 697.1,86.0 701.3,87.2 697.8,89.8 694.2,93.3 696.6,98.5 699.7,103.3 700.2,106.0 699.0,109.6 699.4,112.3 696.6,115.8 694.7,119.5 691.9,122.4 688.3,125.5 683.6,127.5 681.2,128.6 676.5,129.8 672.9,131.1 672.5,133.6 671.1,130.6 667.7,130.3 664.7,131.9 662.3,134.9 661.8,137.4 664.7,141.9 667.7,144.3 669.9,149.2 670.1,154.1 667.0,156.5 664.2,158.0 663.5,160.1 659.9,162.0 659.7,158.9 656.4,157.5 654.0,154.1 650.5,152.4 649.3,150.5 648.1,152.9 647.2,156.5 646.2,160.6 648.8,162.8 649.3,165.6 652.1,166.8 655.2,169.7 656.1,173.2 656.4,176.8 658.0,179.4 656.1,179.2 651.6,176.1 649.3,172.0 648.8,168.5 645.7,163.7 644.1,162.5 644.6,158.9 644.8,154.1 643.4,149.2 642.4,143.6 639.8,143.1 637.5,144.8 634.6,144.3 634.9,139.9 632.7,135.6 629.6,131.9 628.7,128.3 625.6,128.8 622.1,129.8 617.3,130.6 616.9,133.4 613.8,135.1 610.2,138.6 606.2,142.9 602.4,144.8 601.0,146.8 601.3,151.2 600.3,155.3 600.3,158.2 598.4,160.6 596.5,161.6 594.9,163.5 592.5,161.3 591.3,157.7 589.7,154.1 587.8,149.2 585.4,144.3 584.2,139.4 583.7,136.9 583.5,131.9 582.3,131.9 583.0,128.8 578.3,132.4 574.8,128.6 577.1,127.3 573.6,125.5 570.5,122.1 568.8,120.5 562.9,120.8 557.0,121.1 551.1,120.5 547.1,119.7 545.9,116.3 544.0,116.3 540.4,117.4 535.7,115.0 532.2,112.3 530.3,108.2 527.4,107.1 526.3,108.2 525.1,109.6 526.3,112.8 528.6,115.8 530.3,118.2 531.7,121.6 533.3,119.0 533.6,122.9 536.9,123.9 540.4,123.4 542.8,120.3 544.7,118.2 545.2,121.6 546.4,124.2 550.4,125.2 553.0,128.0 549.9,133.1 548.0,136.9 544.7,139.6 541.6,141.9 535.0,144.3 527.4,148.5 518.0,152.2 514.4,152.4 513.2,149.2 512.5,144.3 509.7,139.4 506.1,134.4 503.8,130.3 501.4,124.2 498.6,119.0 495.5,114.2 494.3,112.3 494.1,109.6 492.9,113.6 492.4,114.4 490.8,112.3 488.6,108.5 487.9,104.9 492.7,104.7 494.1,101.3 495.7,97.1 496.7,91.9 497.1,89.5 493.1,89.5 489.6,91.0 484.8,88.9 483.7,90.4 480.1,89.8 477.7,89.2 476.1,87.5 473.7,83.9 474.9,80.8 473.5,79.3 473.0,77.1 468.3,76.8 467.1,78.7 468.8,79.3 465.4,78.0 465.4,81.4 467.1,85.4 468.3,86.3 465.9,87.2 466.4,89.8 464.3,89.8 462.8,88.9 461.7,85.4 460.0,81.4 457.6,77.7 457.4,73.6 455.3,71.4 450.5,68.2 447.0,64.2 445.8,62.6 443.9,61.2 440.6,62.2 440.8,65.5 443.7,68.2 445.3,72.1 449.4,73.3 451.7,76.2 455.3,78.7 454.8,79.9 451.7,78.0 450.8,80.2 452.0,82.3 450.1,84.8 448.6,85.4 449.4,83.0 448.9,79.3 445.8,77.1 442.3,75.2 440.4,73.6 437.5,71.4 436.1,69.2 435.2,66.5 432.3,65.2 429.2,67.2 425.7,69.5 422.9,68.5 420.5,68.5 418.6,71.4 419.1,73.3 416.7,75.2 413.4,77.1 410.8,80.8 411.7,83.3 409.8,86.3 406.8,88.9 401.1,89.2ZM437.5,8.8 436.3,6.5 434.0,9.8 430.4,12.9 426.9,12.9 424.5,9.8 423.3,6.5 423.3,-3.1 430.4,-16.0 437.5,-27.2 458.8,-27.2 452.9,-5.6 451.7,0.8 456.0,5.1 454.1,8.8 450.5,11.1 450.5,19.9 445.8,22.1 442.3,24.6 441.8,20.8 439.4,14.3 438.0,9.8ZM488.4,108.2 490.8,113.6 491.9,117.6 494.3,122.9 496.0,126.8 499.0,130.6 499.8,135.6 502.6,139.4 505.0,144.3 508.5,148.0 513.2,152.9 513.9,155.3 518.0,157.7 522.7,156.0 527.4,155.8 532.6,154.3 532.2,157.7 529.8,163.7 527.4,168.5 525.1,172.0 520.3,176.8 515.6,180.3 510.9,185.1 508.5,188.1 506.1,191.0 505.0,194.1 503.8,198.1 505.0,202.9 507.3,207.7 507.6,216.2 506.1,221.1 500.2,225.5 495.5,230.5 493.8,232.3 495.5,236.1 495.5,241.2 489.6,245.1 489.1,250.4 487.2,254.4 484.8,257.2 482.5,261.3 478.9,264.9 475.4,267.5 472.3,268.3 465.9,268.9 458.8,270.6 455.3,268.9 454.1,264.1 452.2,258.5 450.5,253.4 447.5,247.8 445.8,239.9 444.6,234.8 441.1,227.3 439.4,222.3 441.1,216.2 443.4,212.5 444.2,207.7 442.7,203.6 440.6,196.9 439.9,194.1 437.5,191.5 434.0,187.4 432.8,184.4 433.5,181.5 434.5,178.0 434.5,174.4 432.3,172.0 428.1,172.3 425.7,172.5 422.1,167.8 417.4,167.8 413.9,168.7 409.1,170.4 406.8,171.3 403.2,170.6 399.7,170.6 393.8,172.3 390.2,170.9 385.9,167.3 381.9,164.9 380.0,162.5 379.1,160.1 376.0,156.5 372.0,153.1 371.8,150.5 370.1,147.5 372.5,144.3 372.9,139.4 373.2,135.6 371.3,131.9 372.5,128.0 373.6,124.7 376.5,120.3 378.8,116.8 380.7,114.2 384.3,112.3 387.8,109.6 388.3,105.5 389.5,101.3 391.4,98.8 393.8,97.9 396.1,95.6 397.5,91.9 399.0,91.6 400.9,93.6 404.4,93.3 406.8,93.9 409.1,92.2 411.5,91.6 415.0,89.8 418.6,88.9 423.3,88.9 428.1,88.4 432.8,87.8 435.2,87.5 437.5,88.4 436.3,90.4 436.8,92.8 437.5,95.6 435.6,97.1 437.5,99.3 441.1,100.2 442.7,100.2 447.5,101.6 448.2,104.1 452.9,105.8 456.5,107.4 458.8,105.5 458.8,102.7 462.4,100.2 465.9,101.0 470.6,103.8 475.4,104.7 480.1,105.5 482.5,104.7 484.8,104.1 487.9,104.9ZM528.1,211.3 530.5,219.8 528.6,224.8 526.3,232.3 523.9,239.9 522.7,243.8 518.4,245.4 515.6,243.8 514.4,238.6 513.9,234.8 516.3,231.0 515.6,224.8 516.8,221.1 520.3,220.6 523.9,218.1 525.8,214.9ZM398.0,45.3 403.2,44.6 408.0,43.1 414.6,41.2 415.5,35.8 412.0,34.3 411.5,31.5 408.4,27.1 407.7,24.2 405.6,22.1 406.8,15.6 402.0,14.7 403.9,10.7 399.7,10.7 397.8,15.6 398.5,20.8 400.1,24.2 399.7,27.1 403.9,27.1 404.4,32.3 400.9,33.5 401.6,36.2 399.2,38.9 404.4,40.5 400.9,42.0ZM387.8,39.7 392.6,39.3 396.6,37.4 397.3,32.3 398.5,28.3 396.1,25.4 392.1,25.4 391.4,28.7 387.8,29.5 389.0,33.5 387.1,37.4ZM441.1,85.4 448.2,84.8 447.5,89.2 441.1,86.6ZM431.1,76.2 434.2,76.2 434.2,81.7 431.6,82.3ZM431.8,70.1 434.0,70.1 433.5,74.6 432.1,74.0ZM467.3,92.5 473.7,93.3 473.5,94.2 467.3,93.6ZM487.9,93.9 493.1,92.5 491.9,94.5 488.6,95.4ZM718.6,99.3 719.8,104.9 722.2,104.4 723.8,99.9 728.5,98.5 730.2,97.6 732.8,98.5 735.4,95.4 738.5,95.4 739.9,94.2 742.3,94.2 744.9,92.2 745.1,88.4 746.5,84.5 747.5,80.8 746.3,74.9 743.4,75.5 742.7,79.3 742.3,83.0 739.4,86.0 736.1,86.9 734.9,88.9 733.3,92.2 730.9,92.2 726.2,92.8 722.6,95.4 721.2,97.1ZM742.7,74.6 745.1,71.4 750.3,73.0 755.8,68.8 754.6,65.9 749.8,65.5 746.8,61.9 746.5,68.2 743.4,69.8ZM747.5,59.8 751.0,57.4 749.8,49.3 753.4,49.3 750.5,38.2 749.8,29.1 747.9,32.3 747.0,42.0 747.7,52.9ZM697.8,121.1 700.2,121.6 699.0,125.5 697.3,129.3 695.7,126.8 696.6,122.9ZM668.7,136.1 672.9,134.1 674.1,135.4 672.5,138.1 670.1,138.9ZM600.3,159.6 603.6,162.5 605.0,166.1 603.1,168.0 601.3,168.5 600.3,164.9ZM696.6,138.1 700.6,138.4 700.2,143.1 699.0,145.6 701.3,149.2 704.9,150.5 704.9,152.6 701.3,150.5 697.8,150.0 696.6,148.0 695.4,144.3ZM700.2,166.1 703.7,162.3 708.4,159.4 710.8,164.9 708.4,168.5 707.2,169.0 704.9,167.3ZM702.5,155.3 708.4,153.4 708.4,158.4 703.7,160.1 700.2,157.7ZM689.0,162.8 694.2,157.0 694.9,157.7 689.7,163.2ZM637.0,169.4 642.2,170.4 648.1,175.6 651.6,178.0 656.4,182.7 658.7,186.2 662.3,189.8 661.8,196.4 658.7,196.4 653.5,192.2 649.3,186.2 645.7,181.5 642.2,176.8ZM660.4,198.1 663.5,196.9 668.2,198.1 673.7,197.9 677.7,199.1 682.2,201.0 682.4,203.4 676.5,202.4 669.4,201.0 663.5,200.0ZM669.4,179.2 670.8,178.0 674.8,176.8 678.9,175.1 682.4,171.6 686.0,167.3 688.3,166.1 690.0,167.8 693.5,170.1 690.7,172.5 690.2,176.8 693.1,180.3 689.5,182.7 687.1,186.2 687.1,191.0 682.9,192.2 678.9,190.5 675.3,189.8 672.2,186.7 669.4,182.7ZM694.9,180.8 697.8,179.6 702.5,180.6 707.2,179.2 704.9,181.8 699.0,181.5 696.1,184.8 699.0,185.1 703.2,184.6 700.2,187.4 701.3,191.0 702.5,195.3 699.4,193.6 697.8,189.3 696.1,189.8 696.4,195.7 694.2,195.7 693.8,191.0 692.6,189.1ZM721.4,184.6 725.0,183.6 728.5,184.6 730.9,190.5 736.8,186.5 744.4,188.9 753.4,191.7 756.5,195.3 760.5,196.9 759.3,198.8 762.9,202.9 767.6,207.2 761.7,207.0 758.1,204.1 753.4,201.0 749.8,204.6 745.1,204.3 740.4,201.7 738.0,202.6 739.2,199.3 738.0,195.7 732.1,193.1 726.2,192.2 725.7,189.3ZM686.0,202.6 693.1,202.4 702.5,202.2 707.2,202.2 712.0,202.6 704.9,207.0 695.4,205.5 686.0,203.8ZM762.9,196.0 767.6,195.0 771.6,192.6 771.1,195.0 766.4,197.4ZM680.0,236.1 681.7,235.6 687.8,232.3 693.1,231.0 699.0,228.5 700.9,224.0 703.7,224.3 704.9,221.5 708.4,217.4 712.0,216.2 715.5,218.4 718.4,218.4 717.9,214.9 721.0,212.3 725.0,210.1 730.9,211.5 735.2,211.8 733.3,214.9 732.1,218.1 735.6,220.6 740.8,224.3 744.6,224.8 746.3,218.6 746.8,213.2 748.7,208.4 751.0,213.2 751.7,217.1 755.3,218.6 756.5,223.5 757.6,228.3 761.7,231.0 764.7,234.8 768.3,239.9 772.3,243.8 774.0,247.8 774.9,253.4 773.5,259.9 771.1,264.9 769.2,268.0 767.6,272.6 766.4,277.6 761.7,279.7 757.6,283.1 753.9,280.6 751.0,282.4 745.1,280.3 742.3,276.8 740.4,273.2 738.5,272.6 739.2,270.6 737.5,265.5 735.2,268.9 733.3,270.6 731.4,269.8 729.0,264.9 723.8,262.7 716.7,261.6 709.6,263.5 704.9,265.5 703.7,268.0 697.8,267.8 694.2,269.5 690.7,271.2 686.0,270.9 683.6,269.2 685.0,264.1 685.2,261.3 683.6,257.2 681.7,251.8 681.2,247.8 679.6,243.8 680.5,239.9ZM753.9,288.3 758.1,289.5 762.1,288.6 762.4,292.4 761.2,296.2 758.1,297.6 755.8,295.3 754.6,291.8ZM820.1,269.5 823.9,271.8 826.7,275.6 827.9,278.8 832.6,278.8 833.4,281.5 830.3,284.6 830.0,287.7 826.3,291.1 825.1,290.2 825.5,286.1 822.7,284.0 824.6,281.5 824.8,277.0 820.8,271.2ZM820.1,287.7 823.9,289.9 823.2,292.4 820.3,297.2 816.1,300.5 809.0,307.3 805.4,304.9 810.2,298.9 816.1,294.0 818.5,289.2ZM865.8,-27.2 872.9,-8.1 873.3,1.3 879.3,4.2 880.0,9.8 887.1,10.7 890.6,10.2 891.1,15.1 884.7,22.1 878.8,25.4 873.3,28.3 877.6,27.5 882.3,25.4 888.2,22.1 894.2,16.5 898.9,12.0 900.6,6.5 903.6,-0.1 906.0,-1.6 907.2,4.2 904.3,7.9 909.5,5.1 913.1,2.7 917.8,0.3 922.6,4.2 928.5,4.6 933.2,6.1 937.9,10.7 941.5,15.1 943.9,20.4 947.4,25.0 952.1,27.9 955.2,30.3 958.0,35.1 960.9,40.1 962.8,43.5 967.5,46.4 971.8,48.6 973.4,52.2 968.2,51.5 969.6,58.1 969.9,63.9 968.7,70.4 969.2,78.0 970.3,82.3 973.4,86.0 974.8,89.5 977.9,95.4 982.7,97.1 986.0,100.8 988.1,106.0 991.2,111.0 993.1,114.2 997.1,119.5 999.5,123.4 1003.0,127.0 1004.4,126.0 1002.3,123.1 999.9,118.4 997.1,114.2 995.4,110.4 991.9,105.5 991.9,103.6 995.4,104.7 997.6,109.3 1001.6,114.7 1004.7,119.0 1008.2,123.1 1012.0,126.8 1013.6,130.8 1013.4,133.9 1016.5,136.9 1021.5,139.4 1026.7,142.1 1031.4,144.1 1036.1,145.1 1039.4,143.9 1043.2,146.1 1045.6,148.0 1050.3,149.7 1055.1,151.2 1056.5,151.9 1059.8,155.3 1060.5,158.2 1062.2,159.4 1065.2,162.0 1067.4,163.5 1071.6,165.1 1073.3,165.4 1074.0,163.0 1075.2,161.6 1077.5,162.8 1079.4,164.9 1080.4,162.3 1077.3,160.1 1074.0,160.8 1070.4,161.6 1068.1,160.1 1065.7,157.5 1065.2,154.1 1066.2,148.0 1066.4,146.8 1063.3,144.8 1059.8,144.6 1055.1,144.8 1053.2,144.3 1054.3,140.6 1055.5,138.6 1056.2,135.6 1057.9,131.4 1056.2,130.6 1052.7,130.8 1049.4,131.9 1048.7,135.6 1046.8,137.9 1043.2,138.4 1039.7,138.9 1036.6,137.4 1034.9,135.4 1033.0,131.9 1031.9,128.0 1032.1,124.2 1033.3,119.0 1032.8,115.0 1036.1,111.8 1039.2,109.6 1043.2,108.8 1046.8,109.6 1049.1,110.4 1052.0,110.7 1051.5,107.7 1055.1,107.1 1058.6,107.1 1061.4,109.1 1064.5,108.2 1066.9,111.0 1067.6,114.2 1069.2,117.6 1070.9,120.0 1072.1,121.1 1073.3,120.3 1074.0,116.8 1072.8,112.3 1070.9,108.2 1071.1,104.1 1074.0,101.0 1076.8,97.6 1079.9,95.6 1082.7,94.2 1084.6,93.3 1083.4,88.9 1083.9,86.9 1085.3,83.9 1087.0,81.4 1088.2,77.7 1092.9,76.2 1095.3,74.6 1097.6,74.0 1097.6,73.0 1095.7,71.4 1096.5,68.2 1100.0,66.5 1104.7,64.2 1107.1,62.6 1109.9,61.2 1107.1,67.5 1109.5,68.2 1113.0,64.9 1118.9,62.2 1121.3,59.8 1120.1,56.4 1117.8,60.2 1114.2,60.5 1110.7,58.8 1109.5,54.7 1110.7,50.1 1107.1,48.6 1101.2,51.1 1096.5,55.7 1098.8,52.2 1103.6,47.9 1107.1,45.0 1114.2,44.6 1121.3,44.6 1124.8,40.8 1129.6,38.9 1131.5,36.2 1130.8,32.3 1126.0,27.1 1121.3,24.2 1117.8,17.8 1116.6,11.1 1111.8,3.2 1110.7,2.3 1107.1,8.8 1102.4,11.1 1098.8,8.8 1097.6,-0.6 1092.9,-4.6 1085.8,-7.1 1078.7,-7.6 1079.2,1.8 1079.9,8.8 1077.5,10.2 1081.1,17.8 1082.3,22.1 1078.7,27.1 1075.2,30.3 1076.3,36.2 1076.3,40.1 1072.8,40.8 1069.2,35.1 1068.5,28.3 1068.1,25.4 1062.2,24.2 1055.1,19.9 1050.3,16.9 1044.4,16.9 1043.7,11.1 1039.7,8.8 1039.2,1.8 1043.2,-5.6 1050.3,-16.0 1050.3,-67.1 865.8,-67.1ZM959.5,42.7 965.1,44.2 971.1,51.1 968.7,51.1 965.1,48.2 960.4,45.7ZM894.2,133.9 896.5,134.9 895.1,136.9 893.9,135.4Z" fill="none" stroke="#e9ecef" stroke-width=".5" opacity=".28"/>
</svg><div class="abs" style="left:173px;top:46.5px;transform:translate(-50%,-50%);font-size:10.5px;color:#fff;white-space:nowrap;letter-spacing:0px;text-shadow:0 0 1px #000,0 0 1px #000,1px 1px 0 #000,-1px -1px 0 #000,1px -1px 0 #000,-1px 1px 0 #000">NORTH AMERICA</div><div class="abs" style="left:468px;top:43.5px;transform:translate(-50%,-50%);font-size:10.5px;color:#fff;white-space:nowrap;letter-spacing:0px;text-shadow:0 0 1px #000,0 0 1px #000,1px 1px 0 #000,-1px -1px 0 #000,1px -1px 0 #000,-1px 1px 0 #000">EUROPE</div><div class="abs" style="left:638px;top:63.5px;transform:translate(-50%,-50%);font-size:10.5px;color:#fff;white-space:nowrap;letter-spacing:0px;text-shadow:0 0 1px #000,0 0 1px #000,1px 1px 0 #000,-1px -1px 0 #000,1px -1px 0 #000,-1px 1px 0 #000">ASIA</div><div class="abs" style="left:463px;top:158.5px;transform:translate(-50%,-50%);font-size:10.5px;color:#fff;white-space:nowrap;letter-spacing:0px;text-shadow:0 0 1px #000,0 0 1px #000,1px 1px 0 #000,-1px -1px 0 #000,1px -1px 0 #000,-1px 1px 0 #000">AFRICA</div><div class="abs" style="left:276px;top:210.5px;transform:translate(-50%,-50%);font-size:10.5px;color:#fff;white-space:nowrap;letter-spacing:0px;text-shadow:0 0 1px #000,0 0 1px #000,1px 1px 0 #000,-1px -1px 0 #000,1px -1px 0 #000,-1px 1px 0 #000">SOUTH AMERICA</div><div class="abs" style="left:731px;top:247px;transform:translate(-50%,-50%);font-size:10.5px;color:#fff;white-space:nowrap;letter-spacing:0px;text-shadow:0 0 1px #000,0 0 1px #000,1px 1px 0 #000,-1px -1px 0 #000,1px -1px 0 #000,-1px 1px 0 #000">AUSTRALIA</div><div class="abs" style="left:82px;top:157px;transform:translate(-50%,-50%);font-size:10px;line-height:12.5px;font-style:italic;color:#1b97da;white-space:nowrap;text-align:center;letter-spacing:.4px">Pacific Ocean</div><div class="abs" style="left:325px;top:113.5px;transform:translate(-50%,-50%);font-size:10px;line-height:12.5px;font-style:italic;color:#1b97da;white-space:nowrap;text-align:center;letter-spacing:.4px">Atlantic<br>Ocean</div><div class="abs" style="left:598px;top:243.5px;transform:translate(-50%,-50%);font-size:10px;line-height:12.5px;font-style:italic;color:#1b97da;white-space:nowrap;text-align:center;letter-spacing:.4px">Indian Ocean</div><div class="abs" style="left:792px;top:104px;transform:translate(-50%,-50%);font-size:10px;line-height:12.5px;font-style:italic;color:#1b97da;white-space:nowrap;text-align:center;letter-spacing:.4px">Pacific Ocean</div><div class="abs" style="left:942px;top:157px;transform:translate(-50%,-50%);font-size:10px;line-height:12.5px;font-style:italic;color:#1b97da;white-space:nowrap;text-align:center;letter-spacing:.4px">Pacific Ocean</div><div class="abs" style="left:196.5px;top:67.0px;width:11px;height:11px;border-radius:50%;background:#e01b1b;border:2px solid #fff;box-shadow:0 0 1px rgba(0,0,0,.5)"></div><div class="abs" style="left:226.5px;top:74.5px;width:11px;height:11px;border-radius:50%;background:#e01b1b;border:2px solid #fff;box-shadow:0 0 1px rgba(0,0,0,.5)"></div><div class="abs" style="left:236.5px;top:65.5px;width:11px;height:11px;border-radius:50%;background:#e01b1b;border:2px solid #fff;box-shadow:0 0 1px rgba(0,0,0,.5)"></div><div class="abs" style="left:175.5px;top:94.5px;width:11px;height:11px;border-radius:50%;background:#e01b1b;border:2px solid #fff;box-shadow:0 0 1px rgba(0,0,0,.5)"></div><div class="abs" style="left:169.5px;top:130.5px;width:11px;height:11px;border-radius:50%;background:#e01b1b;border:2px solid #fff;box-shadow:0 0 1px rgba(0,0,0,.5)"></div><div class="abs" style="left:294.5px;top:234.5px;width:11px;height:11px;border-radius:50%;background:#e01b1b;border:2px solid #fff;box-shadow:0 0 1px rgba(0,0,0,.5)"></div><div class="abs" style="left:266.5px;top:265.0px;width:11px;height:11px;border-radius:50%;background:#e01b1b;border:2px solid #fff;box-shadow:0 0 1px rgba(0,0,0,.5)"></div><div class="abs" style="left:403.5px;top:43.0px;width:11px;height:11px;border-radius:50%;background:#e01b1b;border:2px solid #fff;box-shadow:0 0 1px rgba(0,0,0,.5)"></div><div class="abs" style="left:411.5px;top:38.0px;width:11px;height:11px;border-radius:50%;background:#e01b1b;border:2px solid #fff;box-shadow:0 0 1px rgba(0,0,0,.5)"></div><div class="abs" style="left:436.5px;top:31.0px;width:11px;height:11px;border-radius:50%;background:#e01b1b;border:2px solid #fff;box-shadow:0 0 1px rgba(0,0,0,.5)"></div><div class="abs" style="left:424.5px;top:50.0px;width:11px;height:11px;border-radius:50%;background:#e01b1b;border:2px solid #fff;box-shadow:0 0 1px rgba(0,0,0,.5)"></div><div class="abs" style="left:413.5px;top:62.0px;width:11px;height:11px;border-radius:50%;background:#e01b1b;border:2px solid #fff;box-shadow:0 0 1px rgba(0,0,0,.5)"></div><div class="abs" style="left:409.5px;top:69.0px;width:11px;height:11px;border-radius:50%;background:#e01b1b;border:2px solid #fff;box-shadow:0 0 1px rgba(0,0,0,.5)"></div><div class="abs" style="left:498.5px;top:124.5px;width:11px;height:11px;border-radius:50%;background:#e01b1b;border:2px solid #fff;box-shadow:0 0 1px rgba(0,0,0,.5)"></div><div class="abs" style="left:763.5px;top:263.0px;width:11px;height:11px;border-radius:50%;background:#e01b1b;border:2px solid #fff;box-shadow:0 0 1px rgba(0,0,0,.5)"></div><div class="abs" style="left:9px;top:9px;width:21px;height:43px;background:#fff;border-radius:4px;box-shadow:0 0 2px rgba(0,0,0,.4);color:#111;font:bold 15px/21px 'Liberation Sans',sans-serif;text-align:center"><div style="height:22px;border-bottom:1px solid #ddd">+</div><div style="height:21px;line-height:18px">&#8722;</div></div><div class="abs" style="left:910px;top:270px;font:bold 17px/20px 'Liberation Sans',sans-serif;color:#fff;letter-spacing:-.5px">esri</div><div class="abs" style="left:657px;top:5px;width:270px;height:160px;background:rgba(243,245,247,.93);border-radius:8px;font-family:'DejaVu Sans',sans-serif;color:#444"><div class="abs" style="left:13px;top:13.500px;font-size:12.600px;font-weight:bold;color:#111;white-space:nowrap;letter-spacing:-.22px;line-height:16px">Capital Projects per Gross Area (fy)</div><div class="abs" style="left:13px;top:29px;width:39px;height:17px;background:#1a9a3c"></div><div class="abs" style="left:13px;top:46px;width:39px;height:16px;background:#f2f235"></div><div class="abs" style="left:13px;top:62px;width:39px;height:17px;background:#d21f1f"></div><div class="abs" style="left:57px;top:30px;font-size:10.5px;line-height:14px;white-space:nowrap">&lt; $-1.0</div><div class="abs" style="left:57px;top:47px;font-size:10.5px;line-height:14px;white-space:nowrap">$-1.0 - $-3.0</div><div class="abs" style="left:57px;top:63px;font-size:10.5px;line-height:14px;white-space:nowrap">&gt; $-3.0</div><div class="abs" style="left:13px;top:80px;font-size:12.600px;font-weight:bold;color:#111;white-space:nowrap;line-height:16px;letter-spacing:.65px">FCI (%)</div><svg class="abs" style="left:20px;top:96px" width="26" height="52" viewBox="0 0 26 52" fill="rgba(255,255,255,.3)" stroke="#999" stroke-width=".8"><circle cx="12.6" cy="8.5" r="3.6"/><circle cx="12.6" cy="24.5" r="6.3"/><circle cx="12.6" cy="41.8" r="9"/></svg><div class="abs" style="left:57px;top:97px;font-size:10.5px;line-height:14px;white-space:nowrap">&lt; 15.00%</div><div class="abs" style="left:57px;top:113px;font-size:10.5px;line-height:14px;white-space:nowrap">15.00% - 16.00%</div><div class="abs" style="left:57px;top:131px;font-size:10.5px;line-height:14px;white-space:nowrap">&gt; 16.00%</div><svg class="abs" style="left:250px;top:6px" width="15" height="15" viewBox="0 0 15 15"><circle cx="7.5" cy="7.5" r="6.6" fill="#c9cdd1"/><path d="M4.8 4.8l5.4 5.4M10.2 4.8l-5.4 5.4" stroke="#eef0f2" stroke-width="1.4"/></svg></div></div>
<svg class="abs" style="left:1109px;top:383px" width="20" height="5" viewBox="0 0 20 5" fill="#c3c9d3"><rect x="0" y="0" width="1" height="1"/><rect x="0" y="3" width="1" height="1"/><rect x="3" y="0" width="1" height="1"/><rect x="3" y="3" width="1" height="1"/><rect x="6" y="0" width="1" height="1"/><rect x="6" y="3" width="1" height="1"/><rect x="9" y="0" width="1" height="1"/><rect x="9" y="3" width="1" height="1"/><rect x="12" y="0" width="1" height="1"/><rect x="12" y="3" width="1" height="1"/><rect x="15" y="0" width="1" height="1"/><rect x="15" y="3" width="1" height="1"/><rect x="18" y="0" width="1" height="1"/><rect x="18" y="3" width="1" height="1"/></svg><svg class="abs" style="left:650px;top:370px" width="5" height="20" viewBox="0 0 5 20" fill="#c3c9d3"><rect x="0" y="0" width="1" height="1"/><rect x="3" y="0" width="1" height="1"/><rect x="0" y="3" width="1" height="1"/><rect x="3" y="3" width="1" height="1"/><rect x="0" y="6" width="1" height="1"/><rect x="3" y="6" width="1" height="1"/><rect x="0" y="9" width="1" height="1"/><rect x="3" y="9" width="1" height="1"/><rect x="0" y="12" width="1" height="1"/><rect x="3" y="12" width="1" height="1"/><rect x="0" y="15" width="1" height="1"/><rect x="3" y="15" width="1" height="1"/><rect x="0" y="18" width="1" height="1"/><rect x="3" y="18" width="1" height="1"/></svg><div class="abs" style="left:655px;top:389.2px;width:944px;height:39.4px;background:#d0d5d9"></div><div class="abs" style="left:794px;top:389.2px;width:126px;height:33.8px;background:#dfe3e6;border-top:2px solid #f6c61a"></div><div class="abs os" style="left:672px;top:400px;font-size:12.5px;line-height:16px;color:#4b6b8d;white-space:nowrap;letter-spacing:-.1px">Analysis Scorecard</div><div class="abs os" style="left:810px;top:400px;font-size:12.5px;line-height:16px;font-weight:bold;color:#1e3e69;white-space:nowrap;letter-spacing:-.55px">Asset Scorecard</div><div class="abs os" style="left:953px;width:127px;background:#2e79c3;border-radius:4px 0 0 4px;top:394px;height:20px;line-height:22.4px;font-size:11px;font-weight:bold;color:#fff;text-align:center;white-space:nowrap;letter-spacing:-.5px">Filter by Analysis Map</div><div class="abs os" style="left:1080px;width:115px;background:#1b4e8f;top:394px;height:20px;line-height:22.4px;font-size:11px;font-weight:bold;color:#fff;text-align:center;white-space:nowrap;letter-spacing:-.5px">Filter by Asset Map</div><div class="abs os" style="left:1195px;width:168px;background:#2e79c3;border-radius:0 4px 4px 0;top:394px;height:20px;line-height:22.4px;font-size:11px;font-weight:bold;color:#fff;text-align:center;white-space:nowrap;letter-spacing:-.5px">Filter Asset Map by Scorecard</div><div class="abs os" style="left:1380px;top:394px;width:85px;height:20px;background:#eef0f2;font-size:11.5px;line-height:22.6px;color:#555;text-align:center;white-space:nowrap;letter-spacing:-.05px">Select Metrics</div><svg class="abs" style="left:710px;top:438px" width="10" height="10" viewBox="0 0 10 10"><rect x=".5" y=".5" width="9" height="9" rx="1.8" fill="#ececec" stroke="#a8a8a8"/><path d="M2.2 5 L4.2 7.2 L8.3 1.8" fill="none" stroke="#222" stroke-width="1.7"/></svg><div class="abs os" style="left:723px;top:437.2px;font-size:11.5px;line-height:15px;color:#444;white-space:nowrap;letter-spacing:0">Buildings</div><svg class="abs" style="left:778px;top:438px" width="10" height="10" viewBox="0 0 10 10"><rect x=".5" y=".5" width="9" height="9" rx="1.8" fill="#ececec" stroke="#a8a8a8"/><path d="M2.2 5 L4.2 7.2 L8.3 1.8" fill="none" stroke="#222" stroke-width="1.7"/></svg><div class="abs os" style="left:790px;top:437.2px;font-size:11.5px;line-height:15px;color:#444;white-space:nowrap;letter-spacing:0">Properties</div><svg class="abs" style="left:851px;top:438px" width="10" height="10" viewBox="0 0 10 10"><rect x=".5" y=".5" width="9" height="9" rx="1.8" fill="#ececec" stroke="#a8a8a8"/></svg><div class="abs os" style="left:864px;top:437.2px;font-size:11.5px;line-height:15px;color:#444;white-space:nowrap;letter-spacing:0">Capital Projects</div><svg class="abs" style="left:952px;top:438px" width="10" height="10" viewBox="0 0 10 10"><rect x=".5" y=".5" width="9" height="9" rx="1.8" fill="#ececec" stroke="#a8a8a8"/></svg><div class="abs os" style="left:964px;top:437.2px;font-size:11.5px;line-height:15px;color:#444;white-space:nowrap;letter-spacing:0">Capital Equipment</div><svg class="abs" style="left:1096px;top:436px" width="11" height="14" viewBox="0 0 11 14" fill="none" stroke="#8a8a8a" stroke-width="1.1"><path d="M3.2 5H1.2V12.8H9.8V5H7.8M5.5 8.5V1.2M3.3 3.3L5.5 1.1L7.7 3.3"/></svg><svg class="abs" style="left:1124px;top:437px" width="15" height="12" viewBox="0 0 15 12" fill="#777"><path d="M8.5 0.5 L14.5 5 L8.5 9.5 V6.8 C5 6.8 2.5 8 0.8 11 C1 6.5 4 3.6 8.5 3.2 Z"/></svg><div class="abs" style="left:680.5px;top:461px;width:1px;height:101px;background:#d0dcec"></div><div class="abs" style="left:714.5px;top:461px;width:1px;height:101px;background:#d0dcec"></div><div class="abs" style="left:748.5px;top:461px;width:1px;height:101px;background:#d0dcec"></div><div class="abs" style="left:783.5px;top:461px;width:1px;height:101px;background:#d0dcec"></div><div class="abs" style="left:819.0px;top:461px;width:1px;height:101px;background:#d0dcec"></div><div class="abs" style="left:914.5px;top:461px;width:1px;height:101px;background:#d0dcec"></div><div class="abs" style="left:1015.0px;top:461px;width:1px;height:101px;background:#d0dcec"></div><div class="abs" style="left:1080.0px;top:461px;width:1px;height:101px;background:#d0dcec"></div><div class="abs" style="left:1176.0px;top:461px;width:1px;height:101px;background:#d0dcec"></div><div class="abs" style="left:1272.0px;top:461px;width:1px;height:101px;background:#d0dcec"></div><div class="abs" style="left:1368.0px;top:461px;width:1px;height:101px;background:#d0dcec"></div><div class="abs" style="left:1464.0px;top:461px;width:1px;height:101px;background:#d0dcec"></div><div class="abs" style="left:1560.0px;top:461px;width:1px;height:101px;background:#d0dcec"></div><div class="abs" style="left:655px;top:561px;width:945px;height:1px;background:#dde5f0"></div><svg class="abs" style="left:659px;top:494px" width="10" height="10" viewBox="0 0 10 10"><rect x=".5" y=".5" width="9" height="9" rx="1.8" fill="#ececec" stroke="#a8a8a8"/></svg><div class="abs" style="left:836px;top:516.3px;font-style:italic;font-size:12px;line-height:15px;color:#222;white-space:nowrap;-webkit-text-stroke:.2px #222;letter-spacing:-.05px">Building</div><svg class="abs" style="left:899.5px;top:520px" width="7" height="10" viewBox="0 0 7 10"><path d="M0 4 L3.5 0 L7 4Z" fill="#2b8de0"/><path d="M0 6 L3.5 10 L7 6Z" fill="#b9bec4"/></svg><div class="abs" style="left:932px;top:516.3px;font-style:italic;font-size:12px;line-height:15px;color:#222;white-space:nowrap;-webkit-text-stroke:.2px #222;letter-spacing:-.05px">Property</div><svg class="abs" style="left:1000.5px;top:520px" width="7" height="10" viewBox="0 0 7 10"><path d="M0 4 L3.5 0 L7 4Z" fill="#2b8de0"/><path d="M0 6 L3.5 10 L7 6Z" fill="#b9bec4"/></svg><div class="abs" style="left:1033px;top:516.3px;font-style:italic;font-size:12px;line-height:15px;color:#222;white-space:nowrap;-webkit-text-stroke:.2px #222;letter-spacing:-.05px">Use</div><svg class="abs" style="left:1065px;top:520px" width="7" height="10" viewBox="0 0 7 10"><path d="M0 4 L3.5 0 L7 4Z" fill="#b9bec4"/><path d="M0 6 L3.5 10 L7 6Z" fill="#b9bec4"/></svg><div class="abs" style="right:441px;top:501.29999999999995px;text-align:right;font-style:italic;font-size:12px;line-height:15px;color:#222;white-space:nowrap;-webkit-text-stroke:.2px #222;letter-spacing:-.05px">Capital<br>Projects (fy)</div><svg class="abs" style="left:1163px;top:520px" width="7" height="10" viewBox="0 0 7 10"><path d="M0 4 L3.5 0 L7 4Z" fill="#b9bec4"/><path d="M0 6 L3.5 10 L7 6Z" fill="#b9bec4"/></svg><div class="abs" style="right:345px;top:471.29999999999995px;text-align:right;font-style:italic;font-size:12px;line-height:15px;color:#222;white-space:nowrap;-webkit-text-stroke:.2px #222;letter-spacing:-.05px">Capital<br>Projects per<br>Gross Area<br>(fy)</div><svg class="abs" style="left:1259px;top:520px" width="7" height="10" viewBox="0 0 7 10"><path d="M0 4 L3.5 0 L7 4Z" fill="#b9bec4"/><path d="M0 6 L3.5 10 L7 6Z" fill="#b9bec4"/></svg><div class="abs" style="right:249px;top:516.3px;text-align:right;font-style:italic;font-size:12px;line-height:15px;color:#222;white-space:nowrap;-webkit-text-stroke:.2px #222;letter-spacing:-.05px">FCI (%)</div><svg class="abs" style="left:1355px;top:520px" width="7" height="10" viewBox="0 0 7 10"><path d="M0 4 L3.5 0 L7 4Z" fill="#b9bec4"/><path d="M0 6 L3.5 10 L7 6Z" fill="#b9bec4"/></svg><div class="abs" style="right:153px;top:516.3px;text-align:right;font-style:italic;font-size:12px;line-height:15px;color:#222;white-space:nowrap;-webkit-text-stroke:.2px #222;letter-spacing:-.05px">Criticality</div><svg class="abs" style="left:1451px;top:520px" width="7" height="10" viewBox="0 0 7 10"><path d="M0 4 L3.5 0 L7 4Z" fill="#b9bec4"/><path d="M0 6 L3.5 10 L7 6Z" fill="#b9bec4"/></svg><div class="abs" style="right:57px;top:516.3px;text-align:right;font-style:italic;font-size:12px;line-height:15px;color:#222;white-space:nowrap;-webkit-text-stroke:.2px #222;letter-spacing:-.05px">NPV (3 Year)</div><svg class="abs" style="left:1547px;top:520px" width="7" height="10" viewBox="0 0 7 10"><path d="M0 4 L3.5 0 L7 4Z" fill="#b9bec4"/><path d="M0 6 L3.5 10 L7 6Z" fill="#b9bec4"/></svg><div class="abs" style="left:1561px;top:471.3px;width:39px;height:75px;overflow:hidden"><div class="abs" style="left:-35px;top:0;text-align:right;width:100px;font-style:italic;font-size:12px;line-height:15px;color:#222;white-space:nowrap;-webkit-text-stroke:.2px #222;letter-spacing:-.05px">Planned<br>Capital<br>Projects (3<br>year)&nbsp;&nbsp;</div></div><div class="abs" style="left:823px;top:541px;width:88px;height:17px;background:#fff;border:1px solid #dfe3ea;border-radius:2px"></div><div class="abs" style="left:919px;top:541px;width:88px;height:17px;background:#fff;border:1px solid #dfe3ea;border-radius:2px"></div><div class="abs" style="left:1020px;top:541px;width:58px;height:17px;background:#fff;border:1px solid #dfe3ea;border-radius:2px"><span style="position:absolute;right:5px;top:1px;font-size:10px;line-height:14px;color:#111">&#9660;</span></div><div class="abs" style="left:1085px;top:541px;width:88px;height:17px;background:#fff;border:1px solid #dfe3ea;border-radius:2px"></div><div class="abs" style="left:1181px;top:541px;width:88px;height:17px;background:#fff;border:1px solid #dfe3ea;border-radius:2px"></div><div class="abs" style="left:1277px;top:541px;width:88px;height:17px;background:#fff;border:1px solid #dfe3ea;border-radius:2px"></div><div class="abs" style="left:1373px;top:541px;width:88px;height:17px;background:#fff;border:1px solid #dfe3ea;border-radius:2px"></div><div class="abs" style="left:1469px;top:541px;width:88px;height:17px;background:#fff;border:1px solid #dfe3ea;border-radius:2px"></div><div class="abs" style="left:1565px;top:541px;width:45px;height:17px;background:#fff;border:1px solid #dfe3ea;border-radius:2px"></div><div class="abs" style="left:1174px;top:562px;width:192px;height:111px;background:#eafbe9"></div><div class="abs" style="left:655px;top:583.4px;width:931px;height:1px;background:#d5e2f2"></div><svg class="abs" style="left:659px;top:567px" width="10" height="10" viewBox="0 0 10 10"><rect x=".5" y=".5" width="9" height="9" rx="1.8" fill="#ececec" stroke="#a8a8a8"/></svg><svg class="abs" style="left:697.5px;top:565px" width="13" height="12" viewBox="0 0 13 12"><g fill="#4a7ab5"><rect x="0" y="0" width="2" height="12"/><rect x="2.5" y="2" width="3" height="5"/><rect x="6.5" y="1" width="3" height="6"/><rect x="10.5" y="2" width="2.5" height="5"/></g><g fill="none" stroke="#4a7ab5" stroke-width=".9"><rect x="3" y="8.5" width="2.2" height="2.5"/><rect x="7" y="8.5" width="2.2" height="2.5"/><rect x="10.6" y="8.5" width="2" height="2.5"/></g></svg><svg class="abs" style="left:731px;top:565px" width="12" height="12" viewBox="0 0 12 12" fill="#4a7ab5"><rect x="0" y="6.5" width="3" height="5.5"/><rect x="4.3" y="3.5" width="3" height="8.5"/><rect x="8.6" y="0" width="3.2" height="12"/></svg><svg class="abs" style="left:765.5px;top:565px" width="9" height="12" viewBox="0 0 9 12"><path d="M4.5 0.3C2.1 0.3 0.4 2 0.4 4.2C0.4 7 4.5 11.7 4.5 11.7C4.5 11.7 8.6 7 8.6 4.2C8.6 2 6.9 0.3 4.5 0.3Z" fill="#8a8a8a"/><circle cx="4.5" cy="4.1" r="1.5" fill="#fff"/></svg><svg class="abs" style="left:797.5px;top:564px" width="12" height="12" viewBox="0 0 12 12"><circle cx="6" cy="6" r="5.2" fill="none" stroke="#8a8a8a" stroke-width="1"/><rect x="5.4" y="5" width="1.3" height="4" fill="#777"/><circle cx="6.05" cy="3.3" r=".85" fill="#777"/></svg><div class="abs os" style="left:914px;top:566.2px;font-size:11.5px;line-height:15px;color:#444;white-space:nowrap;letter-spacing:-.1px">2 HARRISON PARK</div><div class="abs os" style="left:1016.5px;top:566.2px;font-size:11.5px;line-height:15px;color:#444;white-space:nowrap;letter-spacing:-.1px">UNKNOWN</div><div class="abs" style="right:430px;top:565.2px;font-size:12px;line-height:15px;color:#333;white-space:nowrap;text-align:right;transform:scaleX(.89);transform-origin:100% 50%">$0.00</div><div class="abs" style="right:334px;top:565.2px;font-size:12px;line-height:15px;color:#333;white-space:nowrap;text-align:right;transform:scaleX(.89);transform-origin:100% 50%">$0.00</div><div class="abs" style="right:238px;top:565.2px;font-size:12px;line-height:15px;color:#333;white-space:nowrap;text-align:right;transform:scaleX(.89);transform-origin:100% 50%">0.00</div><div class="abs" style="right:142px;top:565.2px;font-size:12px;line-height:15px;color:#333;white-space:nowrap;text-align:right;transform:scaleX(.89);transform-origin:100% 50%">0</div><div class="abs" style="right:45.5px;top:565.2px;font-size:12px;line-height:15px;color:#333;white-space:nowrap;text-align:right;transform:scaleX(.89);transform-origin:100% 50%">$0.00</div><div class="abs" style="left:655px;top:605.6px;width:931px;height:1px;background:#d5e2f2"></div><svg class="abs" style="left:659px;top:590px" width="10" height="10" viewBox="0 0 10 10"><rect x=".5" y=".5" width="9" height="9" rx="1.8" fill="#ececec" stroke="#a8a8a8"/></svg><svg class="abs" style="left:697.5px;top:587px" width="13" height="12" viewBox="0 0 13 12"><g fill="#4a7ab5"><rect x="0" y="0" width="2" height="12"/><rect x="2.5" y="2" width="3" height="5"/><rect x="6.5" y="1" width="3" height="6"/><rect x="10.5" y="2" width="2.5" height="5"/></g><g fill="none" stroke="#4a7ab5" stroke-width=".9"><rect x="3" y="8.5" width="2.2" height="2.5"/><rect x="7" y="8.5" width="2.2" height="2.5"/><rect x="10.6" y="8.5" width="2" height="2.5"/></g></svg><svg class="abs" style="left:731px;top:587px" width="12" height="12" viewBox="0 0 12 12" fill="#4a7ab5"><rect x="0" y="6.5" width="3" height="5.5"/><rect x="4.3" y="3.5" width="3" height="8.5"/><rect x="8.6" y="0" width="3.2" height="12"/></svg><svg class="abs" style="left:765.5px;top:587px" width="9" height="12" viewBox="0 0 9 12"><path d="M4.5 0.3C2.1 0.3 0.4 2 0.4 4.2C0.4 7 4.5 11.7 4.5 11.7C4.5 11.7 8.6 7 8.6 4.2C8.6 2 6.9 0.3 4.5 0.3Z" fill="#8a8a8a"/><circle cx="4.5" cy="4.1" r="1.5" fill="#fff"/></svg><svg class="abs" style="left:797.5px;top:586px" width="12" height="12" viewBox="0 0 12 12"><circle cx="6" cy="6" r="5.2" fill="none" stroke="#8a8a8a" stroke-width="1"/><rect x="5.4" y="5" width="1.3" height="4" fill="#777"/><circle cx="6.05" cy="3.3" r=".85" fill="#777"/></svg><div class="abs os" style="left:914px;top:588.5px;font-size:11.5px;line-height:15px;color:#444;white-space:nowrap;letter-spacing:-.1px">BED-NB</div><div class="abs os" style="left:1016.5px;top:588.5px;font-size:11.5px;line-height:15px;color:#444;white-space:nowrap;letter-spacing:-.1px">UNKNOWN</div><div class="abs" style="right:430px;top:587.5px;font-size:12px;line-height:15px;color:#333;white-space:nowrap;text-align:right;transform:scaleX(.89);transform-origin:100% 50%">$0.00</div><div class="abs" style="right:334px;top:587.5px;font-size:12px;line-height:15px;color:#333;white-space:nowrap;text-align:right;transform:scaleX(.89);transform-origin:100% 50%">$0.00</div><div class="abs" style="right:238px;top:587.5px;font-size:12px;line-height:15px;color:#333;white-space:nowrap;text-align:right;transform:scaleX(.89);transform-origin:100% 50%">0.00</div><div class="abs" style="right:142px;top:587.5px;font-size:12px;line-height:15px;color:#333;white-space:nowrap;text-align:right;transform:scaleX(.89);transform-origin:100% 50%">0</div><div class="abs" style="right:45.5px;top:587.5px;font-size:12px;line-height:15px;color:#333;white-space:nowrap;text-align:right;transform:scaleX(.89);transform-origin:100% 50%">$-38,877,787.00</div><div class="abs" style="left:655px;top:628.1px;width:931px;height:1px;background:#d5e2f2"></div><svg class="abs" style="left:659px;top:612px" width="10" height="10" viewBox="0 0 10 10"><rect x=".5" y=".5" width="9" height="9" rx="1.8" fill="#ececec" stroke="#a8a8a8"/></svg><svg class="abs" style="left:697.5px;top:609px" width="13" height="12" viewBox="0 0 13 12"><g fill="#4a7ab5"><rect x="0" y="0" width="2" height="12"/><rect x="2.5" y="2" width="3" height="5"/><rect x="6.5" y="1" width="3" height="6"/><rect x="10.5" y="2" width="2.5" height="5"/></g><g fill="none" stroke="#4a7ab5" stroke-width=".9"><rect x="3" y="8.5" width="2.2" height="2.5"/><rect x="7" y="8.5" width="2.2" height="2.5"/><rect x="10.6" y="8.5" width="2" height="2.5"/></g></svg><svg class="abs" style="left:731px;top:609px" width="12" height="12" viewBox="0 0 12 12" fill="#4a7ab5"><rect x="0" y="6.5" width="3" height="5.5"/><rect x="4.3" y="3.5" width="3" height="8.5"/><rect x="8.6" y="0" width="3.2" height="12"/></svg><svg class="abs" style="left:765.5px;top:609px" width="9" height="12" viewBox="0 0 9 12"><path d="M4.5 0.3C2.1 0.3 0.4 2 0.4 4.2C0.4 7 4.5 11.7 4.5 11.7C4.5 11.7 8.6 7 8.6 4.2C8.6 2 6.9 0.3 4.5 0.3Z" fill="#8a8a8a"/><circle cx="4.5" cy="4.1" r="1.5" fill="#fff"/></svg><svg class="abs" style="left:797.5px;top:609px" width="12" height="12" viewBox="0 0 12 12"><circle cx="6" cy="6" r="5.2" fill="none" stroke="#8a8a8a" stroke-width="1"/><rect x="5.4" y="5" width="1.3" height="4" fill="#777"/><circle cx="6.05" cy="3.3" r=".85" fill="#777"/></svg><div class="abs os" style="left:914px;top:610.85px;font-size:11.5px;line-height:15px;color:#444;white-space:nowrap;letter-spacing:-.1px">BED-NC01</div><div class="abs os" style="left:1016.5px;top:610.85px;font-size:11.5px;line-height:15px;color:#444;white-space:nowrap;letter-spacing:-.1px">UNKNOWN</div><div class="abs" style="right:430px;top:609.85px;font-size:12px;line-height:15px;color:#333;white-space:nowrap;text-align:right;transform:scaleX(.89);transform-origin:100% 50%">$0.00</div><div class="abs" style="right:334px;top:609.85px;font-size:12px;line-height:15px;color:#333;white-space:nowrap;text-align:right;transform:scaleX(.89);transform-origin:100% 50%">$0.00</div><div class="abs" style="right:238px;top:609.85px;font-size:12px;line-height:15px;color:#333;white-space:nowrap;text-align:right;transform:scaleX(.89);transform-origin:100% 50%">0.00</div><div class="abs" style="right:142px;top:609.85px;font-size:12px;line-height:15px;color:#333;white-space:nowrap;text-align:right;transform:scaleX(.89);transform-origin:100% 50%">0</div><div class="abs" style="right:45.5px;top:609.85px;font-size:12px;line-height:15px;color:#333;white-space:nowrap;text-align:right;transform:scaleX(.89);transform-origin:100% 50%">$-44,314,023.00</div><div class="abs" style="left:655px;top:650.9px;width:931px;height:1px;background:#d5e2f2"></div><svg class="abs" style="left:659px;top:634px" width="10" height="10" viewBox="0 0 10 10"><rect x=".5" y=".5" width="9" height="9" rx="1.8" fill="#ececec" stroke="#a8a8a8"/></svg><svg class="abs" style="left:697.5px;top:632px" width="13" height="12" viewBox="0 0 13 12"><g fill="#4a7ab5"><rect x="0" y="0" width="2" height="12"/><rect x="2.5" y="2" width="3" height="5"/><rect x="6.5" y="1" width="3" height="6"/><rect x="10.5" y="2" width="2.5" height="5"/></g><g fill="none" stroke="#4a7ab5" stroke-width=".9"><rect x="3" y="8.5" width="2.2" height="2.5"/><rect x="7" y="8.5" width="2.2" height="2.5"/><rect x="10.6" y="8.5" width="2" height="2.5"/></g></svg><svg class="abs" style="left:731px;top:632px" width="12" height="12" viewBox="0 0 12 12" fill="#4a7ab5"><rect x="0" y="6.5" width="3" height="5.5"/><rect x="4.3" y="3.5" width="3" height="8.5"/><rect x="8.6" y="0" width="3.2" height="12"/></svg><svg class="abs" style="left:765.5px;top:632px" width="9" height="12" viewBox="0 0 9 12"><path d="M4.5 0.3C2.1 0.3 0.4 2 0.4 4.2C0.4 7 4.5 11.7 4.5 11.7C4.5 11.7 8.6 7 8.6 4.2C8.6 2 6.9 0.3 4.5 0.3Z" fill="#8a8a8a"/><circle cx="4.5" cy="4.1" r="1.5" fill="#fff"/></svg><svg class="abs" style="left:797.5px;top:632px" width="12" height="12" viewBox="0 0 12 12"><circle cx="6" cy="6" r="5.2" fill="none" stroke="#8a8a8a" stroke-width="1"/><rect x="5.4" y="5" width="1.3" height="4" fill="#777"/><circle cx="6.05" cy="3.3" r=".85" fill="#777"/></svg><div class="abs os" style="left:914px;top:633.5px;font-size:11.5px;line-height:15px;color:#444;white-space:nowrap;letter-spacing:-.1px">BED-NC02</div><div class="abs os" style="left:1016.5px;top:633.5px;font-size:11.5px;line-height:15px;color:#444;white-space:nowrap;letter-spacing:-.1px">UNKNOWN</div><div class="abs" style="right:430px;top:632.5px;font-size:12px;line-height:15px;color:#333;white-space:nowrap;text-align:right;transform:scaleX(.89);transform-origin:100% 50%">$0.00</div><div class="abs" style="right:334px;top:632.5px;font-size:12px;line-height:15px;color:#333;white-space:nowrap;text-align:right;transform:scaleX(.89);transform-origin:100% 50%">$0.00</div><div class="abs" style="right:238px;top:632.5px;font-size:12px;line-height:15px;color:#333;white-space:nowrap;text-align:right;transform:scaleX(.89);transform-origin:100% 50%">0.00</div><div class="abs" style="right:142px;top:632.5px;font-size:12px;line-height:15px;color:#333;white-space:nowrap;text-align:right;transform:scaleX(.89);transform-origin:100% 50%">0</div><div class="abs" style="right:45.5px;top:632.5px;font-size:12px;line-height:15px;color:#333;white-space:nowrap;text-align:right;transform:scaleX(.89);transform-origin:100% 50%">$-4,520,057.00</div><div class="abs" style="left:655px;top:672.8px;width:931px;height:1px;background:#d5e2f2"></div><svg class="abs" style="left:659px;top:657px" width="10" height="10" viewBox="0 0 10 10"><rect x=".5" y=".5" width="9" height="9" rx="1.8" fill="#ececec" stroke="#a8a8a8"/></svg><svg class="abs" style="left:697.5px;top:654px" width="13" height="12" viewBox="0 0 13 12"><g fill="#4a7ab5"><rect x="0" y="0" width="2" height="12"/><rect x="2.5" y="2" width="3" height="5"/><rect x="6.5" y="1" width="3" height="6"/><rect x="10.5" y="2" width="2.5" height="5"/></g><g fill="none" stroke="#4a7ab5" stroke-width=".9"><rect x="3" y="8.5" width="2.2" height="2.5"/><rect x="7" y="8.5" width="2.2" height="2.5"/><rect x="10.6" y="8.5" width="2" height="2.5"/></g></svg><svg class="abs" style="left:731px;top:654px" width="12" height="12" viewBox="0 0 12 12" fill="#4a7ab5"><rect x="0" y="6.5" width="3" height="5.5"/><rect x="4.3" y="3.5" width="3" height="8.5"/><rect x="8.6" y="0" width="3.2" height="12"/></svg><svg class="abs" style="left:765.5px;top:654px" width="9" height="12" viewBox="0 0 9 12"><path d="M4.5 0.3C2.1 0.3 0.4 2 0.4 4.2C0.4 7 4.5 11.7 4.5 11.7C4.5 11.7 8.6 7 8.6 4.2C8.6 2 6.9 0.3 4.5 0.3Z" fill="#8a8a8a"/><circle cx="4.5" cy="4.1" r="1.5" fill="#fff"/></svg><svg class="abs" style="left:797.5px;top:654px" width="12" height="12" viewBox="0 0 12 12"><circle cx="6" cy="6" r="5.2" fill="none" stroke="#8a8a8a" stroke-width="1"/><rect x="5.4" y="5" width="1.3" height="4" fill="#777"/><circle cx="6.05" cy="3.3" r=".85" fill="#777"/></svg><div class="abs os" style="left:914px;top:655.8499999999999px;font-size:11.5px;line-height:15px;color:#444;white-space:nowrap;letter-spacing:-.1px">BED-NC04</div><div class="abs os" style="left:1016.5px;top:655.8499999999999px;font-size:11.5px;line-height:15px;color:#444;white-space:nowrap;letter-spacing:-.1px">UNKNOWN</div><div class="abs" style="right:430px;top:654.8499999999999px;font-size:12px;line-height:15px;color:#333;white-space:nowrap;text-align:right;transform:scaleX(.89);transform-origin:100% 50%">$0.00</div><div class="abs" style="right:334px;top:654.8499999999999px;font-size:12px;line-height:15px;color:#333;white-space:nowrap;text-align:right;transform:scaleX(.89);transform-origin:100% 50%">$0.00</div><div class="abs" style="right:238px;top:654.8499999999999px;font-size:12px;line-height:15px;color:#333;white-space:nowrap;text-align:right;transform:scaleX(.89);transform-origin:100% 50%">0.00</div><div class="abs" style="right:142px;top:654.8499999999999px;font-size:12px;line-height:15px;color:#333;white-space:nowrap;text-align:right;transform:scaleX(.89);transform-origin:100% 50%">0</div><div class="abs" style="right:45.5px;top:654.8499999999999px;font-size:12px;line-height:15px;color:#333;white-space:nowrap;text-align:right;transform:scaleX(.89);transform-origin:100% 50%">$-3,248,409.00</div><div class="abs" style="right:430.5px;top:689.5px;font-size:12px;line-height:15px;color:#333;white-space:nowrap;text-align:right;transform:scaleX(.89);transform-origin:100% 50%;font-weight:bold;color:#222;transform:scaleX(.89)">0.00</div><div class="abs" style="right:334.5px;top:689.5px;font-size:12px;line-height:15px;color:#333;white-space:nowrap;text-align:right;transform:scaleX(.89);transform-origin:100% 50%;font-weight:bold;color:#222;transform:scaleX(.89)">0.00</div><div class="abs" style="right:238.5px;top:689.5px;font-size:12px;line-height:15px;color:#333;white-space:nowrap;text-align:right;transform:scaleX(.89);transform-origin:100% 50%;font-weight:bold;color:#222;transform:scaleX(.89)">0.00</div><div class="abs" style="right:142px;top:689.5px;font-size:12px;line-height:15px;color:#333;white-space:nowrap;text-align:right;transform:scaleX(.89);transform-origin:100% 50%;font-weight:bold;color:#222;transform:scaleX(.89)">0</div><div class="abs" style="right:46px;top:689.5px;font-size:12px;line-height:15px;color:#333;white-space:nowrap;text-align:right;transform:scaleX(.89);transform-origin:100% 50%;font-weight:bold;color:#222;transform:scaleX(.89)">-908,356,637.00</div><div class="abs" style="left:57px;top:748px;width:1543px;height:2px;background:#f1f1f1"></div>
</body></html>
